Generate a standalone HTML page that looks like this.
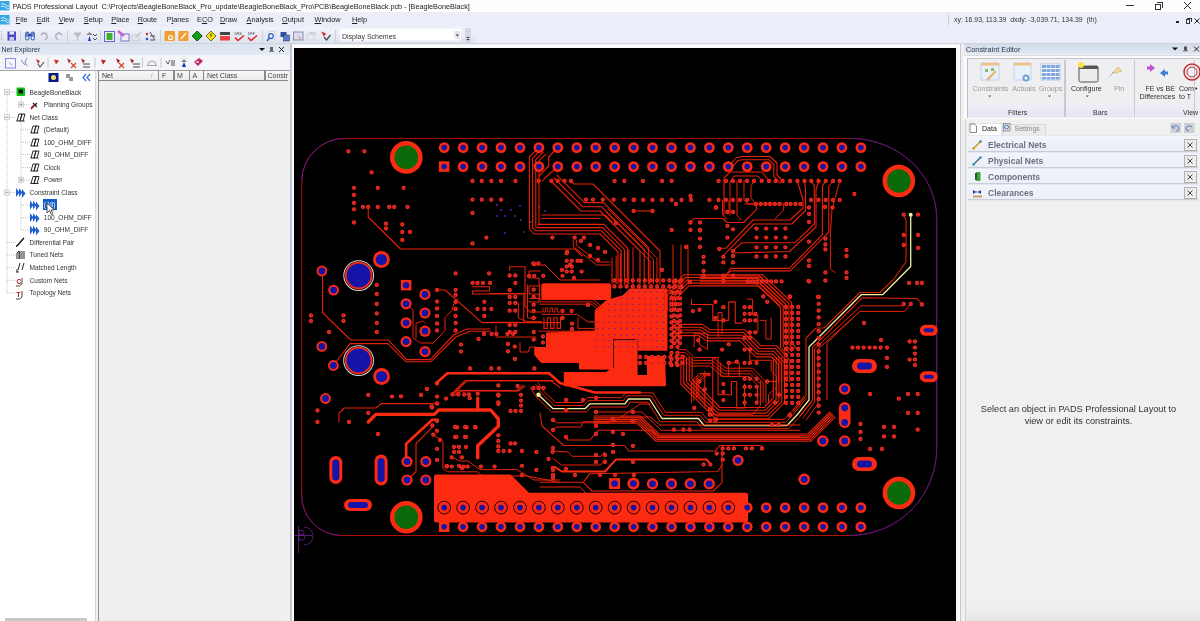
<!DOCTYPE html>
<html><head><meta charset="utf-8">
<style>
*{margin:0;padding:0;box-sizing:border-box}
html,body{width:1200px;height:621px;overflow:hidden;background:#f0f0f0;font-family:"Liberation Sans",sans-serif;font-size:7px;color:#1e1e1e;position:relative}
.a{position:absolute}
.t{position:absolute;white-space:pre;line-height:1}
#title{left:0;top:0;width:1200px;height:12px;background:#fefefe}
#menu{left:0;top:12px;width:1200px;height:15px;background:#ebeef8}
#tool{left:0;top:27px;width:1200px;height:17px;background:#ebeef8;border-bottom:1px solid #d0d3de}
#tool::before{content:'';position:absolute;left:0;top:0;width:475px;height:16px;background:linear-gradient(#f1f3fa,#dfe3ef)}
.sep{position:absolute;top:30px;width:1px;height:12px;background:#c8ccd8}
.ic{position:absolute;top:31px;width:10px;height:10px}
.mi{top:4.3px;font-size:7.3px;color:#222}
#lpanel{left:0;top:44px;width:291px;height:577px;background:#f0f0f0}
#nehdr{left:0;top:44px;width:290px;height:11px;background:linear-gradient(#dae3ef,#e4ebf4)}
#netool{left:0;top:55px;width:290px;height:15.5px;background:#f4f5f9;border-bottom:1px solid #a8a8a8}
#tree{left:0;top:71px;width:96px;height:550px;background:#fff;border-right:1px solid #d8d8d8}
#list{left:98px;top:70px;width:189px;height:551px;background:#efefef;border-left:1.5px solid #8d8d8d}
.tr{position:absolute;font-size:6.55px;color:#333;white-space:pre;line-height:1}
#canvas{left:294px;top:48px;width:662px;height:573px;background:#000}
#rpanel{left:957px;top:44px;width:243px;height:577px;background:#f0f0f0}
.sec{left:10.7px;width:230.5px;height:15.4px;background:linear-gradient(#f4f5fb,#eceef6);border-bottom:1px solid #c8ccd8}
.sec::after{content:"";position:absolute;left:216.5px;top:2.5px;width:11px;height:10px;background:#ededed;border:1px solid #b0b0b0}
.sx{position:absolute;left:219.5px;width:5px;height:5px}
.sect{left:31px;font-size:8.5px;font-weight:bold;color:#687080}
u{text-decoration:underline;text-decoration-thickness:0.5px;text-underline-offset:1px}
</style></head><body><div id="wrap" style="position:absolute;left:0;top:0;width:1200px;height:621px;overflow:hidden;filter:blur(0.3px);background:#f0f0f0">
<!-- title bar -->
<div id="title" class="a">
  <svg class="a" style="left:0;top:1px" width="10" height="10"><rect x="0" y="0" width="9.5" height="9.5" fill="#3aa6e4"/><path d="M1,3 q3,-1 5,1 t3,1 M1,5.5 q3,-1 5,1 t3,1" stroke="#e8f6ff" stroke-width="0.9" fill="none"/></svg>
  <div class="t" style="left:12.5px;top:2.5px;font-size:7.25px;color:#222">PADS Professional Layout  C:\Projects\BeagleBoneBlack_Pro_update\BeagleBoneBlack_Pro\PCB\BeagleBoneBlack.pcb - [BeagleBoneBlack]</div>
  <div class="a" style="left:1126px;top:5px;width:8px;height:1px;background:#333"></div>
  <div class="a" style="left:1155px;top:3.5px;width:6px;height:6px;border:1px solid #333;background:#fefefe"></div><div class="a" style="left:1157px;top:1.5px;width:6px;height:6px;border-top:1px solid #333;border-right:1px solid #333"></div>
  <svg class="a" style="left:1183px;top:1px" width="9" height="9"><path d="M1,1 L8,8 M8,1 L1,8" stroke="#222" stroke-width="1"/></svg>
</div>
<!-- menu -->
<div id="menu" class="a">
  <svg class="a" style="left:0;top:2.5px" width="10" height="10"><rect x="0" y="0" width="9.5" height="9.5" fill="#3aa6e4"/><path d="M1,3 q3,-1 5,1 t3,1 M1,5.5 q3,-1 5,1 t3,1" stroke="#e8f6ff" stroke-width="0.9" fill="none"/></svg>
  <div class="t mi" style="left:15.8px"><u>F</u>ile</div>
  <div class="t mi" style="left:36.7px"><u>E</u>dit</div>
  <div class="t mi" style="left:58.7px"><u>V</u>iew</div>
  <div class="t mi" style="left:83.8px"><u>S</u>etup</div>
  <div class="t mi" style="left:111.3px"><u>P</u>lace</div>
  <div class="t mi" style="left:137.7px"><u>R</u>oute</div>
  <div class="t mi" style="left:166.7px">P<u>l</u>anes</div>
  <div class="t mi" style="left:197px">E<u>C</u>O</div>
  <div class="t mi" style="left:220px"><u>D</u>raw</div>
  <div class="t mi" style="left:246.6px"><u>A</u>nalysis</div>
  <div class="t mi" style="left:282px"><u>O</u>utput</div>
  <div class="t mi" style="left:314.5px"><u>W</u>indow</div>
  <div class="t mi" style="left:352px"><u>H</u>elp</div>
  <div class="a" style="left:948px;top:3px;width:1px;height:10px;background:#c8c8d0"></div>
  <div class="t" style="left:954px;top:4.5px;font-size:6.9px;color:#333">xy: 16.93, 113.39  dxdy: -3,039.71, 134.39  (th)</div>
  <div class="a" style="left:1176px;top:9px;width:3px;height:1.5px;background:#222"></div>
  <div class="a" style="left:1185.5px;top:7px;width:4.5px;height:4.5px;border:1px solid #333"></div><div class="a" style="left:1187px;top:5.5px;width:4.5px;height:4.5px;border-top:1px solid #333;border-right:1px solid #333"></div>
  <svg class="a" style="left:1194px;top:5.5px" width="6" height="6"><path d="M0.5,0.5 L5.5,5.5 M5.5,0.5 L0.5,5.5" stroke="#222" stroke-width="1"/></svg>
</div>
<!-- toolbar -->
<div id="tool" class="a">
  <div class="a" style="left:1px;top:4px;width:1px;height:9px;border-left:1px dotted #9aa"></div>
  <svg class="a" style="left:0;top:0" width="480" height="17" viewBox="0 27 480 17">
   <rect x="7.5" y="31.5" width="8.5" height="9" fill="#4a4ac8"/><rect x="9.5" y="31.5" width="4.5" height="3" fill="#e8e8f8"/><rect x="9.5" y="37" width="4.5" height="3.5" fill="#ccd"/>
   <line x1="20.5" y1="30" x2="20.5" y2="42" stroke="#cdd0dc"/>
   <rect x="25.5" y="32" width="3.5" height="8" rx="1.5" fill="#6a8ad0" stroke="#2848a0" stroke-width="0.7"/><rect x="31" y="32" width="3.5" height="8" rx="1.5" fill="#6a8ad0" stroke="#2848a0" stroke-width="0.7"/><rect x="28.5" y="34" width="3" height="2" fill="#2848a0"/><circle cx="27.2" cy="38" r="1.2" fill="#e8f0ff"/><circle cx="32.8" cy="38" r="1.2" fill="#e8f0ff"/>
   <path d="M41,35 q3,-4 6,0 q1,3 -2,5" fill="none" stroke="#aab" stroke-width="1.3"/><path d="M62,35 q-3,-4 -6,0 q-1,3 2,5" fill="none" stroke="#aab" stroke-width="1.3"/>
   <line x1="67.5" y1="30" x2="67.5" y2="42" stroke="#cdd0dc"/>
   <path d="M74,33 h7 l-3.5,4 z M77.5,37 v4" fill="#b8b8c0" stroke="#b8b8c0"/>
   <path d="M86,35 h7 l-3.5,-3 z" fill="#888"/><path d="M88,41 l1.5,-5 l1.5,5z" fill="#1030d0"/><path d="M93,34 l2,2 l2,-2 M93,38 l2,2 l2,-2" stroke="#555" fill="none"/>
   <line x1="100.5" y1="30" x2="100.5" y2="42" stroke="#cdd0dc"/>
   <rect x="104.5" y="31.5" width="10" height="10" fill="#eef" stroke="#6060d8"/><rect x="106.5" y="33" width="6" height="7" fill="#40b030"/>
   <rect x="121" y="34" width="8" height="7" fill="#eef" stroke="#7070d8"/><path d="M118,31 l6,5" stroke="#d060d0" stroke-width="2.5"/>
   <rect x="132" y="35" width="7" height="6" fill="none" stroke="#c8c8d0"/><path d="M135,38 l6,-6" stroke="#c8c8d0" stroke-width="1.5"/>
   <circle cx="147" cy="34" r="1.2" fill="#e02020"/><circle cx="147" cy="39" r="1.2" fill="#2040e0"/><path d="M150,32 l5,8 M150,36 h5 M150,40 h5" stroke="#555" stroke-width="1"/>
   <line x1="160.5" y1="30" x2="160.5" y2="42" stroke="#cdd0dc"/>
   <rect x="164.5" y="31" width="10.5" height="10" rx="1" fill="#f0a030"/><circle cx="170.5" cy="37.5" r="2" fill="none" stroke="#fff" stroke-width="1.2"/>
   <rect x="178.3" y="31" width="10.2" height="10" rx="1" fill="#f0a030"/><path d="M181,39 l5,-6" stroke="#fff" stroke-width="1.2"/>
   <path d="M197.2,31 l5,5 l-5,5 l-5,-5z" fill="#10a010" stroke="#085008"/>
   <path d="M211,31 l5,5 l-5,5 l-5,-5z" fill="#f0e020" stroke="#807010"/><rect x="210.5" y="33.5" width="1" height="3" fill="#222"/>
   <rect x="220" y="32" width="10" height="3" fill="#444"/><rect x="220" y="36" width="10" height="4.5" fill="#f04040"/>
   <text x="234.5" y="35" font-size="3.5" fill="#333" font-family="Liberation Sans">DRS</text><path d="M235,37.5 l3,3 l6,-5" stroke="#e02020" stroke-width="1.4" fill="none"/>
   <text x="248" y="35" font-size="3.5" fill="#333" font-family="Liberation Sans">DFF</text><path d="M248,37.5 l3,3 l6,-5" stroke="#e02020" stroke-width="1.4" fill="none"/>
   <line x1="262.5" y1="30" x2="262.5" y2="42" stroke="#cdd0dc"/>
   <rect x="269" y="31.5" width="6" height="8" fill="#f4f4fa" stroke="#c0c4d0" stroke-width="0.6"/><circle cx="271" cy="36" r="2.3" fill="none" stroke="#2060c0" stroke-width="1.2"/><path d="M269.5,38 l-2.5,3" stroke="#2060c0" stroke-width="1.4"/>
   <rect x="280.5" y="32" width="6" height="5" fill="#3050a0"/><rect x="283.5" y="35" width="6" height="6" fill="#5080d0" stroke="#333" stroke-width="0.5"/>
   <rect x="293.5" y="32" width="9.5" height="8" fill="#dde" stroke="#6b7aa8" stroke-width="0.8"/><path d="M297,34 l4,5 l-1,1z" fill="#d0a060"/>
   <rect x="307" y="34" width="7" height="6" fill="#e8e8ee" stroke="#d4d4dc"/><rect x="309" y="32" width="7" height="3" fill="#d0d0d8"/>
   <path d="M321,31.5 l5,2 l-2,3z" fill="#e02020"/><path d="M324,37 l2.5,3 l4,-5" stroke="#444" stroke-width="1.3" fill="none"/>
   <line x1="335.5" y1="30" x2="335.5" y2="42" stroke="#cdd0dc"/>
   <rect x="340" y="28.8" width="121" height="11.8" fill="#fff"/><rect x="454.5" y="31" width="5.5" height="8" fill="#e4e4ea"/><path d="M455.8,34.5 h3 l-1.5,2z" fill="#333"/>
   <rect x="465" y="28" width="6" height="15" rx="1" fill="#d4d8e4"/><path d="M466.5,39 h3 l-1.5,1.5z" fill="#222"/><rect x="466.5" y="37" width="3" height="0.8" fill="#222"/>
  </svg>
  <div class="t" style="left:342px;top:5.7px;font-size:7px;color:#333">Display Schemes</div>
</div>
<div id="lpanel" class="a"></div>
<div id="nehdr" class="a">
  <div class="t" style="left:1.4px;top:2px;font-size:7px;color:#2a3550">Net Explorer</div>
  <svg class="a" style="left:255px;top:0" width="32" height="11"><path d="M4,4 h6 l-3,3z" fill="#111"/><rect x="15" y="3" width="3" height="4" fill="#666"/><rect x="14" y="7" width="5" height="0.8" fill="#666"/><path d="M24,3 l5,5 M29,3 l-5,5" stroke="#222" stroke-width="1"/></svg>
</div>
<div id="netool" class="a">
  <svg class="a" style="left:0;top:0" width="287" height="15" viewBox="0 55 287 15">
   <rect x="5.5" y="58.5" width="10" height="9.5" fill="#f4f4ff" stroke="#7b80e0" stroke-width="0.9"/><path d="M8,61 l5,4 l-2,0.5z" fill="#bbb"/>
   <path d="M21,60 l4,5 M27,58 l-2,4 l2,4" stroke="#7a8ab8" stroke-width="1" fill="none"/>
   <path d="M36,59 l4,2 l-2,3z" fill="#c03030"/><path d="M38,64 l2,3 l4,-5" stroke="#555" stroke-width="1.2" fill="none"/>
   <line x1="48" y1="57.5" x2="48" y2="68" stroke="#c4c8d4"/>
   <path d="M54,59.5 l5,1 l-3,4z" fill="#d03020"/>
   <path d="M67,58.5 l4,2 l-2,3z" fill="#b03030"/><path d="M71,63 l5,5 M76,63 l-5,5" stroke="#e04020" stroke-width="1.1"/>
   <path d="M81,58.5 l4,2 l-2,3z" fill="#b03030"/><path d="M83,64 h7 M83,67 h7" stroke="#333" stroke-width="0.9"/>
   <line x1="95" y1="57.5" x2="95" y2="68" stroke="#c4c8d4"/>
   <path d="M101,59.5 l5,1 l-3,4z" fill="#c01818"/>
   <path d="M116,58.5 l4,2 l-2,3z" fill="#a01818"/><path d="M119,63 l5,5 M124,63 l-5,5" stroke="#e04020" stroke-width="1.1"/>
   <path d="M130,58.5 l4,2 l-2,3z" fill="#a01818"/><path d="M133,64 h7 M133,67 h7" stroke="#333" stroke-width="0.9"/>
   <line x1="142.5" y1="57.5" x2="142.5" y2="68" stroke="#c4c8d4"/>
   <path d="M148,65 a4,4 0 0 1 8,0 M147,65.5 h10" stroke="#999" stroke-width="0.9" fill="none"/>
   <line x1="161" y1="57.5" x2="161" y2="68" stroke="#c4c8d4"/>
   <path d="M166,61 l2,3 l2,-4 M171,61 h4 M171,63 h4 M171,65 h4" stroke="#444" stroke-width="0.9" fill="none"/>
   <path d="M181,62 h6 l-3,-3z" fill="#888"/><path d="M182,67 l2,-5 l2,5z" fill="#1030d0"/>
   <path d="M194,62 l5,-4 l4,3 l-5,5z" fill="#c02080"/><rect x="196" y="61" width="3" height="2" fill="#f0c040"/>
  </svg>
</div>
<div id="tree" class="a">
  <svg class="a" style="left:0;top:0" width="96" height="20" viewBox="0 71 96 20">
   <rect x="48.5" y="73" width="10" height="9" fill="#0a1a8a"/><circle cx="53.5" cy="77.5" r="2.5" fill="#f0e060"/>
   <path d="M66,74 h4 v3 h3 v4 h-4 v-3 h-3z" fill="#9a9a9a"/>
   <path d="M86,74 l-3,3.5 l3,3.5 M90,74 l-3,3.5 l3,3.5" stroke="#3070d0" stroke-width="1.2" fill="none"/>
  </svg>
  <svg class="a" style="left:0;top:0" width="96" height="240" viewBox="0 71 96 240">
   <g stroke="#a0a0a0" stroke-width="0.6" stroke-dasharray="1,1" fill="none">
    <path d="M7,95 V192.5 M7,192.5 V293 M10,92.2 H15 M10,117.4 H15 M10,192.5 H15 M7,242.5 H16 M7,255 H16 M7,267.6 H16 M7,280.3 H16 M7,293 H16"/>
    <path d="M21,95 V104.5 M24,104.5 H30 M21,120 V180 M21,129.6 H30 M21,142.3 H30 M21,154.5 H30 M21,167.5 H30 M24,180 H30 M21,195 V230 M21,205 H30 M21,217.7 H30 M21,230 H30"/>
   </g>
   <g fill="#f4f4f4" stroke="#b8b8b8" stroke-width="0.6">
    <rect x="4.5" y="89.7" width="5" height="5"/><rect x="4.5" y="114.9" width="5" height="5"/><rect x="4.5" y="190" width="5" height="5"/>
    <rect x="18.5" y="102" width="5" height="5"/><rect x="18.5" y="177.5" width="5" height="5"/>
   </g>
   <g stroke="#777" stroke-width="0.6"><path d="M5.5,92.2 h3 M5.5,117.4 h3 M5.5,192.5 h3 M19.5,104.5 h3 M19.5,180 h3 M21,103 v3 M21,178.5 v3"/></g>
   <rect x="16.5" y="87.5" width="8.5" height="8.5" rx="1" fill="#10c010"/><rect x="18.5" y="89.5" width="4.5" height="4" fill="#111"/>
   <path d="M31,109 l6,-6 M33,103 l4,4" stroke="#222" stroke-width="1.2"/><path d="M31,108 l3,-3" stroke="#e02020" stroke-width="1.4"/>
   <g fill="none" stroke="#111" stroke-width="0.9">
    <path d="M17,121 l2,-7 h3 l-2,7 M20,121 l2,-7 h3 l-2,7 M16.5,121 h8"/>
    <path d="M31,133 l2,-7 h3 l-2,7 M34,133 l2,-7 h3 l-2,7 M30.5,133 h8"/>
    <path d="M31,146 l2,-7 h3 l-2,7 M34,146 l2,-7 h3 l-2,7 M30.5,146 h8"/>
    <path d="M31,158 l2,-7 h3 l-2,7 M34,158 l2,-7 h3 l-2,7 M30.5,158 h8"/>
    <path d="M31,171 l2,-7 h3 l-2,7 M34,171 l2,-7 h3 l-2,7 M30.5,171 h8"/>
    <path d="M31,183.5 l2,-7 h3 l-2,7 M34,183.5 l2,-7 h3 l-2,7 M30.5,183.5 h8"/>
   </g>
   <g fill="#2060d0">
    <path d="M16,188 l3.5,4.5 l-3.5,4.5z M19,188 l3.5,4.5 l-3.5,4.5z M22,189 l3.5,4.5 l-3.5,4.5z"/>
    <path d="M30,200.5 l3.5,4.5 l-3.5,4.5z M33,200.5 l3.5,4.5 l-3.5,4.5z M36,201.5 l3.5,4.5 l-3.5,4.5z"/>
    <path d="M30,213 l3.5,4.5 l-3.5,4.5z M33,213 l3.5,4.5 l-3.5,4.5z M36,214 l3.5,4.5 l-3.5,4.5z"/>
    <path d="M30,225.5 l3.5,4.5 l-3.5,4.5z M33,225.5 l3.5,4.5 l-3.5,4.5z M36,226.5 l3.5,4.5 l-3.5,4.5z"/>
   </g>
   <path d="M17,246 l6,-7 M17,246 l-1,0 M23,239 l1,-1" stroke="#111" stroke-width="1.4"/>
   <path d="M17,259 v-6 l2,-2 v8 M20,259 v-8 M22,259 v-8 M24,259 v-8" stroke="#111" stroke-width="0.9" fill="none"/>
   <path d="M17,272 v-3 M18,270 l2,-7 M22,270 l2,-7 M16,272 h3" stroke="#111" stroke-width="0.9" fill="none"/>
   <text x="16.5" y="284" font-size="6.5" font-weight="bold" fill="#b01010" font-family="Liberation Sans">C</text><path d="M16,286 q4,1 6,-2 v-6" stroke="#111" stroke-width="0.8" fill="none"/>
   <text x="16.5" y="296.5" font-size="6.5" font-weight="bold" fill="#b01010" font-family="Liberation Sans">T</text><path d="M16,299 q4,1 6,-2 v-6" stroke="#111" stroke-width="0.8" fill="none"/>
  </svg>
  <div class="a" style="left:43px;top:127.7px;width:13.7px;height:11.8px;background:#1060d0"></div>
  <div class="tr" style="left:29.6px;top:18.5px">BeagleBoneBlack</div>
  <div class="tr" style="left:43.8px;top:30.8px">Planning Groups</div>
  <div class="tr" style="left:29.6px;top:43.7px">Net Class</div>
  <div class="tr" style="left:43.8px;top:55.9px">(Default)</div>
  <div class="tr" style="left:43.8px;top:68.6px">100_OHM_DIFF</div>
  <div class="tr" style="left:43.8px;top:80.8px">90_OHM_DIFF</div>
  <div class="tr" style="left:43.8px;top:93.8px">Clock</div>
  <div class="tr" style="left:43.8px;top:106.3px">Power</div>
  <div class="tr" style="left:29.6px;top:118.8px">Constraint Class</div>
  <div class="tr" style="left:43.8px;top:131.3px;color:#fff">(All)</div>
  <div class="tr" style="left:43.8px;top:144.0px">100_OHM_DIFF</div>
  <div class="tr" style="left:43.8px;top:156.3px">90_OHM_DIFF</div>
  <div class="tr" style="left:29.6px;top:168.8px">Differential Pair</div>
  <div class="tr" style="left:29.6px;top:181.3px">Tuned Nets</div>
  <div class="tr" style="left:29.6px;top:193.9px">Matched Length</div>
  <div class="tr" style="left:29.6px;top:206.6px">Custom Nets</div>
  <div class="tr" style="left:29.6px;top:219.2px">Topology Nets</div>
  <svg class="a" style="left:46px;top:131px" width="12" height="14"><path d="M1,1 v10 l2.5,-2.5 l2,4 l1.5,-0.8 l-2,-3.8 h3.5z" fill="#fff" stroke="#222" stroke-width="0.8"/></svg>
  <div class="a" style="left:5px;top:547px;width:82px;height:3px;background:#c8c8c8"></div>
</div>
<div id="list" class="a">
  <div class="a" style="left:0;top:0;width:189px;height:11px;background:linear-gradient(#f8f8f8,#ececec);border-bottom:1.5px solid #8a8a8a;border-top:1px solid #9a9a9a"></div>
  <div class="a" style="left:58.5px;top:0;width:1.5px;height:11px;background:#8a8a8a"></div>
  <div class="a" style="left:74px;top:0;width:1.5px;height:11px;background:#8a8a8a"></div>
  <div class="a" style="left:89.5px;top:0;width:1.5px;height:11px;background:#8a8a8a"></div>
  <div class="a" style="left:103.5px;top:0;width:1.5px;height:11px;background:#8a8a8a"></div>
  <div class="a" style="left:165px;top:0;width:1.5px;height:11px;background:#8a8a8a"></div>
  <div class="t" style="left:3px;top:2.3px;font-size:7px;color:#333">Net</div>
  <div class="t" style="left:52px;top:2.3px;font-size:6px;color:#999">/</div>
  <div class="t" style="left:63px;top:2.3px;font-size:7px;color:#444">F</div>
  <div class="t" style="left:78px;top:2.3px;font-size:7px;color:#444">M</div>
  <div class="t" style="left:93.5px;top:2.3px;font-size:7px;color:#444">A</div>
  <div class="t" style="left:108px;top:2.3px;font-size:7px;color:#444">Net Class</div>
  <div class="t" style="left:168.5px;top:2.3px;font-size:7px;color:#444">Constr</div>
</div>
<div class="a" style="left:290px;top:44px;width:1.5px;height:577px;background:#c0c4d0"></div><div class="a" style="left:291.5px;top:45px;width:664.5px;height:576px;background:#fbfbfd"></div><div id="canvas" class="a"></div>
<svg class="a" style="left:0;top:0" width="1200" height="621" viewBox="0 0 1200 621"><defs><clipPath id="cc"><rect x="294" y="48" width="662" height="573"/></clipPath></defs><g clip-path="url(#cc)">
<rect x="541.3" y="283.3" width="69.8" height="16.7" rx="2.5" fill="#fc2a10"/>
<polygon points="630.0,289.2 666.7,289.2 666.7,350.0 638.4,350.0 638.4,338.4 612.7,338.4 612.7,368.5 595.4,368.5 595.4,310.7 607.0,300.6 623.0,296.0" fill="#fc2a10" stroke="#fc2a10" stroke-width="1.5" stroke-linejoin="round"/>
<polygon points="547.0,333.5 612.7,331.0 612.7,368.5 580.0,368.5 580.0,362.0 541.7,362.0 535.2,354.6 535.2,348.1 547.0,348.1" fill="#fc2a10" stroke="#fc2a10" stroke-width="2" stroke-linejoin="round"/>
<polygon points="612.7,338.4 636.6,338.4 636.6,376.0 648.0,376.0 648.0,357.0 664.0,357.0 665.0,385.3 564.8,385.3 564.8,373.1 606.5,373.1 612.7,368.5" fill="#fc2a10" stroke="#fc2a10" stroke-width="2" stroke-linejoin="round"/>
<polygon points="651.0,357.4 662.0,357.4 664.0,385.3 648.0,385.3 651.0,371.3" fill="#fc2a10" stroke="#fc2a10" stroke-width="1.5" stroke-linejoin="round"/>
<path d="M613.5,368 V339.5 H636" fill="none" stroke="#3a0800" stroke-width="0.9"/>
<polyline points="544.0,317.7 544.0,317.7 544.0,328.4 547.3,328.4 547.3,328.4 547.3,317.7 550.6,317.7 550.6,317.7 550.6,328.4 553.9,328.4 553.9,328.4 553.9,317.7 557.2,317.7 557.2,317.7 557.2,328.4 560.5,328.4 560.5,328.4 560.5,317.7 563.8,317.7" fill="none" stroke="#e82008" stroke-width="1.1" stroke-linejoin="round" stroke-linecap="round"/>
<polyline points="543.0,308.0 543.0,308.0 543.0,312.0 545.4,312.0 545.4,312.0 545.4,308.0 547.8,308.0 547.8,308.0 547.8,312.0 550.2,312.0 550.2,312.0 550.2,308.0 552.6,308.0 552.6,308.0 552.6,312.0 555.0,312.0 555.0,312.0 555.0,308.0 557.4,308.0 557.4,308.0 557.4,312.0 559.8,312.0" fill="none" stroke="#e82008" stroke-width="0.9" stroke-linejoin="round" stroke-linecap="round"/>
<polyline points="490.0,293.5 523.8,293.5 523.8,322.2 536.0,322.2" fill="none" stroke="#e82008" stroke-width="1.1" stroke-linejoin="round" stroke-linecap="round"/>
<polyline points="527.5,285.0 527.5,318.0 536.0,318.0" fill="none" stroke="#e82008" stroke-width="1.0" stroke-linejoin="round" stroke-linecap="round"/>
<polyline points="490.0,322.2 520.0,322.2" fill="none" stroke="#e82008" stroke-width="1.1" stroke-linejoin="round" stroke-linecap="round"/>
<polyline points="530.0,298.5 539.6,298.5 539.6,285.0" fill="none" stroke="#e82008" stroke-width="1.0" stroke-linejoin="round" stroke-linecap="round"/>
<polyline points="539.6,304.2 591.5,304.2 600.0,311.0" fill="none" stroke="#e82008" stroke-width="1.0" stroke-linejoin="round" stroke-linecap="round"/>
<polyline points="539.6,301.9 592.3,301.9 601.4,309.2" fill="none" stroke="#e82008" stroke-width="1.0" stroke-linejoin="round" stroke-linecap="round"/>
<polyline points="539.6,299.6 593.1,299.6 602.9,307.4" fill="none" stroke="#e82008" stroke-width="1.0" stroke-linejoin="round" stroke-linecap="round"/>
<polyline points="541.9,314.3 576.8,314.3 588.0,322.0 600.0,322.0" fill="none" stroke="#e82008" stroke-width="1.0" stroke-linejoin="round" stroke-linecap="round"/>
<polyline points="578.0,317.7 578.0,328.4 600.0,328.4" fill="none" stroke="#e82008" stroke-width="1.0" stroke-linejoin="round" stroke-linecap="round"/>
<polyline points="538.5,331.2 593.7,331.2" fill="none" stroke="#e82008" stroke-width="1.0" stroke-linejoin="round" stroke-linecap="round"/>
<polyline points="496.0,326.0 496.0,337.0 536.0,337.0" fill="none" stroke="#e82008" stroke-width="1.0" stroke-linejoin="round" stroke-linecap="round"/>
<polyline points="520.0,343.0 520.0,352.0 528.0,352.0 530.0,347.0 536.0,347.0" fill="none" stroke="#e82008" stroke-width="1.0" stroke-linejoin="round" stroke-linecap="round"/>
<circle cx="533.7" cy="289.7" r="2.15" fill="#fc2a10"/><circle cx="533.7" cy="289.7" r="0.7" fill="#5a1a8a"/>
<circle cx="533.7" cy="297.0" r="2.15" fill="#fc2a10"/><circle cx="533.7" cy="297.0" r="0.7" fill="#5a1a8a"/>
<circle cx="533.7" cy="304.7" r="2.15" fill="#fc2a10"/><circle cx="533.7" cy="304.7" r="0.7" fill="#5a1a8a"/>
<circle cx="533.7" cy="311.0" r="2.15" fill="#fc2a10"/><circle cx="533.7" cy="311.0" r="0.7" fill="#5a1a8a"/>
<circle cx="533.7" cy="318.0" r="2.15" fill="#fc2a10"/><circle cx="533.7" cy="318.0" r="0.7" fill="#5a1a8a"/>
<circle cx="533.7" cy="332.0" r="2.15" fill="#fc2a10"/><circle cx="533.7" cy="332.0" r="0.7" fill="#5a1a8a"/>
<circle cx="533.7" cy="339.6" r="2.15" fill="#fc2a10"/><circle cx="533.7" cy="339.6" r="0.7" fill="#5a1a8a"/>
<circle cx="543.0" cy="336.5" r="2.15" fill="#fc2a10"/><circle cx="543.0" cy="336.5" r="0.7" fill="#5a1a8a"/>
<circle cx="543.0" cy="342.6" r="2.15" fill="#fc2a10"/><circle cx="543.0" cy="342.6" r="0.7" fill="#5a1a8a"/>
<circle cx="562.5" cy="311.0" r="2.15" fill="#fc2a10"/><circle cx="562.5" cy="311.0" r="0.7" fill="#5a1a8a"/>
<circle cx="571.6" cy="311.0" r="2.15" fill="#fc2a10"/><circle cx="571.6" cy="311.0" r="0.7" fill="#5a1a8a"/>
<circle cx="562.5" cy="318.0" r="2.15" fill="#fc2a10"/><circle cx="562.5" cy="318.0" r="0.7" fill="#5a1a8a"/>
<circle cx="572.0" cy="323.6" r="2.15" fill="#fc2a10"/><circle cx="572.0" cy="323.6" r="0.7" fill="#5a1a8a"/>
<circle cx="572.0" cy="329.0" r="2.15" fill="#fc2a10"/><circle cx="572.0" cy="329.0" r="0.7" fill="#5a1a8a"/>
<circle cx="588.0" cy="305.0" r="2.15" fill="#fc2a10"/><circle cx="588.0" cy="305.0" r="0.7" fill="#5a1a8a"/>
<circle cx="581.0" cy="241.0" r="2.15" fill="#fc2a10"/><circle cx="581.0" cy="241.0" r="0.7" fill="#5a1a8a"/>
<circle cx="590.0" cy="245.0" r="2.15" fill="#fc2a10"/><circle cx="590.0" cy="245.0" r="0.7" fill="#5a1a8a"/>
<circle cx="598.0" cy="248.0" r="2.15" fill="#fc2a10"/><circle cx="598.0" cy="248.0" r="0.7" fill="#5a1a8a"/>
<circle cx="605.0" cy="252.0" r="2.15" fill="#fc2a10"/><circle cx="605.0" cy="252.0" r="0.7" fill="#5a1a8a"/>
<circle cx="590.0" cy="256.0" r="2.15" fill="#fc2a10"/><circle cx="590.0" cy="256.0" r="0.7" fill="#5a1a8a"/>
<circle cx="598.0" cy="260.0" r="2.15" fill="#fc2a10"/><circle cx="598.0" cy="260.0" r="0.7" fill="#5a1a8a"/>
<circle cx="581.0" cy="261.0" r="2.15" fill="#fc2a10"/><circle cx="581.0" cy="261.0" r="0.7" fill="#5a1a8a"/>
<circle cx="567.0" cy="252.0" r="2.15" fill="#fc2a10"/><circle cx="567.0" cy="252.0" r="0.7" fill="#5a1a8a"/>
<circle cx="570.0" cy="265.0" r="2.15" fill="#fc2a10"/><circle cx="570.0" cy="265.0" r="0.7" fill="#5a1a8a"/>
<circle cx="574.0" cy="278.0" r="2.15" fill="#fc2a10"/><circle cx="574.0" cy="278.0" r="0.7" fill="#5a1a8a"/>
<circle cx="562.0" cy="270.0" r="2.15" fill="#fc2a10"/><circle cx="562.0" cy="270.0" r="0.7" fill="#5a1a8a"/>
<circle cx="597.0" cy="322.5" r="0.75" fill="#6a2090"/>
<circle cx="597.0" cy="328.6" r="0.75" fill="#6a2090"/>
<circle cx="597.0" cy="334.7" r="0.75" fill="#6a2090"/>
<circle cx="597.0" cy="340.8" r="0.75" fill="#6a2090"/>
<circle cx="597.0" cy="346.9" r="0.75" fill="#6a2090"/>
<circle cx="603.0" cy="322.5" r="0.75" fill="#6a2090"/>
<circle cx="603.0" cy="328.6" r="0.75" fill="#6a2090"/>
<circle cx="603.0" cy="334.7" r="0.75" fill="#6a2090"/>
<circle cx="603.0" cy="340.8" r="0.75" fill="#6a2090"/>
<circle cx="603.0" cy="346.9" r="0.75" fill="#6a2090"/>
<circle cx="609.0" cy="304.2" r="0.75" fill="#6a2090"/>
<circle cx="609.0" cy="310.3" r="0.75" fill="#6a2090"/>
<circle cx="609.0" cy="316.4" r="0.75" fill="#6a2090"/>
<circle cx="609.0" cy="322.5" r="0.75" fill="#6a2090"/>
<circle cx="609.0" cy="328.6" r="0.75" fill="#6a2090"/>
<circle cx="609.0" cy="334.7" r="0.75" fill="#6a2090"/>
<circle cx="609.0" cy="340.8" r="0.75" fill="#6a2090"/>
<circle cx="609.0" cy="346.9" r="0.75" fill="#6a2090"/>
<circle cx="615.0" cy="304.2" r="0.75" fill="#6a2090"/>
<circle cx="615.0" cy="310.3" r="0.75" fill="#6a2090"/>
<circle cx="615.0" cy="316.4" r="0.75" fill="#6a2090"/>
<circle cx="615.0" cy="322.5" r="0.75" fill="#6a2090"/>
<circle cx="615.0" cy="328.6" r="0.75" fill="#6a2090"/>
<circle cx="615.0" cy="334.7" r="0.75" fill="#6a2090"/>
<circle cx="615.0" cy="340.8" r="0.75" fill="#6a2090"/>
<circle cx="615.0" cy="346.9" r="0.75" fill="#6a2090"/>
<circle cx="621.0" cy="292.0" r="0.75" fill="#6a2090"/>
<circle cx="621.0" cy="298.1" r="0.75" fill="#6a2090"/>
<circle cx="621.0" cy="304.2" r="0.75" fill="#6a2090"/>
<circle cx="621.0" cy="310.3" r="0.75" fill="#6a2090"/>
<circle cx="621.0" cy="316.4" r="0.75" fill="#6a2090"/>
<circle cx="621.0" cy="322.5" r="0.75" fill="#6a2090"/>
<circle cx="621.0" cy="328.6" r="0.75" fill="#6a2090"/>
<circle cx="621.0" cy="334.7" r="0.75" fill="#6a2090"/>
<circle cx="621.0" cy="340.8" r="0.75" fill="#6a2090"/>
<circle cx="621.0" cy="346.9" r="0.75" fill="#6a2090"/>
<circle cx="627.0" cy="292.0" r="0.75" fill="#6a2090"/>
<circle cx="627.0" cy="298.1" r="0.75" fill="#6a2090"/>
<circle cx="627.0" cy="304.2" r="0.75" fill="#6a2090"/>
<circle cx="627.0" cy="310.3" r="0.75" fill="#6a2090"/>
<circle cx="627.0" cy="316.4" r="0.75" fill="#6a2090"/>
<circle cx="627.0" cy="322.5" r="0.75" fill="#6a2090"/>
<circle cx="627.0" cy="328.6" r="0.75" fill="#6a2090"/>
<circle cx="627.0" cy="334.7" r="0.75" fill="#6a2090"/>
<circle cx="627.0" cy="340.8" r="0.75" fill="#6a2090"/>
<circle cx="627.0" cy="346.9" r="0.75" fill="#6a2090"/>
<circle cx="633.0" cy="292.0" r="0.75" fill="#6a2090"/>
<circle cx="633.0" cy="298.1" r="0.75" fill="#6a2090"/>
<circle cx="633.0" cy="304.2" r="0.75" fill="#6a2090"/>
<circle cx="633.0" cy="310.3" r="0.75" fill="#6a2090"/>
<circle cx="633.0" cy="316.4" r="0.75" fill="#6a2090"/>
<circle cx="633.0" cy="322.5" r="0.75" fill="#6a2090"/>
<circle cx="633.0" cy="328.6" r="0.75" fill="#6a2090"/>
<circle cx="633.0" cy="334.7" r="0.75" fill="#6a2090"/>
<circle cx="633.0" cy="340.8" r="0.75" fill="#6a2090"/>
<circle cx="633.0" cy="346.9" r="0.75" fill="#6a2090"/>
<circle cx="639.0" cy="292.0" r="0.75" fill="#6a2090"/>
<circle cx="639.0" cy="298.1" r="0.75" fill="#6a2090"/>
<circle cx="639.0" cy="304.2" r="0.75" fill="#6a2090"/>
<circle cx="639.0" cy="310.3" r="0.75" fill="#6a2090"/>
<circle cx="639.0" cy="316.4" r="0.75" fill="#6a2090"/>
<circle cx="639.0" cy="322.5" r="0.75" fill="#6a2090"/>
<circle cx="639.0" cy="328.6" r="0.75" fill="#6a2090"/>
<circle cx="639.0" cy="334.7" r="0.75" fill="#6a2090"/>
<circle cx="639.0" cy="340.8" r="0.75" fill="#6a2090"/>
<circle cx="639.0" cy="346.9" r="0.75" fill="#6a2090"/>
<circle cx="645.0" cy="292.0" r="0.75" fill="#6a2090"/>
<circle cx="645.0" cy="298.1" r="0.75" fill="#6a2090"/>
<circle cx="645.0" cy="304.2" r="0.75" fill="#6a2090"/>
<circle cx="645.0" cy="310.3" r="0.75" fill="#6a2090"/>
<circle cx="645.0" cy="316.4" r="0.75" fill="#6a2090"/>
<circle cx="645.0" cy="322.5" r="0.75" fill="#6a2090"/>
<circle cx="645.0" cy="328.6" r="0.75" fill="#6a2090"/>
<circle cx="645.0" cy="334.7" r="0.75" fill="#6a2090"/>
<circle cx="645.0" cy="340.8" r="0.75" fill="#6a2090"/>
<circle cx="645.0" cy="346.9" r="0.75" fill="#6a2090"/>
<circle cx="651.0" cy="292.0" r="0.75" fill="#6a2090"/>
<circle cx="651.0" cy="298.1" r="0.75" fill="#6a2090"/>
<circle cx="651.0" cy="304.2" r="0.75" fill="#6a2090"/>
<circle cx="651.0" cy="310.3" r="0.75" fill="#6a2090"/>
<circle cx="651.0" cy="316.4" r="0.75" fill="#6a2090"/>
<circle cx="651.0" cy="322.5" r="0.75" fill="#6a2090"/>
<circle cx="651.0" cy="328.6" r="0.75" fill="#6a2090"/>
<circle cx="651.0" cy="334.7" r="0.75" fill="#6a2090"/>
<circle cx="651.0" cy="340.8" r="0.75" fill="#6a2090"/>
<circle cx="651.0" cy="346.9" r="0.75" fill="#6a2090"/>
<circle cx="657.0" cy="292.0" r="0.75" fill="#6a2090"/>
<circle cx="657.0" cy="298.1" r="0.75" fill="#6a2090"/>
<circle cx="657.0" cy="304.2" r="0.75" fill="#6a2090"/>
<circle cx="657.0" cy="310.3" r="0.75" fill="#6a2090"/>
<circle cx="657.0" cy="316.4" r="0.75" fill="#6a2090"/>
<circle cx="657.0" cy="322.5" r="0.75" fill="#6a2090"/>
<circle cx="657.0" cy="328.6" r="0.75" fill="#6a2090"/>
<circle cx="657.0" cy="334.7" r="0.75" fill="#6a2090"/>
<circle cx="657.0" cy="340.8" r="0.75" fill="#6a2090"/>
<circle cx="657.0" cy="346.9" r="0.75" fill="#6a2090"/>
<circle cx="663.0" cy="292.0" r="0.75" fill="#6a2090"/>
<circle cx="663.0" cy="298.1" r="0.75" fill="#6a2090"/>
<circle cx="663.0" cy="304.2" r="0.75" fill="#6a2090"/>
<circle cx="663.0" cy="310.3" r="0.75" fill="#6a2090"/>
<circle cx="663.0" cy="316.4" r="0.75" fill="#6a2090"/>
<circle cx="663.0" cy="322.5" r="0.75" fill="#6a2090"/>
<circle cx="663.0" cy="328.6" r="0.75" fill="#6a2090"/>
<circle cx="663.0" cy="334.7" r="0.75" fill="#6a2090"/>
<circle cx="663.0" cy="340.8" r="0.75" fill="#6a2090"/>
<circle cx="663.0" cy="346.9" r="0.75" fill="#6a2090"/>
<circle cx="614.4" cy="280.5" r="2.15" fill="#fc2a10"/><circle cx="614.4" cy="280.5" r="0.7" fill="#5a1a8a"/>
<circle cx="614.4" cy="286.5" r="2.15" fill="#fc2a10"/><circle cx="614.4" cy="286.5" r="0.7" fill="#5a1a8a"/>
<circle cx="620.5" cy="280.5" r="2.15" fill="#fc2a10"/><circle cx="620.5" cy="280.5" r="0.7" fill="#5a1a8a"/>
<circle cx="620.5" cy="286.5" r="2.15" fill="#fc2a10"/><circle cx="620.5" cy="286.5" r="0.7" fill="#5a1a8a"/>
<circle cx="626.6" cy="280.5" r="2.15" fill="#fc2a10"/><circle cx="626.6" cy="280.5" r="0.7" fill="#5a1a8a"/>
<circle cx="626.6" cy="286.5" r="2.15" fill="#fc2a10"/><circle cx="626.6" cy="286.5" r="0.7" fill="#5a1a8a"/>
<circle cx="632.7" cy="280.5" r="2.15" fill="#fc2a10"/><circle cx="632.7" cy="280.5" r="0.7" fill="#5a1a8a"/>
<circle cx="632.7" cy="286.5" r="2.15" fill="#fc2a10"/><circle cx="632.7" cy="286.5" r="0.7" fill="#5a1a8a"/>
<circle cx="638.8" cy="280.5" r="2.15" fill="#fc2a10"/><circle cx="638.8" cy="280.5" r="0.7" fill="#5a1a8a"/>
<circle cx="638.8" cy="286.5" r="2.15" fill="#fc2a10"/><circle cx="638.8" cy="286.5" r="0.7" fill="#5a1a8a"/>
<circle cx="644.9" cy="280.5" r="2.15" fill="#fc2a10"/><circle cx="644.9" cy="280.5" r="0.7" fill="#5a1a8a"/>
<circle cx="644.9" cy="286.5" r="2.15" fill="#fc2a10"/><circle cx="644.9" cy="286.5" r="0.7" fill="#5a1a8a"/>
<circle cx="651.0" cy="280.5" r="2.15" fill="#fc2a10"/><circle cx="651.0" cy="280.5" r="0.7" fill="#5a1a8a"/>
<circle cx="651.0" cy="286.5" r="2.15" fill="#fc2a10"/><circle cx="651.0" cy="286.5" r="0.7" fill="#5a1a8a"/>
<circle cx="657.1" cy="280.5" r="2.15" fill="#fc2a10"/><circle cx="657.1" cy="280.5" r="0.7" fill="#5a1a8a"/>
<circle cx="657.1" cy="286.5" r="2.15" fill="#fc2a10"/><circle cx="657.1" cy="286.5" r="0.7" fill="#5a1a8a"/>
<circle cx="663.2" cy="280.5" r="2.15" fill="#fc2a10"/><circle cx="663.2" cy="280.5" r="0.7" fill="#5a1a8a"/>
<circle cx="663.2" cy="286.5" r="2.15" fill="#fc2a10"/><circle cx="663.2" cy="286.5" r="0.7" fill="#5a1a8a"/>
<circle cx="669.3" cy="280.5" r="2.15" fill="#fc2a10"/><circle cx="669.3" cy="280.5" r="0.7" fill="#5a1a8a"/>
<circle cx="669.3" cy="286.5" r="2.15" fill="#fc2a10"/><circle cx="669.3" cy="286.5" r="0.7" fill="#5a1a8a"/>
<circle cx="675.4" cy="280.5" r="2.15" fill="#fc2a10"/><circle cx="675.4" cy="280.5" r="0.7" fill="#5a1a8a"/>
<circle cx="675.4" cy="286.5" r="2.15" fill="#fc2a10"/><circle cx="675.4" cy="286.5" r="0.7" fill="#5a1a8a"/>
<circle cx="681.5" cy="280.5" r="2.15" fill="#fc2a10"/><circle cx="681.5" cy="280.5" r="0.7" fill="#5a1a8a"/>
<circle cx="681.5" cy="286.5" r="2.15" fill="#fc2a10"/><circle cx="681.5" cy="286.5" r="0.7" fill="#5a1a8a"/>
<circle cx="671.5" cy="292.0" r="2.15" fill="#fc2a10"/><circle cx="671.5" cy="292.0" r="0.7" fill="#5a1a8a"/>
<circle cx="677.5" cy="292.0" r="2.15" fill="#fc2a10"/><circle cx="677.5" cy="292.0" r="0.7" fill="#5a1a8a"/>
<circle cx="671.5" cy="298.1" r="2.15" fill="#fc2a10"/><circle cx="671.5" cy="298.1" r="0.7" fill="#5a1a8a"/>
<circle cx="677.5" cy="298.1" r="2.15" fill="#fc2a10"/><circle cx="677.5" cy="298.1" r="0.7" fill="#5a1a8a"/>
<circle cx="671.5" cy="304.2" r="2.15" fill="#fc2a10"/><circle cx="671.5" cy="304.2" r="0.7" fill="#5a1a8a"/>
<circle cx="677.5" cy="304.2" r="2.15" fill="#fc2a10"/><circle cx="677.5" cy="304.2" r="0.7" fill="#5a1a8a"/>
<circle cx="671.5" cy="310.3" r="2.15" fill="#fc2a10"/><circle cx="671.5" cy="310.3" r="0.7" fill="#5a1a8a"/>
<circle cx="677.5" cy="310.3" r="2.15" fill="#fc2a10"/><circle cx="677.5" cy="310.3" r="0.7" fill="#5a1a8a"/>
<circle cx="671.5" cy="316.4" r="2.15" fill="#fc2a10"/><circle cx="671.5" cy="316.4" r="0.7" fill="#5a1a8a"/>
<circle cx="677.5" cy="316.4" r="2.15" fill="#fc2a10"/><circle cx="677.5" cy="316.4" r="0.7" fill="#5a1a8a"/>
<circle cx="671.5" cy="322.5" r="2.15" fill="#fc2a10"/><circle cx="671.5" cy="322.5" r="0.7" fill="#5a1a8a"/>
<circle cx="677.5" cy="322.5" r="2.15" fill="#fc2a10"/><circle cx="677.5" cy="322.5" r="0.7" fill="#5a1a8a"/>
<circle cx="671.5" cy="328.6" r="2.15" fill="#fc2a10"/><circle cx="671.5" cy="328.6" r="0.7" fill="#5a1a8a"/>
<circle cx="677.5" cy="328.6" r="2.15" fill="#fc2a10"/><circle cx="677.5" cy="328.6" r="0.7" fill="#5a1a8a"/>
<circle cx="671.5" cy="334.7" r="2.15" fill="#fc2a10"/><circle cx="671.5" cy="334.7" r="0.7" fill="#5a1a8a"/>
<circle cx="677.5" cy="334.7" r="2.15" fill="#fc2a10"/><circle cx="677.5" cy="334.7" r="0.7" fill="#5a1a8a"/>
<circle cx="671.5" cy="340.8" r="2.15" fill="#fc2a10"/><circle cx="671.5" cy="340.8" r="0.7" fill="#5a1a8a"/>
<circle cx="677.5" cy="340.8" r="2.15" fill="#fc2a10"/><circle cx="677.5" cy="340.8" r="0.7" fill="#5a1a8a"/>
<circle cx="671.5" cy="346.9" r="2.15" fill="#fc2a10"/><circle cx="671.5" cy="346.9" r="0.7" fill="#5a1a8a"/>
<circle cx="677.5" cy="346.9" r="2.15" fill="#fc2a10"/><circle cx="677.5" cy="346.9" r="0.7" fill="#5a1a8a"/>
<circle cx="671.5" cy="353.0" r="2.15" fill="#fc2a10"/><circle cx="671.5" cy="353.0" r="0.7" fill="#5a1a8a"/>
<circle cx="677.5" cy="353.0" r="2.15" fill="#fc2a10"/><circle cx="677.5" cy="353.0" r="0.7" fill="#5a1a8a"/>
<circle cx="671.5" cy="359.1" r="2.15" fill="#fc2a10"/><circle cx="671.5" cy="359.1" r="0.7" fill="#5a1a8a"/>
<circle cx="677.5" cy="359.1" r="2.15" fill="#fc2a10"/><circle cx="677.5" cy="359.1" r="0.7" fill="#5a1a8a"/>
<circle cx="671.5" cy="365.2" r="2.15" fill="#fc2a10"/><circle cx="671.5" cy="365.2" r="0.7" fill="#5a1a8a"/>
<circle cx="677.5" cy="365.2" r="2.15" fill="#fc2a10"/><circle cx="677.5" cy="365.2" r="0.7" fill="#5a1a8a"/>
<circle cx="640.0" cy="357.0" r="2.15" fill="#fc2a10"/><circle cx="640.0" cy="357.0" r="0.7" fill="#5a1a8a"/>
<circle cx="640.0" cy="363.0" r="2.15" fill="#fc2a10"/><circle cx="640.0" cy="363.0" r="0.7" fill="#5a1a8a"/>
<circle cx="646.1" cy="357.0" r="2.15" fill="#fc2a10"/><circle cx="646.1" cy="357.0" r="0.7" fill="#5a1a8a"/>
<circle cx="646.1" cy="363.0" r="2.15" fill="#fc2a10"/><circle cx="646.1" cy="363.0" r="0.7" fill="#5a1a8a"/>
<circle cx="652.2" cy="357.0" r="2.15" fill="#fc2a10"/><circle cx="652.2" cy="357.0" r="0.7" fill="#5a1a8a"/>
<circle cx="652.2" cy="363.0" r="2.15" fill="#fc2a10"/><circle cx="652.2" cy="363.0" r="0.7" fill="#5a1a8a"/>
<circle cx="658.3" cy="357.0" r="2.15" fill="#fc2a10"/><circle cx="658.3" cy="357.0" r="0.7" fill="#5a1a8a"/>
<circle cx="658.3" cy="363.0" r="2.15" fill="#fc2a10"/><circle cx="658.3" cy="363.0" r="0.7" fill="#5a1a8a"/>
<circle cx="664.4" cy="357.0" r="2.15" fill="#fc2a10"/><circle cx="664.4" cy="357.0" r="0.7" fill="#5a1a8a"/>
<circle cx="664.4" cy="363.0" r="2.15" fill="#fc2a10"/><circle cx="664.4" cy="363.0" r="0.7" fill="#5a1a8a"/>
<circle cx="670.5" cy="357.0" r="2.15" fill="#fc2a10"/><circle cx="670.5" cy="357.0" r="0.7" fill="#5a1a8a"/>
<circle cx="670.5" cy="363.0" r="2.15" fill="#fc2a10"/><circle cx="670.5" cy="363.0" r="0.7" fill="#5a1a8a"/>
<circle cx="676.6" cy="357.0" r="2.15" fill="#fc2a10"/><circle cx="676.6" cy="357.0" r="0.7" fill="#5a1a8a"/>
<circle cx="676.6" cy="363.0" r="2.15" fill="#fc2a10"/><circle cx="676.6" cy="363.0" r="0.7" fill="#5a1a8a"/>
<circle cx="682.7" cy="357.0" r="2.15" fill="#fc2a10"/><circle cx="682.7" cy="357.0" r="0.7" fill="#5a1a8a"/>
<circle cx="682.7" cy="363.0" r="2.15" fill="#fc2a10"/><circle cx="682.7" cy="363.0" r="0.7" fill="#5a1a8a"/>
<circle cx="348.3" cy="151.3" r="2.15" fill="#fc2a10"/><circle cx="348.3" cy="151.3" r="0.7" fill="#5a1a8a"/>
<circle cx="364.4" cy="151.3" r="2.15" fill="#fc2a10"/><circle cx="364.4" cy="151.3" r="0.7" fill="#5a1a8a"/>
<circle cx="371.6" cy="172.3" r="2.15" fill="#fc2a10"/><circle cx="371.6" cy="172.3" r="0.7" fill="#5a1a8a"/>
<circle cx="354.0" cy="187.8" r="2.15" fill="#fc2a10"/><circle cx="354.0" cy="187.8" r="0.7" fill="#5a1a8a"/>
<circle cx="354.0" cy="195.0" r="2.15" fill="#fc2a10"/><circle cx="354.0" cy="195.0" r="0.7" fill="#5a1a8a"/>
<circle cx="354.0" cy="203.0" r="2.15" fill="#fc2a10"/><circle cx="354.0" cy="203.0" r="0.7" fill="#5a1a8a"/>
<circle cx="354.0" cy="209.3" r="2.15" fill="#fc2a10"/><circle cx="354.0" cy="209.3" r="0.7" fill="#5a1a8a"/>
<circle cx="354.0" cy="222.5" r="2.15" fill="#fc2a10"/><circle cx="354.0" cy="222.5" r="0.7" fill="#5a1a8a"/>
<circle cx="377.8" cy="187.8" r="2.15" fill="#fc2a10"/><circle cx="377.8" cy="187.8" r="0.7" fill="#5a1a8a"/>
<circle cx="403.6" cy="187.8" r="2.15" fill="#fc2a10"/><circle cx="403.6" cy="187.8" r="0.7" fill="#5a1a8a"/>
<circle cx="363.0" cy="207.0" r="2.15" fill="#fc2a10"/><circle cx="363.0" cy="207.0" r="0.7" fill="#5a1a8a"/>
<circle cx="368.2" cy="207.0" r="2.15" fill="#fc2a10"/><circle cx="368.2" cy="207.0" r="0.7" fill="#5a1a8a"/>
<circle cx="377.8" cy="207.0" r="2.15" fill="#fc2a10"/><circle cx="377.8" cy="207.0" r="0.7" fill="#5a1a8a"/>
<circle cx="389.2" cy="207.0" r="2.15" fill="#fc2a10"/><circle cx="389.2" cy="207.0" r="0.7" fill="#5a1a8a"/>
<circle cx="394.2" cy="207.0" r="2.15" fill="#fc2a10"/><circle cx="394.2" cy="207.0" r="0.7" fill="#5a1a8a"/>
<circle cx="407.5" cy="207.0" r="2.15" fill="#fc2a10"/><circle cx="407.5" cy="207.0" r="0.7" fill="#5a1a8a"/>
<circle cx="386.0" cy="223.7" r="2.15" fill="#fc2a10"/><circle cx="386.0" cy="223.7" r="0.7" fill="#5a1a8a"/>
<circle cx="386.0" cy="228.4" r="2.15" fill="#fc2a10"/><circle cx="386.0" cy="228.4" r="0.7" fill="#5a1a8a"/>
<circle cx="402.3" cy="224.5" r="2.15" fill="#fc2a10"/><circle cx="402.3" cy="224.5" r="0.7" fill="#5a1a8a"/>
<circle cx="402.3" cy="232.0" r="2.15" fill="#fc2a10"/><circle cx="402.3" cy="232.0" r="0.7" fill="#5a1a8a"/>
<circle cx="410.0" cy="232.0" r="2.15" fill="#fc2a10"/><circle cx="410.0" cy="232.0" r="0.7" fill="#5a1a8a"/>
<circle cx="402.3" cy="240.0" r="2.15" fill="#fc2a10"/><circle cx="402.3" cy="240.0" r="0.7" fill="#5a1a8a"/>
<circle cx="472.5" cy="181.0" r="2.15" fill="#fc2a10"/><circle cx="472.5" cy="181.0" r="0.7" fill="#5a1a8a"/>
<circle cx="472.5" cy="199.7" r="2.15" fill="#fc2a10"/><circle cx="472.5" cy="199.7" r="0.7" fill="#5a1a8a"/>
<circle cx="472.5" cy="213.0" r="2.15" fill="#fc2a10"/><circle cx="472.5" cy="213.0" r="0.7" fill="#5a1a8a"/>
<circle cx="472.5" cy="243.5" r="2.15" fill="#fc2a10"/><circle cx="472.5" cy="243.5" r="0.7" fill="#5a1a8a"/>
<circle cx="481.8" cy="181.0" r="2.15" fill="#fc2a10"/><circle cx="481.8" cy="181.0" r="0.7" fill="#5a1a8a"/>
<circle cx="491.3" cy="181.0" r="2.15" fill="#fc2a10"/><circle cx="491.3" cy="181.0" r="0.7" fill="#5a1a8a"/>
<circle cx="501.0" cy="181.0" r="2.15" fill="#fc2a10"/><circle cx="501.0" cy="181.0" r="0.7" fill="#5a1a8a"/>
<circle cx="515.4" cy="181.0" r="2.15" fill="#fc2a10"/><circle cx="515.4" cy="181.0" r="0.7" fill="#5a1a8a"/>
<circle cx="538.6" cy="181.0" r="2.15" fill="#fc2a10"/><circle cx="538.6" cy="181.0" r="0.7" fill="#5a1a8a"/>
<circle cx="551.4" cy="181.0" r="2.15" fill="#fc2a10"/><circle cx="551.4" cy="181.0" r="0.7" fill="#5a1a8a"/>
<circle cx="557.7" cy="181.0" r="2.15" fill="#fc2a10"/><circle cx="557.7" cy="181.0" r="0.7" fill="#5a1a8a"/>
<circle cx="564.5" cy="181.0" r="2.15" fill="#fc2a10"/><circle cx="564.5" cy="181.0" r="0.7" fill="#5a1a8a"/>
<circle cx="571.0" cy="181.0" r="2.15" fill="#fc2a10"/><circle cx="571.0" cy="181.0" r="0.7" fill="#5a1a8a"/>
<circle cx="614.6" cy="181.0" r="2.15" fill="#fc2a10"/><circle cx="614.6" cy="181.0" r="0.7" fill="#5a1a8a"/>
<circle cx="624.3" cy="181.0" r="2.15" fill="#fc2a10"/><circle cx="624.3" cy="181.0" r="0.7" fill="#5a1a8a"/>
<circle cx="481.8" cy="199.7" r="2.15" fill="#fc2a10"/><circle cx="481.8" cy="199.7" r="0.7" fill="#5a1a8a"/>
<circle cx="491.3" cy="199.7" r="2.15" fill="#fc2a10"/><circle cx="491.3" cy="199.7" r="0.7" fill="#5a1a8a"/>
<circle cx="501.0" cy="199.7" r="2.15" fill="#fc2a10"/><circle cx="501.0" cy="199.7" r="0.7" fill="#5a1a8a"/>
<circle cx="586.0" cy="199.7" r="2.15" fill="#fc2a10"/><circle cx="586.0" cy="199.7" r="0.7" fill="#5a1a8a"/>
<circle cx="593.0" cy="199.7" r="2.15" fill="#fc2a10"/><circle cx="593.0" cy="199.7" r="0.7" fill="#5a1a8a"/>
<circle cx="602.8" cy="199.7" r="2.15" fill="#fc2a10"/><circle cx="602.8" cy="199.7" r="0.7" fill="#5a1a8a"/>
<circle cx="613.6" cy="199.7" r="2.15" fill="#fc2a10"/><circle cx="613.6" cy="199.7" r="0.7" fill="#5a1a8a"/>
<circle cx="624.3" cy="199.7" r="2.15" fill="#fc2a10"/><circle cx="624.3" cy="199.7" r="0.7" fill="#5a1a8a"/>
<circle cx="634.0" cy="199.7" r="2.15" fill="#fc2a10"/><circle cx="634.0" cy="199.7" r="0.7" fill="#5a1a8a"/>
<circle cx="486.4" cy="237.6" r="2.15" fill="#fc2a10"/><circle cx="486.4" cy="237.6" r="0.7" fill="#5a1a8a"/>
<circle cx="552.5" cy="237.6" r="2.15" fill="#fc2a10"/><circle cx="552.5" cy="237.6" r="0.7" fill="#5a1a8a"/>
<circle cx="574.6" cy="237.6" r="2.15" fill="#fc2a10"/><circle cx="574.6" cy="237.6" r="0.7" fill="#5a1a8a"/>
<circle cx="584.0" cy="237.6" r="2.15" fill="#fc2a10"/><circle cx="584.0" cy="237.6" r="0.7" fill="#5a1a8a"/>
<circle cx="616.0" cy="223.0" r="2.15" fill="#fc2a10"/><circle cx="616.0" cy="223.0" r="0.7" fill="#5a1a8a"/>
<polyline points="368.2,207.0 368.2,217.0 400.5,249.0 575.0,249.0 582.0,256.0" fill="none" stroke="#e82008" stroke-width="1.1" stroke-linejoin="round" stroke-linecap="round"/>
<circle cx="497" cy="205" r="1" fill="#5a20a0"/>
<circle cx="501" cy="210" r="1" fill="#5a20a0"/>
<circle cx="497" cy="216" r="1" fill="#5a20a0"/>
<circle cx="505" cy="216" r="1" fill="#5a20a0"/>
<circle cx="511" cy="210" r="1" fill="#5a20a0"/>
<circle cx="515" cy="216" r="1" fill="#5a20a0"/>
<circle cx="521" cy="220" r="1" fill="#5a20a0"/>
<circle cx="531" cy="222" r="1" fill="#5a20a0"/>
<circle cx="524" cy="232" r="1" fill="#5a20a0"/>
<circle cx="505" cy="233" r="1" fill="#5a20a0"/>
<circle cx="520" cy="206" r="1" fill="#5a20a0"/>
<circle cx="539" cy="207" r="1" fill="#5a20a0"/>
<circle cx="545" cy="211" r="1" fill="#5a20a0"/>
<circle cx="533" cy="216" r="1" fill="#5a20a0"/>
<polyline points="910.7,214.7 910.7,266.5 882.6,294.7 861.2,294.7 809.0,347.0 809.0,400.0 797.0,415.0 787.0,425.5 704.0,425.5 698.5,418.5 662.0,418.5 649.5,399.0 628.5,399.0 625.0,403.8 590.0,403.8 585.0,408.7 553.0,408.7 538.5,394.7" fill="none" stroke="#f0f0a0" stroke-width="1.3" stroke-linejoin="round" stroke-linecap="round"/>
<polyline points="535.7,384.3 541.0,392.7 554.3,405.5 583.7,405.5 588.7,400.6 623.4,400.6 626.9,395.8 651.2,395.8 663.7,415.3 700.1,415.3 705.6,422.3 785.6,422.3 794.6,412.9 806.5,398.0" fill="none" stroke="#e82008" stroke-width="1.0" stroke-linejoin="round" stroke-linecap="round"/>
<polyline points="538.2,382.7 543.3,390.8 555.5,402.5 582.5,402.5 587.5,397.6 621.8,397.6 625.3,392.8 652.9,392.8 665.4,412.3 701.5,412.3 707.0,419.3 784.3,419.3 792.3,410.9 804.2,396.1" fill="none" stroke="#e82008" stroke-width="1.0" stroke-linejoin="round" stroke-linecap="round"/>
<polyline points="530.3,387.7 536.0,396.7 551.7,411.9 586.3,411.9 591.3,407.0 626.6,407.0 630.1,402.2 647.8,402.2 660.3,421.7 696.9,421.7 702.4,428.7 788.4,428.7 799.4,417.1 811.5,402.0" fill="none" stroke="#e82008" stroke-width="1.0" stroke-linejoin="round" stroke-linecap="round"/>
<circle cx="533.5" cy="388.0" r="2.15" fill="#fc2a10"/><circle cx="533.5" cy="388.0" r="0.7" fill="#5a1a8a"/>
<circle cx="538.5" cy="388.0" r="2.15" fill="#fc2a10"/><circle cx="538.5" cy="388.0" r="0.7" fill="#5a1a8a"/>
<circle cx="543.5" cy="388.0" r="2.15" fill="#fc2a10"/><circle cx="543.5" cy="388.0" r="0.7" fill="#5a1a8a"/>
<circle cx="910.7" cy="214.7" r="2" fill="#f0f0a0"/><circle cx="538.5" cy="394.7" r="2.2" fill="#f0f0a0"/>
<polyline points="903.7,214.7 906.0,220.0 906.0,262.0 893.0,280.0 880.0,292.5 860.0,292.5 824.0,328.0 816.0,328.0 806.0,338.0 806.0,396.0 793.0,412.0" fill="none" stroke="#d42000" stroke-width="1.1" stroke-linejoin="round" stroke-linecap="round"/>
<polyline points="922.0,304.0 917.0,298.5 862.5,297.7 812.5,347.6 812.5,400.0 800.0,416.0" fill="none" stroke="#e82008" stroke-width="1.1" stroke-linejoin="round" stroke-linecap="round"/>
<polyline points="904.0,304.0 902.7,305.8 861.0,305.8 814.5,349.0 814.5,402.0 803.0,418.0" fill="none" stroke="#e82008" stroke-width="1.0" stroke-linejoin="round" stroke-linecap="round"/>
<polyline points="910.8,304.0 904.3,311.4 860.0,311.4 818.0,349.0 818.0,404.0 806.0,420.0" fill="none" stroke="#e82008" stroke-width="1.0" stroke-linejoin="round" stroke-linecap="round"/>
<polyline points="859.0,312.0 827.0,342.8 827.0,400.0" fill="none" stroke="#e82008" stroke-width="1.0" stroke-linejoin="round" stroke-linecap="round"/>
<circle cx="903.7" cy="304.0" r="2.15" fill="#fc2a10"/><circle cx="903.7" cy="304.0" r="0.7" fill="#5a1a8a"/>
<circle cx="910.8" cy="304.0" r="2.15" fill="#fc2a10"/><circle cx="910.8" cy="304.0" r="0.7" fill="#5a1a8a"/>
<circle cx="922.0" cy="304.5" r="2.15" fill="#fc2a10"/><circle cx="922.0" cy="304.5" r="0.7" fill="#5a1a8a"/>
<circle cx="864.0" cy="323.0" r="2.15" fill="#fc2a10"/><circle cx="864.0" cy="323.0" r="0.7" fill="#5a1a8a"/>
<circle cx="852.5" cy="347.6" r="2.15" fill="#fc2a10"/><circle cx="852.5" cy="347.6" r="0.7" fill="#5a1a8a"/>
<circle cx="858.0" cy="347.6" r="2.15" fill="#fc2a10"/><circle cx="858.0" cy="347.6" r="0.7" fill="#5a1a8a"/>
<circle cx="863.6" cy="347.6" r="2.15" fill="#fc2a10"/><circle cx="863.6" cy="347.6" r="0.7" fill="#5a1a8a"/>
<circle cx="869.6" cy="347.6" r="2.15" fill="#fc2a10"/><circle cx="869.6" cy="347.6" r="0.7" fill="#5a1a8a"/>
<circle cx="875.0" cy="347.6" r="2.15" fill="#fc2a10"/><circle cx="875.0" cy="347.6" r="0.7" fill="#5a1a8a"/>
<circle cx="880.6" cy="347.6" r="2.15" fill="#fc2a10"/><circle cx="880.6" cy="347.6" r="0.7" fill="#5a1a8a"/>
<circle cx="887.0" cy="347.6" r="2.15" fill="#fc2a10"/><circle cx="887.0" cy="347.6" r="0.7" fill="#5a1a8a"/>
<circle cx="881.0" cy="340.0" r="2.15" fill="#fc2a10"/><circle cx="881.0" cy="340.0" r="0.7" fill="#5a1a8a"/>
<circle cx="887.0" cy="358.0" r="2.15" fill="#fc2a10"/><circle cx="887.0" cy="358.0" r="0.7" fill="#5a1a8a"/>
<circle cx="887.0" cy="367.0" r="2.15" fill="#fc2a10"/><circle cx="887.0" cy="367.0" r="0.7" fill="#5a1a8a"/>
<circle cx="909.6" cy="341.5" r="2.15" fill="#fc2a10"/><circle cx="909.6" cy="341.5" r="0.7" fill="#5a1a8a"/>
<circle cx="915.0" cy="341.5" r="2.15" fill="#fc2a10"/><circle cx="915.0" cy="341.5" r="0.7" fill="#5a1a8a"/>
<circle cx="915.0" cy="347.6" r="2.15" fill="#fc2a10"/><circle cx="915.0" cy="347.6" r="0.7" fill="#5a1a8a"/>
<circle cx="915.0" cy="353.6" r="2.15" fill="#fc2a10"/><circle cx="915.0" cy="353.6" r="0.7" fill="#5a1a8a"/>
<circle cx="909.6" cy="359.6" r="2.15" fill="#fc2a10"/><circle cx="909.6" cy="359.6" r="0.7" fill="#5a1a8a"/>
<circle cx="915.0" cy="359.6" r="2.15" fill="#fc2a10"/><circle cx="915.0" cy="359.6" r="0.7" fill="#5a1a8a"/>
<circle cx="915.0" cy="365.0" r="2.15" fill="#fc2a10"/><circle cx="915.0" cy="365.0" r="0.7" fill="#5a1a8a"/>
<circle cx="909.0" cy="283.0" r="2.15" fill="#fc2a10"/><circle cx="909.0" cy="283.0" r="0.7" fill="#5a1a8a"/>
<circle cx="917.0" cy="283.0" r="2.15" fill="#fc2a10"/><circle cx="917.0" cy="283.0" r="0.7" fill="#5a1a8a"/>
<circle cx="922.0" cy="283.0" r="2.15" fill="#fc2a10"/><circle cx="922.0" cy="283.0" r="0.7" fill="#5a1a8a"/>
<circle cx="808.6" cy="281.0" r="2.15" fill="#fc2a10"/><circle cx="808.6" cy="281.0" r="0.7" fill="#5a1a8a"/>
<circle cx="870.0" cy="394.0" r="2.15" fill="#fc2a10"/><circle cx="870.0" cy="394.0" r="0.7" fill="#5a1a8a"/>
<circle cx="898.8" cy="398.7" r="2.15" fill="#fc2a10"/><circle cx="898.8" cy="398.7" r="0.7" fill="#5a1a8a"/>
<circle cx="908.0" cy="394.0" r="2.15" fill="#fc2a10"/><circle cx="908.0" cy="394.0" r="0.7" fill="#5a1a8a"/>
<circle cx="917.7" cy="394.0" r="2.15" fill="#fc2a10"/><circle cx="917.7" cy="394.0" r="0.7" fill="#5a1a8a"/>
<circle cx="908.0" cy="413.0" r="2.15" fill="#fc2a10"/><circle cx="908.0" cy="413.0" r="0.7" fill="#5a1a8a"/>
<circle cx="917.7" cy="413.0" r="2.15" fill="#fc2a10"/><circle cx="917.7" cy="413.0" r="0.7" fill="#5a1a8a"/>
<circle cx="917.7" cy="429.7" r="2.15" fill="#fc2a10"/><circle cx="917.7" cy="429.7" r="0.7" fill="#5a1a8a"/>
<circle cx="884.0" cy="427.0" r="2.15" fill="#fc2a10"/><circle cx="884.0" cy="427.0" r="0.7" fill="#5a1a8a"/>
<circle cx="894.0" cy="427.0" r="2.15" fill="#fc2a10"/><circle cx="894.0" cy="427.0" r="0.7" fill="#5a1a8a"/>
<circle cx="884.0" cy="436.5" r="2.15" fill="#fc2a10"/><circle cx="884.0" cy="436.5" r="0.7" fill="#5a1a8a"/>
<circle cx="894.0" cy="436.5" r="2.15" fill="#fc2a10"/><circle cx="894.0" cy="436.5" r="0.7" fill="#5a1a8a"/>
<circle cx="860.5" cy="424.0" r="2.15" fill="#fc2a10"/><circle cx="860.5" cy="424.0" r="0.7" fill="#5a1a8a"/>
<circle cx="860.5" cy="432.0" r="2.15" fill="#fc2a10"/><circle cx="860.5" cy="432.0" r="0.7" fill="#5a1a8a"/>
<circle cx="860.5" cy="439.0" r="2.15" fill="#fc2a10"/><circle cx="860.5" cy="439.0" r="0.7" fill="#5a1a8a"/>
<circle cx="882.0" cy="449.0" r="2.15" fill="#fc2a10"/><circle cx="882.0" cy="449.0" r="0.7" fill="#5a1a8a"/>
<circle cx="870.0" cy="449.0" r="2.15" fill="#fc2a10"/><circle cx="870.0" cy="449.0" r="0.7" fill="#5a1a8a"/>
<circle cx="903.7" cy="214.7" r="2.15" fill="#fc2a10"/><circle cx="903.7" cy="214.7" r="0.7" fill="#5a1a8a"/>
<circle cx="918.0" cy="214.7" r="2.15" fill="#fc2a10"/><circle cx="918.0" cy="214.7" r="0.7" fill="#5a1a8a"/>
<circle cx="903.7" cy="235.0" r="2.15" fill="#fc2a10"/><circle cx="903.7" cy="235.0" r="0.7" fill="#5a1a8a"/>
<circle cx="918.0" cy="235.0" r="2.15" fill="#fc2a10"/><circle cx="918.0" cy="235.0" r="0.7" fill="#5a1a8a"/>
<circle cx="903.7" cy="245.0" r="2.15" fill="#fc2a10"/><circle cx="903.7" cy="245.0" r="0.7" fill="#5a1a8a"/>
<circle cx="918.0" cy="248.0" r="2.15" fill="#fc2a10"/><circle cx="918.0" cy="248.0" r="0.7" fill="#5a1a8a"/><circle cx="437.0" cy="290.0" r="2.15" fill="#fc2a10"/><circle cx="437.0" cy="290.0" r="0.7" fill="#5a1a8a"/>
<circle cx="437.0" cy="301.6" r="2.15" fill="#fc2a10"/><circle cx="437.0" cy="301.6" r="0.7" fill="#5a1a8a"/>
<circle cx="437.0" cy="308.5" r="2.15" fill="#fc2a10"/><circle cx="437.0" cy="308.5" r="0.7" fill="#5a1a8a"/>
<circle cx="437.0" cy="316.0" r="2.15" fill="#fc2a10"/><circle cx="437.0" cy="316.0" r="0.7" fill="#5a1a8a"/>
<circle cx="437.0" cy="323.5" r="2.15" fill="#fc2a10"/><circle cx="437.0" cy="323.5" r="0.7" fill="#5a1a8a"/>
<circle cx="437.0" cy="330.5" r="2.15" fill="#fc2a10"/><circle cx="437.0" cy="330.5" r="0.7" fill="#5a1a8a"/>
<circle cx="455.6" cy="273.4" r="2.15" fill="#fc2a10"/><circle cx="455.6" cy="273.4" r="0.7" fill="#5a1a8a"/>
<circle cx="455.6" cy="290.0" r="2.15" fill="#fc2a10"/><circle cx="455.6" cy="290.0" r="0.7" fill="#5a1a8a"/>
<circle cx="455.6" cy="295.0" r="2.15" fill="#fc2a10"/><circle cx="455.6" cy="295.0" r="0.7" fill="#5a1a8a"/>
<circle cx="455.6" cy="302.0" r="2.15" fill="#fc2a10"/><circle cx="455.6" cy="302.0" r="0.7" fill="#5a1a8a"/>
<circle cx="455.6" cy="309.0" r="2.15" fill="#fc2a10"/><circle cx="455.6" cy="309.0" r="0.7" fill="#5a1a8a"/>
<circle cx="455.6" cy="316.0" r="2.15" fill="#fc2a10"/><circle cx="455.6" cy="316.0" r="0.7" fill="#5a1a8a"/>
<circle cx="455.6" cy="323.0" r="2.15" fill="#fc2a10"/><circle cx="455.6" cy="323.0" r="0.7" fill="#5a1a8a"/>
<circle cx="455.6" cy="330.5" r="2.15" fill="#fc2a10"/><circle cx="455.6" cy="330.5" r="0.7" fill="#5a1a8a"/>
<circle cx="472.6" cy="283.0" r="2.15" fill="#fc2a10"/><circle cx="472.6" cy="283.0" r="0.7" fill="#5a1a8a"/>
<circle cx="477.5" cy="283.0" r="2.15" fill="#fc2a10"/><circle cx="477.5" cy="283.0" r="0.7" fill="#5a1a8a"/>
<circle cx="483.0" cy="283.0" r="2.15" fill="#fc2a10"/><circle cx="483.0" cy="283.0" r="0.7" fill="#5a1a8a"/>
<circle cx="490.0" cy="283.0" r="2.15" fill="#fc2a10"/><circle cx="490.0" cy="283.0" r="0.7" fill="#5a1a8a"/>
<circle cx="489.0" cy="273.4" r="2.15" fill="#fc2a10"/><circle cx="489.0" cy="273.4" r="0.7" fill="#5a1a8a"/>
<circle cx="484.3" cy="301.8" r="2.15" fill="#fc2a10"/><circle cx="484.3" cy="301.8" r="0.7" fill="#5a1a8a"/>
<circle cx="477.5" cy="309.0" r="2.15" fill="#fc2a10"/><circle cx="477.5" cy="309.0" r="0.7" fill="#5a1a8a"/>
<circle cx="484.3" cy="309.0" r="2.15" fill="#fc2a10"/><circle cx="484.3" cy="309.0" r="0.7" fill="#5a1a8a"/>
<circle cx="491.3" cy="309.0" r="2.15" fill="#fc2a10"/><circle cx="491.3" cy="309.0" r="0.7" fill="#5a1a8a"/>
<circle cx="484.3" cy="316.0" r="2.15" fill="#fc2a10"/><circle cx="484.3" cy="316.0" r="0.7" fill="#5a1a8a"/>
<circle cx="509.7" cy="275.5" r="2.15" fill="#fc2a10"/><circle cx="509.7" cy="275.5" r="0.7" fill="#5a1a8a"/>
<circle cx="509.7" cy="290.0" r="2.15" fill="#fc2a10"/><circle cx="509.7" cy="290.0" r="0.7" fill="#5a1a8a"/>
<circle cx="509.7" cy="297.0" r="2.15" fill="#fc2a10"/><circle cx="509.7" cy="297.0" r="0.7" fill="#5a1a8a"/>
<circle cx="509.7" cy="303.0" r="2.15" fill="#fc2a10"/><circle cx="509.7" cy="303.0" r="0.7" fill="#5a1a8a"/>
<circle cx="509.7" cy="310.7" r="2.15" fill="#fc2a10"/><circle cx="509.7" cy="310.7" r="0.7" fill="#5a1a8a"/>
<circle cx="509.7" cy="325.0" r="2.15" fill="#fc2a10"/><circle cx="509.7" cy="325.0" r="0.7" fill="#5a1a8a"/>
<circle cx="509.7" cy="332.0" r="2.15" fill="#fc2a10"/><circle cx="509.7" cy="332.0" r="0.7" fill="#5a1a8a"/>
<circle cx="515.3" cy="275.5" r="2.15" fill="#fc2a10"/><circle cx="515.3" cy="275.5" r="0.7" fill="#5a1a8a"/>
<circle cx="515.3" cy="283.0" r="2.15" fill="#fc2a10"/><circle cx="515.3" cy="283.0" r="0.7" fill="#5a1a8a"/>
<circle cx="515.3" cy="297.0" r="2.15" fill="#fc2a10"/><circle cx="515.3" cy="297.0" r="0.7" fill="#5a1a8a"/>
<circle cx="515.3" cy="303.0" r="2.15" fill="#fc2a10"/><circle cx="515.3" cy="303.0" r="0.7" fill="#5a1a8a"/>
<circle cx="515.3" cy="310.7" r="2.15" fill="#fc2a10"/><circle cx="515.3" cy="310.7" r="0.7" fill="#5a1a8a"/>
<circle cx="515.3" cy="325.0" r="2.15" fill="#fc2a10"/><circle cx="515.3" cy="325.0" r="0.7" fill="#5a1a8a"/>
<circle cx="515.3" cy="332.0" r="2.15" fill="#fc2a10"/><circle cx="515.3" cy="332.0" r="0.7" fill="#5a1a8a"/>
<circle cx="529.0" cy="276.0" r="2.15" fill="#fc2a10"/><circle cx="529.0" cy="276.0" r="0.7" fill="#5a1a8a"/>
<circle cx="534.0" cy="264.0" r="2.15" fill="#fc2a10"/><circle cx="534.0" cy="264.0" r="0.7" fill="#5a1a8a"/>
<circle cx="311.0" cy="315.5" r="2.15" fill="#fc2a10"/><circle cx="311.0" cy="315.5" r="0.7" fill="#5a1a8a"/>
<circle cx="311.0" cy="321.0" r="2.15" fill="#fc2a10"/><circle cx="311.0" cy="321.0" r="0.7" fill="#5a1a8a"/>
<circle cx="343.5" cy="315.5" r="2.15" fill="#fc2a10"/><circle cx="343.5" cy="315.5" r="0.7" fill="#5a1a8a"/>
<circle cx="343.5" cy="321.0" r="2.15" fill="#fc2a10"/><circle cx="343.5" cy="321.0" r="0.7" fill="#5a1a8a"/>
<circle cx="329.0" cy="332.0" r="2.15" fill="#fc2a10"/><circle cx="329.0" cy="332.0" r="0.7" fill="#5a1a8a"/>
<circle cx="376.8" cy="285.0" r="2.15" fill="#fc2a10"/><circle cx="376.8" cy="285.0" r="0.7" fill="#5a1a8a"/>
<circle cx="376.8" cy="294.0" r="2.15" fill="#fc2a10"/><circle cx="376.8" cy="294.0" r="0.7" fill="#5a1a8a"/>
<circle cx="376.8" cy="304.0" r="2.15" fill="#fc2a10"/><circle cx="376.8" cy="304.0" r="0.7" fill="#5a1a8a"/>
<circle cx="376.8" cy="313.5" r="2.15" fill="#fc2a10"/><circle cx="376.8" cy="313.5" r="0.7" fill="#5a1a8a"/>
<circle cx="376.8" cy="323.0" r="2.15" fill="#fc2a10"/><circle cx="376.8" cy="323.0" r="0.7" fill="#5a1a8a"/>
<circle cx="376.8" cy="332.0" r="2.15" fill="#fc2a10"/><circle cx="376.8" cy="332.0" r="0.7" fill="#5a1a8a"/>
<polyline points="437.0,290.0 445.0,290.0 482.0,322.6 560.0,322.6" fill="none" stroke="#e82008" stroke-width="1.1" stroke-linejoin="round" stroke-linecap="round"/>
<polyline points="322.5,271.0 322.5,312.5 350.7,340.0 388.4,340.0 406.5,359.6 430.4,359.6 453.6,335.0 466.7,329.0 490.0,329.0" fill="none" stroke="#e82008" stroke-width="1.1" stroke-linejoin="round" stroke-linecap="round"/>
<polyline points="333.4,365.5 350.0,343.6 387.7,343.6 405.8,361.7 431.0,361.7 455.8,337.0 470.0,331.3 490.0,331.3" fill="none" stroke="#e82008" stroke-width="1.1" stroke-linejoin="round" stroke-linecap="round"/>
<polyline points="406.1,303.8 413.0,310.0 413.0,337.8 420.3,343.0 433.3,343.0 445.0,330.6 445.0,317.5 452.0,310.3 453.6,304.5 458.0,298.7" fill="none" stroke="#e82008" stroke-width="1.0" stroke-linejoin="round" stroke-linecap="round"/>
<polyline points="416.0,337.8 416.0,323.3 423.0,321.0 425.0,322.8" fill="none" stroke="#e82008" stroke-width="1.0" stroke-linejoin="round" stroke-linecap="round"/>
<polyline points="472.6,286.8 489.5,286.8 489.5,291.0 472.6,291.0 472.6,294.0 523.8,294.0" fill="none" stroke="#e82008" stroke-width="1.1" stroke-linejoin="round" stroke-linecap="round"/>
<polyline points="509.7,270.0 509.7,266.7 525.0,266.7 525.0,306.0 530.0,312.0 541.7,312.0" fill="none" stroke="#e82008" stroke-width="1.1" stroke-linejoin="round" stroke-linecap="round"/>
<polyline points="540.0,271.0 529.0,271.0 529.0,278.0 539.0,278.0 539.0,286.0 529.0,286.0 529.0,294.0 539.0,294.0 539.0,302.0 529.0,302.0" fill="none" stroke="#e82008" stroke-width="1.0" stroke-linejoin="round" stroke-linecap="round"/>
<polyline points="518.3,302.5 518.3,318.0 526.7,321.7 541.7,321.7" fill="none" stroke="#e82008" stroke-width="1.0" stroke-linejoin="round" stroke-linecap="round"/>
<polyline points="573.3,240.0 573.3,246.7 596.7,265.0 610.0,265.0" fill="none" stroke="#e82008" stroke-width="1.0" stroke-linejoin="round" stroke-linecap="round"/>
<polyline points="576.3,240.0 576.3,245.2 597.7,262.0 610.0,262.0" fill="none" stroke="#e82008" stroke-width="1.0" stroke-linejoin="round" stroke-linecap="round"/>
<polyline points="533.0,263.0 535.0,265.0 545.0,265.0 560.0,280.0 600.0,280.0" fill="none" stroke="#e82008" stroke-width="1.0" stroke-linejoin="round" stroke-linecap="round"/>
<circle cx="566.7" cy="253.3" r="2.15" fill="#fc2a10"/><circle cx="566.7" cy="253.3" r="0.7" fill="#5a1a8a"/>
<circle cx="566.7" cy="260.8" r="2.15" fill="#fc2a10"/><circle cx="566.7" cy="260.8" r="0.7" fill="#5a1a8a"/>
<circle cx="571.7" cy="260.8" r="2.15" fill="#fc2a10"/><circle cx="571.7" cy="260.8" r="0.7" fill="#5a1a8a"/>
<circle cx="577.5" cy="260.8" r="2.15" fill="#fc2a10"/><circle cx="577.5" cy="260.8" r="0.7" fill="#5a1a8a"/>
<circle cx="566.7" cy="266.6" r="2.15" fill="#fc2a10"/><circle cx="566.7" cy="266.6" r="0.7" fill="#5a1a8a"/>
<circle cx="571.7" cy="266.6" r="2.15" fill="#fc2a10"/><circle cx="571.7" cy="266.6" r="0.7" fill="#5a1a8a"/>
<circle cx="566.7" cy="271.6" r="2.15" fill="#fc2a10"/><circle cx="566.7" cy="271.6" r="0.7" fill="#5a1a8a"/>
<circle cx="571.7" cy="271.6" r="2.15" fill="#fc2a10"/><circle cx="571.7" cy="271.6" r="0.7" fill="#5a1a8a"/>
<circle cx="581.6" cy="271.6" r="2.15" fill="#fc2a10"/><circle cx="581.6" cy="271.6" r="0.7" fill="#5a1a8a"/>
<circle cx="562.5" cy="275.8" r="2.15" fill="#fc2a10"/><circle cx="562.5" cy="275.8" r="0.7" fill="#5a1a8a"/>
<circle cx="533.3" cy="263.3" r="2.15" fill="#fc2a10"/><circle cx="533.3" cy="263.3" r="0.7" fill="#5a1a8a"/>
<circle cx="538.3" cy="263.3" r="2.15" fill="#fc2a10"/><circle cx="538.3" cy="263.3" r="0.7" fill="#5a1a8a"/>
<circle cx="534.2" cy="275.8" r="2.15" fill="#fc2a10"/><circle cx="534.2" cy="275.8" r="0.7" fill="#5a1a8a"/>
<circle cx="543.3" cy="275.8" r="2.15" fill="#fc2a10"/><circle cx="543.3" cy="275.8" r="0.7" fill="#5a1a8a"/>
<polyline points="452.0,395.0 467.0,380.6 553.0,380.6" fill="none" stroke="#e82008" stroke-width="1.3" stroke-linejoin="round" stroke-linecap="round"/>
<polyline points="455.0,395.5 462.0,390.6 518.0,391.0 525.0,386.0" fill="none" stroke="#e82008" stroke-width="1.1" stroke-linejoin="round" stroke-linecap="round"/>
<circle cx="437.0" cy="383.5" r="2.15" fill="#fc2a10"/><circle cx="437.0" cy="383.5" r="0.7" fill="#5a1a8a"/>
<circle cx="437.0" cy="396.6" r="2.15" fill="#fc2a10"/><circle cx="437.0" cy="396.6" r="0.7" fill="#5a1a8a"/>
<circle cx="437.0" cy="403.5" r="2.15" fill="#fc2a10"/><circle cx="437.0" cy="403.5" r="0.7" fill="#5a1a8a"/>
<circle cx="432.0" cy="407.6" r="2.15" fill="#fc2a10"/><circle cx="432.0" cy="407.6" r="0.7" fill="#5a1a8a"/>
<circle cx="446.0" cy="398.6" r="2.15" fill="#fc2a10"/><circle cx="446.0" cy="398.6" r="0.7" fill="#5a1a8a"/>
<circle cx="452.4" cy="394.5" r="2.15" fill="#fc2a10"/><circle cx="452.4" cy="394.5" r="0.7" fill="#5a1a8a"/>
<circle cx="458.4" cy="394.5" r="2.15" fill="#fc2a10"/><circle cx="458.4" cy="394.5" r="0.7" fill="#5a1a8a"/>
<circle cx="464.2" cy="394.5" r="2.15" fill="#fc2a10"/><circle cx="464.2" cy="394.5" r="0.7" fill="#5a1a8a"/>
<circle cx="469.0" cy="394.5" r="2.15" fill="#fc2a10"/><circle cx="469.0" cy="394.5" r="0.7" fill="#5a1a8a"/>
<circle cx="469.7" cy="398.2" r="2.15" fill="#fc2a10"/><circle cx="469.7" cy="398.2" r="0.7" fill="#5a1a8a"/>
<circle cx="470.0" cy="368.5" r="2.15" fill="#fc2a10"/><circle cx="470.0" cy="368.5" r="0.7" fill="#5a1a8a"/>
<circle cx="491.3" cy="368.5" r="2.15" fill="#fc2a10"/><circle cx="491.3" cy="368.5" r="0.7" fill="#5a1a8a"/>
<circle cx="499.0" cy="368.5" r="2.15" fill="#fc2a10"/><circle cx="499.0" cy="368.5" r="0.7" fill="#5a1a8a"/>
<circle cx="461.0" cy="344.6" r="2.15" fill="#fc2a10"/><circle cx="461.0" cy="344.6" r="0.7" fill="#5a1a8a"/>
<circle cx="461.0" cy="351.6" r="2.15" fill="#fc2a10"/><circle cx="461.0" cy="351.6" r="0.7" fill="#5a1a8a"/>
<circle cx="484.0" cy="334.0" r="2.15" fill="#fc2a10"/><circle cx="484.0" cy="334.0" r="0.7" fill="#5a1a8a"/>
<circle cx="491.6" cy="334.0" r="2.15" fill="#fc2a10"/><circle cx="491.6" cy="334.0" r="0.7" fill="#5a1a8a"/>
<circle cx="496.5" cy="334.0" r="2.15" fill="#fc2a10"/><circle cx="496.5" cy="334.0" r="0.7" fill="#5a1a8a"/>
<circle cx="507.5" cy="334.0" r="2.15" fill="#fc2a10"/><circle cx="507.5" cy="334.0" r="0.7" fill="#5a1a8a"/>
<circle cx="513.0" cy="334.0" r="2.15" fill="#fc2a10"/><circle cx="513.0" cy="334.0" r="0.7" fill="#5a1a8a"/>
<circle cx="478.5" cy="339.0" r="2.15" fill="#fc2a10"/><circle cx="478.5" cy="339.0" r="0.7" fill="#5a1a8a"/>
<circle cx="508.0" cy="344.0" r="2.15" fill="#fc2a10"/><circle cx="508.0" cy="344.0" r="0.7" fill="#5a1a8a"/>
<circle cx="508.0" cy="351.3" r="2.15" fill="#fc2a10"/><circle cx="508.0" cy="351.3" r="0.7" fill="#5a1a8a"/>
<circle cx="514.8" cy="346.6" r="2.15" fill="#fc2a10"/><circle cx="514.8" cy="346.6" r="0.7" fill="#5a1a8a"/>
<circle cx="515.0" cy="359.0" r="2.15" fill="#fc2a10"/><circle cx="515.0" cy="359.0" r="0.7" fill="#5a1a8a"/>
<circle cx="534.4" cy="368.5" r="2.15" fill="#fc2a10"/><circle cx="534.4" cy="368.5" r="0.7" fill="#5a1a8a"/>
<circle cx="498.4" cy="395.6" r="2.15" fill="#fc2a10"/><circle cx="498.4" cy="395.6" r="0.7" fill="#5a1a8a"/>
<circle cx="498.4" cy="404.0" r="2.15" fill="#fc2a10"/><circle cx="498.4" cy="404.0" r="0.7" fill="#5a1a8a"/>
<circle cx="517.6" cy="386.0" r="2.15" fill="#fc2a10"/><circle cx="517.6" cy="386.0" r="0.7" fill="#5a1a8a"/>
<circle cx="521.0" cy="395.0" r="2.15" fill="#fc2a10"/><circle cx="521.0" cy="395.0" r="0.7" fill="#5a1a8a"/>
<circle cx="521.0" cy="400.7" r="2.15" fill="#fc2a10"/><circle cx="521.0" cy="400.7" r="0.7" fill="#5a1a8a"/>
<circle cx="521.0" cy="405.6" r="2.15" fill="#fc2a10"/><circle cx="521.0" cy="405.6" r="0.7" fill="#5a1a8a"/>
<circle cx="510.6" cy="411.0" r="2.15" fill="#fc2a10"/><circle cx="510.6" cy="411.0" r="0.7" fill="#5a1a8a"/>
<circle cx="515.5" cy="411.0" r="2.15" fill="#fc2a10"/><circle cx="515.5" cy="411.0" r="0.7" fill="#5a1a8a"/>
<circle cx="521.0" cy="411.0" r="2.15" fill="#fc2a10"/><circle cx="521.0" cy="411.0" r="0.7" fill="#5a1a8a"/>
<circle cx="457.0" cy="427.4" r="2.15" fill="#fc2a10"/><circle cx="457.0" cy="427.4" r="0.7" fill="#5a1a8a"/>
<circle cx="466.6" cy="427.4" r="2.15" fill="#fc2a10"/><circle cx="466.6" cy="427.4" r="0.7" fill="#5a1a8a"/>
<circle cx="475.6" cy="427.4" r="2.15" fill="#fc2a10"/><circle cx="475.6" cy="427.4" r="0.7" fill="#5a1a8a"/>
<circle cx="437.0" cy="421.0" r="2.15" fill="#fc2a10"/><circle cx="437.0" cy="421.0" r="0.7" fill="#5a1a8a"/>
<circle cx="427.0" cy="389.0" r="2.15" fill="#fc2a10"/><circle cx="427.0" cy="389.0" r="0.7" fill="#5a1a8a"/>
<circle cx="421.0" cy="395.0" r="2.15" fill="#fc2a10"/><circle cx="421.0" cy="395.0" r="0.7" fill="#5a1a8a"/>
<circle cx="440.0" cy="440.0" r="2.15" fill="#fc2a10"/><circle cx="440.0" cy="440.0" r="0.7" fill="#5a1a8a"/>
<circle cx="454.0" cy="447.0" r="2.15" fill="#fc2a10"/><circle cx="454.0" cy="447.0" r="0.7" fill="#5a1a8a"/>
<circle cx="459.0" cy="447.0" r="2.15" fill="#fc2a10"/><circle cx="459.0" cy="447.0" r="0.7" fill="#5a1a8a"/>
<circle cx="466.0" cy="447.0" r="2.15" fill="#fc2a10"/><circle cx="466.0" cy="447.0" r="0.7" fill="#5a1a8a"/>
<circle cx="454.0" cy="452.0" r="2.15" fill="#fc2a10"/><circle cx="454.0" cy="452.0" r="0.7" fill="#5a1a8a"/>
<circle cx="459.0" cy="452.0" r="2.15" fill="#fc2a10"/><circle cx="459.0" cy="452.0" r="0.7" fill="#5a1a8a"/>
<circle cx="437.0" cy="460.0" r="2.15" fill="#fc2a10"/><circle cx="437.0" cy="460.0" r="0.7" fill="#5a1a8a"/>
<circle cx="447.0" cy="466.0" r="2.15" fill="#fc2a10"/><circle cx="447.0" cy="466.0" r="0.7" fill="#5a1a8a"/>
<circle cx="459.0" cy="466.0" r="2.15" fill="#fc2a10"/><circle cx="459.0" cy="466.0" r="0.7" fill="#5a1a8a"/>
<circle cx="462.0" cy="468.0" r="2.15" fill="#fc2a10"/><circle cx="462.0" cy="468.0" r="0.7" fill="#5a1a8a"/>
<circle cx="455.0" cy="427.0" r="2.15" fill="#fc2a10"/><circle cx="455.0" cy="427.0" r="0.7" fill="#5a1a8a"/>
<circle cx="465.0" cy="427.0" r="2.15" fill="#fc2a10"/><circle cx="465.0" cy="427.0" r="0.7" fill="#5a1a8a"/>
<circle cx="475.0" cy="427.0" r="2.15" fill="#fc2a10"/><circle cx="475.0" cy="427.0" r="0.7" fill="#5a1a8a"/>
<circle cx="455.0" cy="437.0" r="2.15" fill="#fc2a10"/><circle cx="455.0" cy="437.0" r="0.7" fill="#5a1a8a"/>
<circle cx="465.0" cy="437.0" r="2.15" fill="#fc2a10"/><circle cx="465.0" cy="437.0" r="0.7" fill="#5a1a8a"/>
<polyline points="339.0,422.0 339.0,413.3 344.4,408.0 375.8,408.0 381.3,403.6 434.3,403.6 438.7,402.5" fill="none" stroke="#e82008" stroke-width="1.1" stroke-linejoin="round" stroke-linecap="round"/>
<polyline points="368.3,422.0 375.8,414.4 434.3,414.4 438.7,410.0 490.7,410.0 498.3,418.8 498.3,426.3 477.7,445.8 477.7,457.8" fill="none" stroke="#fc2a10" stroke-width="3.4" stroke-linejoin="round" stroke-linecap="round"/>
<polyline points="477.7,398.0 477.7,410.0" fill="none" stroke="#fc2a10" stroke-width="3.2" stroke-linejoin="round" stroke-linecap="round"/>
<polyline points="406.2,461.0 406.2,443.7 432.2,419.8 437.6,419.8" fill="none" stroke="#fc2a10" stroke-width="2.6" stroke-linejoin="round" stroke-linecap="round"/>
<polyline points="406.2,480.5 416.0,471.8 416.0,443.7 434.3,425.3" fill="none" stroke="#e82008" stroke-width="1.1" stroke-linejoin="round" stroke-linecap="round"/>
<polyline points="432.2,434.0 443.0,441.5 443.0,468.6 447.3,471.8 477.7,471.8 482.0,476.0 527.5,476.0 560.0,482.7" fill="none" stroke="#e82008" stroke-width="1.0" stroke-linejoin="round" stroke-linecap="round"/>
<polyline points="451.7,457.0 460.0,461.0 468.0,461.0 480.0,469.6 517.0,469.6 534.0,480.0 560.0,480.0" fill="none" stroke="#e82008" stroke-width="1.0" stroke-linejoin="round" stroke-linecap="round"/>
<polyline points="436.5,383.0 447.3,373.3 549.0,373.3 560.0,383.0 595.0,392.5 640.0,392.5" fill="none" stroke="#fc2a10" stroke-width="2.6" stroke-linejoin="round" stroke-linecap="round"/>
<polyline points="451.7,393.8 464.7,380.8 551.0,380.8 560.0,387.4" fill="none" stroke="#e82008" stroke-width="1.1" stroke-linejoin="round" stroke-linecap="round"/>
<polyline points="456.0,393.8 458.2,390.6 516.7,390.6 523.0,385.2" fill="none" stroke="#e82008" stroke-width="1.1" stroke-linejoin="round" stroke-linecap="round"/>
<circle cx="317.5" cy="410.5" r="2.15" fill="#fc2a10"/><circle cx="317.5" cy="410.5" r="0.7" fill="#5a1a8a"/>
<circle cx="317.5" cy="422.0" r="2.15" fill="#fc2a10"/><circle cx="317.5" cy="422.0" r="0.7" fill="#5a1a8a"/>
<circle cx="349.0" cy="422.0" r="2.15" fill="#fc2a10"/><circle cx="349.0" cy="422.0" r="0.7" fill="#5a1a8a"/>
<circle cx="368.3" cy="395.0" r="2.15" fill="#fc2a10"/><circle cx="368.3" cy="395.0" r="0.7" fill="#5a1a8a"/>
<circle cx="368.3" cy="413.0" r="2.15" fill="#fc2a10"/><circle cx="368.3" cy="413.0" r="0.7" fill="#5a1a8a"/>
<circle cx="378.0" cy="434.0" r="2.15" fill="#fc2a10"/><circle cx="378.0" cy="434.0" r="0.7" fill="#5a1a8a"/>
<circle cx="392.0" cy="396.6" r="2.15" fill="#fc2a10"/><circle cx="392.0" cy="396.6" r="0.7" fill="#5a1a8a"/>
<circle cx="401.0" cy="396.3" r="2.15" fill="#fc2a10"/><circle cx="401.0" cy="396.3" r="0.7" fill="#5a1a8a"/>
<circle cx="431.6" cy="406.3" r="2.15" fill="#fc2a10"/><circle cx="431.6" cy="406.3" r="0.7" fill="#5a1a8a"/>
<circle cx="477.7" cy="393.7" r="2.15" fill="#fc2a10"/><circle cx="477.7" cy="393.7" r="0.7" fill="#5a1a8a"/>
<circle cx="432.2" cy="425.3" r="2.15" fill="#fc2a10"/><circle cx="432.2" cy="425.3" r="0.7" fill="#5a1a8a"/>
<circle cx="437.0" cy="430.8" r="2.15" fill="#fc2a10"/><circle cx="437.0" cy="430.8" r="0.7" fill="#5a1a8a"/>
<circle cx="433.3" cy="434.7" r="2.15" fill="#fc2a10"/><circle cx="433.3" cy="434.7" r="0.7" fill="#5a1a8a"/>
<circle cx="437.0" cy="448.8" r="2.15" fill="#fc2a10"/><circle cx="437.0" cy="448.8" r="0.7" fill="#5a1a8a"/>
<circle cx="451.7" cy="457.4" r="2.15" fill="#fc2a10"/><circle cx="451.7" cy="457.4" r="0.7" fill="#5a1a8a"/>
<circle cx="461.9" cy="457.4" r="2.15" fill="#fc2a10"/><circle cx="461.9" cy="457.4" r="0.7" fill="#5a1a8a"/>
<circle cx="446.5" cy="466.6" r="2.15" fill="#fc2a10"/><circle cx="446.5" cy="466.6" r="0.7" fill="#5a1a8a"/>
<circle cx="451.7" cy="466.6" r="2.15" fill="#fc2a10"/><circle cx="451.7" cy="466.6" r="0.7" fill="#5a1a8a"/>
<circle cx="463.6" cy="466.6" r="2.15" fill="#fc2a10"/><circle cx="463.6" cy="466.6" r="0.7" fill="#5a1a8a"/>
<circle cx="467.6" cy="466.6" r="2.15" fill="#fc2a10"/><circle cx="467.6" cy="466.6" r="0.7" fill="#5a1a8a"/>
<circle cx="481.0" cy="466.6" r="2.15" fill="#fc2a10"/><circle cx="481.0" cy="466.6" r="0.7" fill="#5a1a8a"/>
<circle cx="494.6" cy="466.6" r="2.15" fill="#fc2a10"/><circle cx="494.6" cy="466.6" r="0.7" fill="#5a1a8a"/>
<circle cx="498.3" cy="385.5" r="2.15" fill="#fc2a10"/><circle cx="498.3" cy="385.5" r="0.7" fill="#5a1a8a"/>
<circle cx="498.3" cy="394.6" r="2.15" fill="#fc2a10"/><circle cx="498.3" cy="394.6" r="0.7" fill="#5a1a8a"/>
<circle cx="498.3" cy="402.5" r="2.15" fill="#fc2a10"/><circle cx="498.3" cy="402.5" r="0.7" fill="#5a1a8a"/>
<circle cx="456.5" cy="436.8" r="2.15" fill="#fc2a10"/><circle cx="456.5" cy="436.8" r="0.7" fill="#5a1a8a"/>
<circle cx="466.0" cy="436.8" r="2.15" fill="#fc2a10"/><circle cx="466.0" cy="436.8" r="0.7" fill="#5a1a8a"/>
<circle cx="498.3" cy="435.3" r="2.15" fill="#fc2a10"/><circle cx="498.3" cy="435.3" r="0.7" fill="#5a1a8a"/>
<circle cx="498.3" cy="441.0" r="2.15" fill="#fc2a10"/><circle cx="498.3" cy="441.0" r="0.7" fill="#5a1a8a"/>
<circle cx="498.3" cy="446.5" r="2.15" fill="#fc2a10"/><circle cx="498.3" cy="446.5" r="0.7" fill="#5a1a8a"/>
<circle cx="498.3" cy="451.0" r="2.15" fill="#fc2a10"/><circle cx="498.3" cy="451.0" r="0.7" fill="#5a1a8a"/>
<circle cx="503.6" cy="451.0" r="2.15" fill="#fc2a10"/><circle cx="503.6" cy="451.0" r="0.7" fill="#5a1a8a"/>
<circle cx="509.7" cy="451.0" r="2.15" fill="#fc2a10"/><circle cx="509.7" cy="451.0" r="0.7" fill="#5a1a8a"/>
<circle cx="522.0" cy="451.0" r="2.15" fill="#fc2a10"/><circle cx="522.0" cy="451.0" r="0.7" fill="#5a1a8a"/>
<circle cx="510.6" cy="443.5" r="2.15" fill="#fc2a10"/><circle cx="510.6" cy="443.5" r="0.7" fill="#5a1a8a"/>
<circle cx="515.0" cy="443.5" r="2.15" fill="#fc2a10"/><circle cx="515.0" cy="443.5" r="0.7" fill="#5a1a8a"/>
<circle cx="522.0" cy="465.8" r="2.15" fill="#fc2a10"/><circle cx="522.0" cy="465.8" r="0.7" fill="#5a1a8a"/>
<circle cx="522.0" cy="475.2" r="2.15" fill="#fc2a10"/><circle cx="522.0" cy="475.2" r="0.7" fill="#5a1a8a"/>
<circle cx="536.4" cy="470.0" r="2.15" fill="#fc2a10"/><circle cx="536.4" cy="470.0" r="0.7" fill="#5a1a8a"/>
<circle cx="548.6" cy="459.0" r="2.15" fill="#fc2a10"/><circle cx="548.6" cy="459.0" r="0.7" fill="#5a1a8a"/>
<circle cx="536.4" cy="452.0" r="2.15" fill="#fc2a10"/><circle cx="536.4" cy="452.0" r="0.7" fill="#5a1a8a"/>
<circle cx="552.6" cy="452.0" r="2.15" fill="#fc2a10"/><circle cx="552.6" cy="452.0" r="0.7" fill="#5a1a8a"/>
<circle cx="553.0" cy="470.0" r="2.15" fill="#fc2a10"/><circle cx="553.0" cy="470.0" r="0.7" fill="#5a1a8a"/>
<circle cx="553.0" cy="478.0" r="2.15" fill="#fc2a10"/><circle cx="553.0" cy="478.0" r="0.7" fill="#5a1a8a"/>
<polyline points="540.0,413.0 542.0,426.0 563.8,445.5 624.5,445.5 628.8,451.0 715.5,451.0 719.8,445.5 761.0,445.5 763.0,448.0" fill="none" stroke="#e82008" stroke-width="1.1" stroke-linejoin="round" stroke-linecap="round"/>
<polyline points="553.0,420.6 557.3,422.8 609.3,422.8 613.7,417.3" fill="none" stroke="#e82008" stroke-width="1.0" stroke-linejoin="round" stroke-linecap="round"/>
<polyline points="553.0,429.0 557.3,427.0 581.0,427.0 583.0,421.7 613.7,421.7 620.0,417.0 650.0,417.0 660.0,425.0 800.0,425.0" fill="none" stroke="#e82008" stroke-width="1.0" stroke-linejoin="round" stroke-linecap="round"/>
<polyline points="566.0,438.0 568.0,440.0 589.8,440.0 598.5,430.3 650.5,430.3 659.2,436.8 800.0,436.8" fill="none" stroke="#e82008" stroke-width="1.1" stroke-linejoin="round" stroke-linecap="round"/>
<polyline points="594.0,412.0 641.8,412.0 661.3,430.3 800.0,430.3" fill="none" stroke="#e82008" stroke-width="1.0" stroke-linejoin="round" stroke-linecap="round"/>
<polyline points="594.0,416.0 640.0,416.0 659.0,434.0 808.0,434.0 830.0,412.0" fill="none" stroke="#e82008" stroke-width="1.2" stroke-linejoin="round" stroke-linecap="round"/>
<polyline points="594.0,417.8 639.3,417.8 658.3,435.8 808.7,435.8 831.3,413.3" fill="none" stroke="#e82008" stroke-width="1.2" stroke-linejoin="round" stroke-linecap="round"/>
<polyline points="594.0,419.6 638.6,419.6 657.6,437.6 809.5,437.6 832.5,414.5" fill="none" stroke="#e82008" stroke-width="1.2" stroke-linejoin="round" stroke-linecap="round"/>
<polyline points="594.0,421.4 637.8,421.4 656.8,439.4 810.2,439.4 833.8,415.8" fill="none" stroke="#e82008" stroke-width="1.2" stroke-linejoin="round" stroke-linecap="round"/>
<polyline points="594.0,423.2 637.1,423.2 656.1,441.2 811.0,441.2 835.1,417.1" fill="none" stroke="#e82008" stroke-width="1.2" stroke-linejoin="round" stroke-linecap="round"/>
<polyline points="553.0,451.0 568.0,452.0 572.5,456.3 600.7,456.3 605.0,452.0" fill="none" stroke="#e82008" stroke-width="1.0" stroke-linejoin="round" stroke-linecap="round"/>
<polyline points="553.0,458.5 561.7,465.0 600.7,465.0 605.0,459.6" fill="none" stroke="#e82008" stroke-width="1.0" stroke-linejoin="round" stroke-linecap="round"/>
<polyline points="555.0,467.0 561.7,471.5 605.0,471.5 615.8,459.6 706.8,459.6 711.2,465.0" fill="none" stroke="#fc2a10" stroke-width="2.0" stroke-linejoin="round" stroke-linecap="round"/>
<polyline points="540.0,482.3 583.3,482.3 589.8,473.7 717.7,471.5 722.0,465.0 722.0,450.0" fill="none" stroke="#e82008" stroke-width="1.1" stroke-linejoin="round" stroke-linecap="round"/>
<polyline points="583.3,482.3 592.0,491.0 713.3,491.0 722.0,482.3 722.0,465.0" fill="none" stroke="#e82008" stroke-width="1.1" stroke-linejoin="round" stroke-linecap="round"/>
<polyline points="540.0,487.0 580.0,487.0 588.0,495.0 600.0,495.0" fill="none" stroke="#e82008" stroke-width="1.0" stroke-linejoin="round" stroke-linecap="round"/>
<polyline points="621.0,417.0 640.0,404.0 650.0,404.0" fill="none" stroke="#e82008" stroke-width="1.0" stroke-linejoin="round" stroke-linecap="round"/>
<circle cx="722.7" cy="448.4" r="2.15" fill="#fc2a10"/><circle cx="722.7" cy="448.4" r="0.7" fill="#5a1a8a"/>
<circle cx="728.4" cy="448.4" r="2.15" fill="#fc2a10"/><circle cx="728.4" cy="448.4" r="0.7" fill="#5a1a8a"/>
<circle cx="734.0" cy="448.4" r="2.15" fill="#fc2a10"/><circle cx="734.0" cy="448.4" r="0.7" fill="#5a1a8a"/>
<circle cx="746.0" cy="448.4" r="2.15" fill="#fc2a10"/><circle cx="746.0" cy="448.4" r="0.7" fill="#5a1a8a"/>
<circle cx="752.0" cy="448.4" r="2.15" fill="#fc2a10"/><circle cx="752.0" cy="448.4" r="0.7" fill="#5a1a8a"/>
<circle cx="762.0" cy="448.4" r="2.15" fill="#fc2a10"/><circle cx="762.0" cy="448.4" r="0.7" fill="#5a1a8a"/>
<circle cx="716.7" cy="453.6" r="2.15" fill="#fc2a10"/><circle cx="716.7" cy="453.6" r="0.7" fill="#5a1a8a"/>
<circle cx="722.7" cy="453.6" r="2.15" fill="#fc2a10"/><circle cx="722.7" cy="453.6" r="0.7" fill="#5a1a8a"/>
<circle cx="722.7" cy="459.7" r="2.15" fill="#fc2a10"/><circle cx="722.7" cy="459.7" r="0.7" fill="#5a1a8a"/>
<circle cx="703.6" cy="464.6" r="2.15" fill="#fc2a10"/><circle cx="703.6" cy="464.6" r="0.7" fill="#5a1a8a"/>
<circle cx="710.4" cy="464.6" r="2.15" fill="#fc2a10"/><circle cx="710.4" cy="464.6" r="0.7" fill="#5a1a8a"/>
<circle cx="674.0" cy="429.7" r="2.15" fill="#fc2a10"/><circle cx="674.0" cy="429.7" r="0.7" fill="#5a1a8a"/>
<circle cx="683.4" cy="429.7" r="2.15" fill="#fc2a10"/><circle cx="683.4" cy="429.7" r="0.7" fill="#5a1a8a"/>
<circle cx="689.6" cy="429.7" r="2.15" fill="#fc2a10"/><circle cx="689.6" cy="429.7" r="0.7" fill="#5a1a8a"/>
<circle cx="710.0" cy="420.6" r="2.15" fill="#fc2a10"/><circle cx="710.0" cy="420.6" r="0.7" fill="#5a1a8a"/>
<circle cx="710.0" cy="414.4" r="2.15" fill="#fc2a10"/><circle cx="710.0" cy="414.4" r="0.7" fill="#5a1a8a"/>
<circle cx="716.0" cy="419.4" r="2.15" fill="#fc2a10"/><circle cx="716.0" cy="419.4" r="0.7" fill="#5a1a8a"/>
<circle cx="772.0" cy="425.0" r="2.15" fill="#fc2a10"/><circle cx="772.0" cy="425.0" r="0.7" fill="#5a1a8a"/>
<circle cx="778.7" cy="425.0" r="2.15" fill="#fc2a10"/><circle cx="778.7" cy="425.0" r="0.7" fill="#5a1a8a"/>
<circle cx="790.0" cy="415.5" r="2.15" fill="#fc2a10"/><circle cx="790.0" cy="415.5" r="0.7" fill="#5a1a8a"/>
<circle cx="553.0" cy="420.0" r="2.15" fill="#fc2a10"/><circle cx="553.0" cy="420.0" r="0.7" fill="#5a1a8a"/>
<circle cx="553.0" cy="430.0" r="2.15" fill="#fc2a10"/><circle cx="553.0" cy="430.0" r="0.7" fill="#5a1a8a"/>
<circle cx="566.0" cy="437.0" r="2.15" fill="#fc2a10"/><circle cx="566.0" cy="437.0" r="0.7" fill="#5a1a8a"/>
<circle cx="566.0" cy="410.0" r="2.15" fill="#fc2a10"/><circle cx="566.0" cy="410.0" r="0.7" fill="#5a1a8a"/>
<circle cx="566.0" cy="400.0" r="2.15" fill="#fc2a10"/><circle cx="566.0" cy="400.0" r="0.7" fill="#5a1a8a"/>
<circle cx="583.0" cy="400.0" r="2.15" fill="#fc2a10"/><circle cx="583.0" cy="400.0" r="0.7" fill="#5a1a8a"/>
<circle cx="596.0" cy="398.0" r="2.15" fill="#fc2a10"/><circle cx="596.0" cy="398.0" r="0.7" fill="#5a1a8a"/>
<circle cx="596.0" cy="412.0" r="2.15" fill="#fc2a10"/><circle cx="596.0" cy="412.0" r="0.7" fill="#5a1a8a"/>
<circle cx="613.0" cy="419.0" r="2.15" fill="#fc2a10"/><circle cx="613.0" cy="419.0" r="0.7" fill="#5a1a8a"/>
<circle cx="613.0" cy="432.0" r="2.15" fill="#fc2a10"/><circle cx="613.0" cy="432.0" r="0.7" fill="#5a1a8a"/>
<circle cx="613.0" cy="445.0" r="2.15" fill="#fc2a10"/><circle cx="613.0" cy="445.0" r="0.7" fill="#5a1a8a"/>
<circle cx="613.0" cy="452.0" r="2.15" fill="#fc2a10"/><circle cx="613.0" cy="452.0" r="0.7" fill="#5a1a8a"/>
<circle cx="633.0" cy="412.0" r="2.15" fill="#fc2a10"/><circle cx="633.0" cy="412.0" r="0.7" fill="#5a1a8a"/>
<circle cx="633.0" cy="421.0" r="2.15" fill="#fc2a10"/><circle cx="633.0" cy="421.0" r="0.7" fill="#5a1a8a"/>
<circle cx="596.0" cy="426.0" r="2.15" fill="#fc2a10"/><circle cx="596.0" cy="426.0" r="0.7" fill="#5a1a8a"/>
<circle cx="596.0" cy="434.0" r="2.15" fill="#fc2a10"/><circle cx="596.0" cy="434.0" r="0.7" fill="#5a1a8a"/>
<circle cx="623.0" cy="434.0" r="2.15" fill="#fc2a10"/><circle cx="623.0" cy="434.0" r="0.7" fill="#5a1a8a"/>
<circle cx="553.0" cy="448.0" r="2.15" fill="#fc2a10"/><circle cx="553.0" cy="448.0" r="0.7" fill="#5a1a8a"/>
<circle cx="553.0" cy="468.0" r="2.15" fill="#fc2a10"/><circle cx="553.0" cy="468.0" r="0.7" fill="#5a1a8a"/>
<circle cx="566.0" cy="469.0" r="2.15" fill="#fc2a10"/><circle cx="566.0" cy="469.0" r="0.7" fill="#5a1a8a"/>
<circle cx="596.0" cy="455.0" r="2.15" fill="#fc2a10"/><circle cx="596.0" cy="455.0" r="0.7" fill="#5a1a8a"/>
<circle cx="596.0" cy="462.0" r="2.15" fill="#fc2a10"/><circle cx="596.0" cy="462.0" r="0.7" fill="#5a1a8a"/>
<circle cx="605.0" cy="455.0" r="2.15" fill="#fc2a10"/><circle cx="605.0" cy="455.0" r="0.7" fill="#5a1a8a"/>
<circle cx="605.0" cy="462.0" r="2.15" fill="#fc2a10"/><circle cx="605.0" cy="462.0" r="0.7" fill="#5a1a8a"/>
<circle cx="633.0" cy="446.0" r="2.15" fill="#fc2a10"/><circle cx="633.0" cy="446.0" r="0.7" fill="#5a1a8a"/>
<circle cx="633.0" cy="462.0" r="2.15" fill="#fc2a10"/><circle cx="633.0" cy="462.0" r="0.7" fill="#5a1a8a"/>
<circle cx="634.0" cy="475.0" r="2.15" fill="#fc2a10"/><circle cx="634.0" cy="475.0" r="0.7" fill="#5a1a8a"/>
<circle cx="615.0" cy="475.0" r="2.15" fill="#fc2a10"/><circle cx="615.0" cy="475.0" r="0.7" fill="#5a1a8a"/>
<circle cx="600.0" cy="475.0" r="2.15" fill="#fc2a10"/><circle cx="600.0" cy="475.0" r="0.7" fill="#5a1a8a"/>
<circle cx="553.0" cy="475.0" r="2.15" fill="#fc2a10"/><circle cx="553.0" cy="475.0" r="0.7" fill="#5a1a8a"/>
<circle cx="575.0" cy="475.0" r="2.15" fill="#fc2a10"/><circle cx="575.0" cy="475.0" r="0.7" fill="#5a1a8a"/>
<circle cx="738" cy="460.3" r="5.6" fill="#fc2a10"/><circle cx="738" cy="460.3" r="3.4" fill="#1414a6"/>
<circle cx="804.2" cy="479.3" r="5.8" fill="#fc2a10"/><circle cx="804.2" cy="479.3" r="3.4" fill="#1414a6"/>
<circle cx="633.5" cy="483.8" r="5.7" fill="#fc2a10"/><circle cx="633.5" cy="483.8" r="3.4" fill="#1414a6"/>
<circle cx="652.5" cy="483.8" r="5.7" fill="#fc2a10"/><circle cx="652.5" cy="483.8" r="3.4" fill="#1414a6"/>
<circle cx="671.4" cy="483.8" r="5.7" fill="#fc2a10"/><circle cx="671.4" cy="483.8" r="3.4" fill="#1414a6"/>
<circle cx="690.3" cy="483.8" r="5.7" fill="#fc2a10"/><circle cx="690.3" cy="483.8" r="3.4" fill="#1414a6"/>
<circle cx="709.2" cy="483.8" r="5.7" fill="#fc2a10"/><circle cx="709.2" cy="483.8" r="3.4" fill="#1414a6"/><polyline points="675.6,309.8 675.6,299.2 688.9,285.9 757.9,285.9 780.5,307.2 780.5,347.0 787.1,354.9" fill="none" stroke="#e82008" stroke-width="1.1" stroke-linejoin="round" stroke-linecap="round"/>
<polyline points="672.8,309.8 672.8,298.0 687.7,283.1 759.0,283.1 783.3,306.0 783.3,346.0 789.3,353.2" fill="none" stroke="#e82008" stroke-width="1.1" stroke-linejoin="round" stroke-linecap="round"/>
<polyline points="670.0,309.8 670.0,296.9 686.6,280.3 760.1,280.3 786.1,304.7 786.1,345.0 791.4,351.4" fill="none" stroke="#e82008" stroke-width="1.1" stroke-linejoin="round" stroke-linecap="round"/>
<polyline points="667.2,309.8 667.2,295.7 685.4,277.5 761.2,277.5 788.9,303.5 788.9,343.9 793.6,349.6" fill="none" stroke="#e82008" stroke-width="1.1" stroke-linejoin="round" stroke-linecap="round"/>
<polyline points="664.4,309.8 664.4,294.6 684.3,274.7 762.4,274.7 791.7,302.3 791.7,342.9 795.7,347.8" fill="none" stroke="#e82008" stroke-width="1.1" stroke-linejoin="round" stroke-linecap="round"/>
<polyline points="680.9,357.6 680.9,384.1 715.4,418.7 768.5,418.7 784.5,402.7 784.5,357.6" fill="none" stroke="#e82008" stroke-width="1.1" stroke-linejoin="round" stroke-linecap="round"/>
<polyline points="683.7,357.6 683.7,383.0 716.6,415.9 767.4,415.9 781.7,401.6 781.7,357.6" fill="none" stroke="#e82008" stroke-width="1.1" stroke-linejoin="round" stroke-linecap="round"/>
<polyline points="686.5,357.6 686.5,381.8 717.8,413.1 766.2,413.1 778.9,400.4 778.9,357.6" fill="none" stroke="#e82008" stroke-width="1.1" stroke-linejoin="round" stroke-linecap="round"/>
<polyline points="689.3,357.6 689.3,380.7 718.9,410.3 765.1,410.3 776.1,399.3 776.1,357.6" fill="none" stroke="#e82008" stroke-width="1.1" stroke-linejoin="round" stroke-linecap="round"/>
<polyline points="692.1,357.6 692.1,379.5 720.1,407.5 763.9,407.5 773.3,398.1 773.3,357.6" fill="none" stroke="#e82008" stroke-width="1.1" stroke-linejoin="round" stroke-linecap="round"/>
<polyline points="675.6,324.4 702.2,324.4 710.1,329.7 744.6,329.7 760.6,345.7 776.5,345.7 789.8,360.3 789.8,381.5" fill="none" stroke="#e82008" stroke-width="1.1" stroke-linejoin="round" stroke-linecap="round"/>
<polyline points="675.6,327.2 701.3,327.2 709.3,332.5 743.5,332.5 759.4,348.5 775.3,348.5 787.0,361.3 787.0,381.5" fill="none" stroke="#e82008" stroke-width="1.1" stroke-linejoin="round" stroke-linecap="round"/>
<polyline points="675.6,330.0 700.5,330.0 708.4,335.3 742.3,335.3 758.2,351.3 774.0,351.3 784.2,362.4 784.2,381.5" fill="none" stroke="#e82008" stroke-width="1.1" stroke-linejoin="round" stroke-linecap="round"/>
<polyline points="675.6,332.8 699.6,332.8 707.6,338.1 741.2,338.1 757.1,354.1 772.8,354.1 781.4,363.5 781.4,381.5" fill="none" stroke="#e82008" stroke-width="1.1" stroke-linejoin="round" stroke-linecap="round"/>
<polyline points="675.6,335.6 698.8,335.6 706.7,340.9 740.0,340.9 755.9,356.9 771.5,356.9 778.6,364.6 778.6,381.5" fill="none" stroke="#e82008" stroke-width="1.1" stroke-linejoin="round" stroke-linecap="round"/>
<polyline points="678.3,349.6 686.2,349.6 694.2,357.6 712.8,357.6 726.1,368.2 752.6,368.2 765.9,381.5 765.9,402.7" fill="none" stroke="#e82008" stroke-width="1.0" stroke-linejoin="round" stroke-linecap="round"/>
<polyline points="678.3,352.4 685.1,352.4 693.0,360.4 711.8,360.4 725.1,371.0 751.4,371.0 763.1,382.7 763.1,402.7" fill="none" stroke="#e82008" stroke-width="1.0" stroke-linejoin="round" stroke-linecap="round"/>
<polyline points="678.3,355.2 683.9,355.2 691.9,363.2 710.8,363.2 724.1,373.8 750.3,373.8 760.3,383.8 760.3,402.7" fill="none" stroke="#e82008" stroke-width="1.0" stroke-linejoin="round" stroke-linecap="round"/>
<polyline points="678.3,358.0 682.8,358.0 690.7,366.0 709.8,366.0 723.1,376.6 749.1,376.6 757.5,385.0 757.5,402.7" fill="none" stroke="#e82008" stroke-width="1.0" stroke-linejoin="round" stroke-linecap="round"/>
<polyline points="691.5,299.2 691.5,304.5 712.8,304.5 712.8,320.4 728.7,320.4 728.7,301.9 735.3,301.9 735.3,323.1 742.0,323.1" fill="none" stroke="#e82008" stroke-width="1.1" stroke-linejoin="round" stroke-linecap="round"/>
<polyline points="718.1,336.4 718.1,312.5 722.1,312.5 722.1,333.7" fill="none" stroke="#e82008" stroke-width="1.0" stroke-linejoin="round" stroke-linecap="round"/>
<polyline points="747.3,299.2 752.6,299.2 752.6,315.1 757.9,315.1 757.9,331.1" fill="none" stroke="#e82008" stroke-width="1.0" stroke-linejoin="round" stroke-linecap="round"/>
<polyline points="760.6,320.4 765.9,320.4 765.9,339.0 771.2,339.0 771.2,317.8" fill="none" stroke="#e82008" stroke-width="1.0" stroke-linejoin="round" stroke-linecap="round"/>
<polyline points="699.5,336.4 699.5,344.3 707.5,349.6 707.5,333.7 694.2,333.7 694.2,347.0" fill="none" stroke="#e82008" stroke-width="1.0" stroke-linejoin="round" stroke-linecap="round"/>
<polyline points="691.5,402.7 691.5,381.5 699.5,373.5 710.1,373.5" fill="none" stroke="#e82008" stroke-width="1.0" stroke-linejoin="round" stroke-linecap="round"/>
<polyline points="693.9,400.3 693.9,381.5 701.9,374.2 710.1,374.2" fill="none" stroke="#e82008" stroke-width="1.0" stroke-linejoin="round" stroke-linecap="round"/>
<polyline points="696.3,398.0 696.3,381.5 704.3,375.0 710.1,375.0" fill="none" stroke="#e82008" stroke-width="1.0" stroke-linejoin="round" stroke-linecap="round"/>
<polyline points="698.7,395.6 698.7,381.5 706.7,375.7 710.1,375.7" fill="none" stroke="#e82008" stroke-width="1.0" stroke-linejoin="round" stroke-linecap="round"/>
<polyline points="712.8,413.4 712.8,357.6 718.1,357.6 718.1,394.8 731.4,394.8 731.4,381.5 736.7,381.5 736.7,408.0 744.6,408.0 744.6,384.1" fill="none" stroke="#e82008" stroke-width="1.1" stroke-linejoin="round" stroke-linecap="round"/>
<polyline points="720.7,362.9 720.7,376.2 728.7,376.2 728.7,362.9 739.3,362.9 739.3,376.2" fill="none" stroke="#e82008" stroke-width="1.0" stroke-linejoin="round" stroke-linecap="round"/>
<polyline points="704.8,370.9 704.8,408.0 711.5,414.7 752.6,414.7 760.6,405.4 760.6,381.5" fill="none" stroke="#e82008" stroke-width="1.0" stroke-linejoin="round" stroke-linecap="round"/>
<polyline points="696.9,376.2 696.9,394.8 703.5,400.1" fill="none" stroke="#e82008" stroke-width="1.0" stroke-linejoin="round" stroke-linecap="round"/>
<polyline points="749.9,349.6 749.9,360.3 771.2,360.3 771.2,370.9 776.5,376.2 776.5,394.8" fill="none" stroke="#e82008" stroke-width="1.0" stroke-linejoin="round" stroke-linecap="round"/>
<polyline points="768.5,381.5 776.5,381.5 776.5,386.8 768.5,394.8 768.5,402.7" fill="none" stroke="#e82008" stroke-width="1.0" stroke-linejoin="round" stroke-linecap="round"/>
<circle cx="786.0" cy="307.0" r="2.15" fill="#fc2a10"/><circle cx="786.0" cy="307.0" r="0.7" fill="#5a1a8a"/>
<circle cx="786.0" cy="313.0" r="2.15" fill="#fc2a10"/><circle cx="786.0" cy="313.0" r="0.7" fill="#5a1a8a"/>
<circle cx="786.0" cy="319.0" r="2.15" fill="#fc2a10"/><circle cx="786.0" cy="319.0" r="0.7" fill="#5a1a8a"/>
<circle cx="786.0" cy="325.0" r="2.15" fill="#fc2a10"/><circle cx="786.0" cy="325.0" r="0.7" fill="#5a1a8a"/>
<circle cx="786.0" cy="331.0" r="2.15" fill="#fc2a10"/><circle cx="786.0" cy="331.0" r="0.7" fill="#5a1a8a"/>
<circle cx="786.0" cy="337.0" r="2.15" fill="#fc2a10"/><circle cx="786.0" cy="337.0" r="0.7" fill="#5a1a8a"/>
<circle cx="786.0" cy="343.0" r="2.15" fill="#fc2a10"/><circle cx="786.0" cy="343.0" r="0.7" fill="#5a1a8a"/>
<circle cx="786.0" cy="349.0" r="2.15" fill="#fc2a10"/><circle cx="786.0" cy="349.0" r="0.7" fill="#5a1a8a"/>
<circle cx="786.0" cy="355.0" r="2.15" fill="#fc2a10"/><circle cx="786.0" cy="355.0" r="0.7" fill="#5a1a8a"/>
<circle cx="786.0" cy="361.0" r="2.15" fill="#fc2a10"/><circle cx="786.0" cy="361.0" r="0.7" fill="#5a1a8a"/>
<circle cx="786.0" cy="367.0" r="2.15" fill="#fc2a10"/><circle cx="786.0" cy="367.0" r="0.7" fill="#5a1a8a"/>
<circle cx="786.0" cy="373.0" r="2.15" fill="#fc2a10"/><circle cx="786.0" cy="373.0" r="0.7" fill="#5a1a8a"/>
<circle cx="786.0" cy="379.0" r="2.15" fill="#fc2a10"/><circle cx="786.0" cy="379.0" r="0.7" fill="#5a1a8a"/>
<circle cx="786.0" cy="385.0" r="2.15" fill="#fc2a10"/><circle cx="786.0" cy="385.0" r="0.7" fill="#5a1a8a"/>
<circle cx="786.0" cy="391.0" r="2.15" fill="#fc2a10"/><circle cx="786.0" cy="391.0" r="0.7" fill="#5a1a8a"/>
<circle cx="786.0" cy="397.0" r="2.15" fill="#fc2a10"/><circle cx="786.0" cy="397.0" r="0.7" fill="#5a1a8a"/>
<circle cx="786.0" cy="403.0" r="2.15" fill="#fc2a10"/><circle cx="786.0" cy="403.0" r="0.7" fill="#5a1a8a"/>
<circle cx="792.1" cy="307.0" r="2.15" fill="#fc2a10"/><circle cx="792.1" cy="307.0" r="0.7" fill="#5a1a8a"/>
<circle cx="792.1" cy="313.0" r="2.15" fill="#fc2a10"/><circle cx="792.1" cy="313.0" r="0.7" fill="#5a1a8a"/>
<circle cx="792.1" cy="319.0" r="2.15" fill="#fc2a10"/><circle cx="792.1" cy="319.0" r="0.7" fill="#5a1a8a"/>
<circle cx="792.1" cy="325.0" r="2.15" fill="#fc2a10"/><circle cx="792.1" cy="325.0" r="0.7" fill="#5a1a8a"/>
<circle cx="792.1" cy="331.0" r="2.15" fill="#fc2a10"/><circle cx="792.1" cy="331.0" r="0.7" fill="#5a1a8a"/>
<circle cx="792.1" cy="337.0" r="2.15" fill="#fc2a10"/><circle cx="792.1" cy="337.0" r="0.7" fill="#5a1a8a"/>
<circle cx="792.1" cy="343.0" r="2.15" fill="#fc2a10"/><circle cx="792.1" cy="343.0" r="0.7" fill="#5a1a8a"/>
<circle cx="792.1" cy="349.0" r="2.15" fill="#fc2a10"/><circle cx="792.1" cy="349.0" r="0.7" fill="#5a1a8a"/>
<circle cx="792.1" cy="355.0" r="2.15" fill="#fc2a10"/><circle cx="792.1" cy="355.0" r="0.7" fill="#5a1a8a"/>
<circle cx="792.1" cy="361.0" r="2.15" fill="#fc2a10"/><circle cx="792.1" cy="361.0" r="0.7" fill="#5a1a8a"/>
<circle cx="792.1" cy="367.0" r="2.15" fill="#fc2a10"/><circle cx="792.1" cy="367.0" r="0.7" fill="#5a1a8a"/>
<circle cx="792.1" cy="373.0" r="2.15" fill="#fc2a10"/><circle cx="792.1" cy="373.0" r="0.7" fill="#5a1a8a"/>
<circle cx="792.1" cy="379.0" r="2.15" fill="#fc2a10"/><circle cx="792.1" cy="379.0" r="0.7" fill="#5a1a8a"/>
<circle cx="792.1" cy="385.0" r="2.15" fill="#fc2a10"/><circle cx="792.1" cy="385.0" r="0.7" fill="#5a1a8a"/>
<circle cx="792.1" cy="391.0" r="2.15" fill="#fc2a10"/><circle cx="792.1" cy="391.0" r="0.7" fill="#5a1a8a"/>
<circle cx="792.1" cy="397.0" r="2.15" fill="#fc2a10"/><circle cx="792.1" cy="397.0" r="0.7" fill="#5a1a8a"/>
<circle cx="792.1" cy="403.0" r="2.15" fill="#fc2a10"/><circle cx="792.1" cy="403.0" r="0.7" fill="#5a1a8a"/>
<circle cx="798.2" cy="307.0" r="2.15" fill="#fc2a10"/><circle cx="798.2" cy="307.0" r="0.7" fill="#5a1a8a"/>
<circle cx="798.2" cy="313.0" r="2.15" fill="#fc2a10"/><circle cx="798.2" cy="313.0" r="0.7" fill="#5a1a8a"/>
<circle cx="798.2" cy="319.0" r="2.15" fill="#fc2a10"/><circle cx="798.2" cy="319.0" r="0.7" fill="#5a1a8a"/>
<circle cx="798.2" cy="325.0" r="2.15" fill="#fc2a10"/><circle cx="798.2" cy="325.0" r="0.7" fill="#5a1a8a"/>
<circle cx="798.2" cy="331.0" r="2.15" fill="#fc2a10"/><circle cx="798.2" cy="331.0" r="0.7" fill="#5a1a8a"/>
<circle cx="798.2" cy="337.0" r="2.15" fill="#fc2a10"/><circle cx="798.2" cy="337.0" r="0.7" fill="#5a1a8a"/>
<circle cx="798.2" cy="343.0" r="2.15" fill="#fc2a10"/><circle cx="798.2" cy="343.0" r="0.7" fill="#5a1a8a"/>
<circle cx="798.2" cy="349.0" r="2.15" fill="#fc2a10"/><circle cx="798.2" cy="349.0" r="0.7" fill="#5a1a8a"/>
<circle cx="798.2" cy="355.0" r="2.15" fill="#fc2a10"/><circle cx="798.2" cy="355.0" r="0.7" fill="#5a1a8a"/>
<circle cx="798.2" cy="361.0" r="2.15" fill="#fc2a10"/><circle cx="798.2" cy="361.0" r="0.7" fill="#5a1a8a"/>
<circle cx="798.2" cy="367.0" r="2.15" fill="#fc2a10"/><circle cx="798.2" cy="367.0" r="0.7" fill="#5a1a8a"/>
<circle cx="798.2" cy="373.0" r="2.15" fill="#fc2a10"/><circle cx="798.2" cy="373.0" r="0.7" fill="#5a1a8a"/>
<circle cx="798.2" cy="379.0" r="2.15" fill="#fc2a10"/><circle cx="798.2" cy="379.0" r="0.7" fill="#5a1a8a"/>
<circle cx="798.2" cy="385.0" r="2.15" fill="#fc2a10"/><circle cx="798.2" cy="385.0" r="0.7" fill="#5a1a8a"/>
<circle cx="798.2" cy="391.0" r="2.15" fill="#fc2a10"/><circle cx="798.2" cy="391.0" r="0.7" fill="#5a1a8a"/>
<circle cx="798.2" cy="397.0" r="2.15" fill="#fc2a10"/><circle cx="798.2" cy="397.0" r="0.7" fill="#5a1a8a"/>
<circle cx="798.2" cy="403.0" r="2.15" fill="#fc2a10"/><circle cx="798.2" cy="403.0" r="0.7" fill="#5a1a8a"/>
<circle cx="818.7" cy="297.0" r="2.15" fill="#fc2a10"/><circle cx="818.7" cy="297.0" r="0.7" fill="#5a1a8a"/>
<circle cx="818.7" cy="303.8" r="2.15" fill="#fc2a10"/><circle cx="818.7" cy="303.8" r="0.7" fill="#5a1a8a"/>
<circle cx="818.7" cy="310.6" r="2.15" fill="#fc2a10"/><circle cx="818.7" cy="310.6" r="0.7" fill="#5a1a8a"/>
<circle cx="818.7" cy="317.4" r="2.15" fill="#fc2a10"/><circle cx="818.7" cy="317.4" r="0.7" fill="#5a1a8a"/>
<circle cx="818.7" cy="324.2" r="2.15" fill="#fc2a10"/><circle cx="818.7" cy="324.2" r="0.7" fill="#5a1a8a"/>
<circle cx="818.7" cy="331.0" r="2.15" fill="#fc2a10"/><circle cx="818.7" cy="331.0" r="0.7" fill="#5a1a8a"/>
<circle cx="818.7" cy="337.8" r="2.15" fill="#fc2a10"/><circle cx="818.7" cy="337.8" r="0.7" fill="#5a1a8a"/>
<circle cx="818.7" cy="344.6" r="2.15" fill="#fc2a10"/><circle cx="818.7" cy="344.6" r="0.7" fill="#5a1a8a"/>
<circle cx="818.7" cy="351.4" r="2.15" fill="#fc2a10"/><circle cx="818.7" cy="351.4" r="0.7" fill="#5a1a8a"/>
<circle cx="818.7" cy="358.2" r="2.15" fill="#fc2a10"/><circle cx="818.7" cy="358.2" r="0.7" fill="#5a1a8a"/>
<circle cx="818.7" cy="365.0" r="2.15" fill="#fc2a10"/><circle cx="818.7" cy="365.0" r="0.7" fill="#5a1a8a"/>
<circle cx="818.7" cy="371.8" r="2.15" fill="#fc2a10"/><circle cx="818.7" cy="371.8" r="0.7" fill="#5a1a8a"/>
<circle cx="818.7" cy="378.6" r="2.15" fill="#fc2a10"/><circle cx="818.7" cy="378.6" r="0.7" fill="#5a1a8a"/>
<circle cx="818.7" cy="385.4" r="2.15" fill="#fc2a10"/><circle cx="818.7" cy="385.4" r="0.7" fill="#5a1a8a"/>
<circle cx="818.7" cy="392.2" r="2.15" fill="#fc2a10"/><circle cx="818.7" cy="392.2" r="0.7" fill="#5a1a8a"/>
<circle cx="818.7" cy="399.0" r="2.15" fill="#fc2a10"/><circle cx="818.7" cy="399.0" r="0.7" fill="#5a1a8a"/>
<circle cx="818.7" cy="405.8" r="2.15" fill="#fc2a10"/><circle cx="818.7" cy="405.8" r="0.7" fill="#5a1a8a"/>
<circle cx="818.7" cy="412.6" r="2.15" fill="#fc2a10"/><circle cx="818.7" cy="412.6" r="0.7" fill="#5a1a8a"/>
<circle cx="674.0" cy="281.7" r="2.15" fill="#fc2a10"/><circle cx="674.0" cy="281.7" r="0.7" fill="#5a1a8a"/>
<circle cx="680.1" cy="281.7" r="2.15" fill="#fc2a10"/><circle cx="680.1" cy="281.7" r="0.7" fill="#5a1a8a"/>
<circle cx="674.0" cy="287.3" r="2.15" fill="#fc2a10"/><circle cx="674.0" cy="287.3" r="0.7" fill="#5a1a8a"/>
<circle cx="680.1" cy="287.3" r="2.15" fill="#fc2a10"/><circle cx="680.1" cy="287.3" r="0.7" fill="#5a1a8a"/>
<circle cx="674.0" cy="292.9" r="2.15" fill="#fc2a10"/><circle cx="674.0" cy="292.9" r="0.7" fill="#5a1a8a"/>
<circle cx="680.1" cy="292.9" r="2.15" fill="#fc2a10"/><circle cx="680.1" cy="292.9" r="0.7" fill="#5a1a8a"/>
<circle cx="674.0" cy="298.5" r="2.15" fill="#fc2a10"/><circle cx="674.0" cy="298.5" r="0.7" fill="#5a1a8a"/>
<circle cx="680.1" cy="298.5" r="2.15" fill="#fc2a10"/><circle cx="680.1" cy="298.5" r="0.7" fill="#5a1a8a"/>
<circle cx="674.0" cy="304.1" r="2.15" fill="#fc2a10"/><circle cx="674.0" cy="304.1" r="0.7" fill="#5a1a8a"/>
<circle cx="680.1" cy="304.1" r="2.15" fill="#fc2a10"/><circle cx="680.1" cy="304.1" r="0.7" fill="#5a1a8a"/>
<circle cx="674.0" cy="309.7" r="2.15" fill="#fc2a10"/><circle cx="674.0" cy="309.7" r="0.7" fill="#5a1a8a"/>
<circle cx="680.1" cy="309.7" r="2.15" fill="#fc2a10"/><circle cx="680.1" cy="309.7" r="0.7" fill="#5a1a8a"/>
<circle cx="674.0" cy="315.3" r="2.15" fill="#fc2a10"/><circle cx="674.0" cy="315.3" r="0.7" fill="#5a1a8a"/>
<circle cx="680.1" cy="315.3" r="2.15" fill="#fc2a10"/><circle cx="680.1" cy="315.3" r="0.7" fill="#5a1a8a"/>
<circle cx="674.0" cy="320.9" r="2.15" fill="#fc2a10"/><circle cx="674.0" cy="320.9" r="0.7" fill="#5a1a8a"/>
<circle cx="680.1" cy="320.9" r="2.15" fill="#fc2a10"/><circle cx="680.1" cy="320.9" r="0.7" fill="#5a1a8a"/>
<circle cx="674.0" cy="326.5" r="2.15" fill="#fc2a10"/><circle cx="674.0" cy="326.5" r="0.7" fill="#5a1a8a"/>
<circle cx="680.1" cy="326.5" r="2.15" fill="#fc2a10"/><circle cx="680.1" cy="326.5" r="0.7" fill="#5a1a8a"/>
<circle cx="674.0" cy="332.1" r="2.15" fill="#fc2a10"/><circle cx="674.0" cy="332.1" r="0.7" fill="#5a1a8a"/>
<circle cx="680.1" cy="332.1" r="2.15" fill="#fc2a10"/><circle cx="680.1" cy="332.1" r="0.7" fill="#5a1a8a"/>
<circle cx="674.0" cy="337.7" r="2.15" fill="#fc2a10"/><circle cx="674.0" cy="337.7" r="0.7" fill="#5a1a8a"/>
<circle cx="680.1" cy="337.7" r="2.15" fill="#fc2a10"/><circle cx="680.1" cy="337.7" r="0.7" fill="#5a1a8a"/>
<circle cx="674.0" cy="343.3" r="2.15" fill="#fc2a10"/><circle cx="674.0" cy="343.3" r="0.7" fill="#5a1a8a"/>
<circle cx="680.1" cy="343.3" r="2.15" fill="#fc2a10"/><circle cx="680.1" cy="343.3" r="0.7" fill="#5a1a8a"/>
<circle cx="744.6" cy="307.2" r="2.15" fill="#fc2a10"/><circle cx="744.6" cy="307.2" r="0.7" fill="#5a1a8a"/>
<circle cx="749.9" cy="307.2" r="2.15" fill="#fc2a10"/><circle cx="749.9" cy="307.2" r="0.7" fill="#5a1a8a"/>
<circle cx="744.6" cy="313.8" r="2.15" fill="#fc2a10"/><circle cx="744.6" cy="313.8" r="0.7" fill="#5a1a8a"/>
<circle cx="749.9" cy="313.8" r="2.15" fill="#fc2a10"/><circle cx="749.9" cy="313.8" r="0.7" fill="#5a1a8a"/>
<circle cx="755.3" cy="313.8" r="2.15" fill="#fc2a10"/><circle cx="755.3" cy="313.8" r="0.7" fill="#5a1a8a"/>
<circle cx="744.6" cy="320.4" r="2.15" fill="#fc2a10"/><circle cx="744.6" cy="320.4" r="0.7" fill="#5a1a8a"/>
<circle cx="749.9" cy="320.4" r="2.15" fill="#fc2a10"/><circle cx="749.9" cy="320.4" r="0.7" fill="#5a1a8a"/>
<circle cx="755.3" cy="320.4" r="2.15" fill="#fc2a10"/><circle cx="755.3" cy="320.4" r="0.7" fill="#5a1a8a"/>
<circle cx="749.9" cy="332.4" r="2.15" fill="#fc2a10"/><circle cx="749.9" cy="332.4" r="0.7" fill="#5a1a8a"/>
<circle cx="755.3" cy="332.4" r="2.15" fill="#fc2a10"/><circle cx="755.3" cy="332.4" r="0.7" fill="#5a1a8a"/>
<circle cx="744.6" cy="337.7" r="2.15" fill="#fc2a10"/><circle cx="744.6" cy="337.7" r="0.7" fill="#5a1a8a"/>
<circle cx="749.9" cy="337.7" r="2.15" fill="#fc2a10"/><circle cx="749.9" cy="337.7" r="0.7" fill="#5a1a8a"/>
<circle cx="715.4" cy="301.9" r="2.15" fill="#fc2a10"/><circle cx="715.4" cy="301.9" r="0.7" fill="#5a1a8a"/>
<circle cx="723.4" cy="307.2" r="2.15" fill="#fc2a10"/><circle cx="723.4" cy="307.2" r="0.7" fill="#5a1a8a"/>
<circle cx="692.9" cy="311.1" r="2.15" fill="#fc2a10"/><circle cx="692.9" cy="311.1" r="0.7" fill="#5a1a8a"/>
<circle cx="699.5" cy="309.8" r="2.15" fill="#fc2a10"/><circle cx="699.5" cy="309.8" r="0.7" fill="#5a1a8a"/>
<circle cx="715.4" cy="317.8" r="2.15" fill="#fc2a10"/><circle cx="715.4" cy="317.8" r="0.7" fill="#5a1a8a"/>
<circle cx="723.4" cy="320.4" r="2.15" fill="#fc2a10"/><circle cx="723.4" cy="320.4" r="0.7" fill="#5a1a8a"/>
<circle cx="698.2" cy="340.3" r="2.15" fill="#fc2a10"/><circle cx="698.2" cy="340.3" r="0.7" fill="#5a1a8a"/>
<circle cx="699.5" cy="349.6" r="2.15" fill="#fc2a10"/><circle cx="699.5" cy="349.6" r="0.7" fill="#5a1a8a"/>
<circle cx="728.7" cy="344.3" r="2.15" fill="#fc2a10"/><circle cx="728.7" cy="344.3" r="0.7" fill="#5a1a8a"/>
<circle cx="722.1" cy="349.6" r="2.15" fill="#fc2a10"/><circle cx="722.1" cy="349.6" r="0.7" fill="#5a1a8a"/>
<circle cx="736.7" cy="361.6" r="2.15" fill="#fc2a10"/><circle cx="736.7" cy="361.6" r="0.7" fill="#5a1a8a"/>
<circle cx="728.7" cy="362.9" r="2.15" fill="#fc2a10"/><circle cx="728.7" cy="362.9" r="0.7" fill="#5a1a8a"/>
<circle cx="744.6" cy="349.6" r="2.15" fill="#fc2a10"/><circle cx="744.6" cy="349.6" r="0.7" fill="#5a1a8a"/>
<circle cx="749.9" cy="349.6" r="2.15" fill="#fc2a10"/><circle cx="749.9" cy="349.6" r="0.7" fill="#5a1a8a"/>
<circle cx="744.6" cy="362.9" r="2.15" fill="#fc2a10"/><circle cx="744.6" cy="362.9" r="0.7" fill="#5a1a8a"/>
<circle cx="749.9" cy="362.9" r="2.15" fill="#fc2a10"/><circle cx="749.9" cy="362.9" r="0.7" fill="#5a1a8a"/>
<circle cx="756.6" cy="362.9" r="2.15" fill="#fc2a10"/><circle cx="756.6" cy="362.9" r="0.7" fill="#5a1a8a"/>
<circle cx="744.6" cy="378.8" r="2.15" fill="#fc2a10"/><circle cx="744.6" cy="378.8" r="0.7" fill="#5a1a8a"/>
<circle cx="749.9" cy="378.8" r="2.15" fill="#fc2a10"/><circle cx="749.9" cy="378.8" r="0.7" fill="#5a1a8a"/>
<circle cx="756.6" cy="378.8" r="2.15" fill="#fc2a10"/><circle cx="756.6" cy="378.8" r="0.7" fill="#5a1a8a"/>
<circle cx="744.6" cy="386.8" r="2.15" fill="#fc2a10"/><circle cx="744.6" cy="386.8" r="0.7" fill="#5a1a8a"/>
<circle cx="749.9" cy="386.8" r="2.15" fill="#fc2a10"/><circle cx="749.9" cy="386.8" r="0.7" fill="#5a1a8a"/>
<circle cx="756.6" cy="386.8" r="2.15" fill="#fc2a10"/><circle cx="756.6" cy="386.8" r="0.7" fill="#5a1a8a"/>
<circle cx="744.6" cy="394.8" r="2.15" fill="#fc2a10"/><circle cx="744.6" cy="394.8" r="0.7" fill="#5a1a8a"/>
<circle cx="749.9" cy="394.8" r="2.15" fill="#fc2a10"/><circle cx="749.9" cy="394.8" r="0.7" fill="#5a1a8a"/>
<circle cx="756.6" cy="394.8" r="2.15" fill="#fc2a10"/><circle cx="756.6" cy="394.8" r="0.7" fill="#5a1a8a"/>
<circle cx="744.6" cy="402.7" r="2.15" fill="#fc2a10"/><circle cx="744.6" cy="402.7" r="0.7" fill="#5a1a8a"/>
<circle cx="756.6" cy="402.7" r="2.15" fill="#fc2a10"/><circle cx="756.6" cy="402.7" r="0.7" fill="#5a1a8a"/>
<circle cx="723.4" cy="384.1" r="2.15" fill="#fc2a10"/><circle cx="723.4" cy="384.1" r="0.7" fill="#5a1a8a"/>
<circle cx="723.4" cy="392.1" r="2.15" fill="#fc2a10"/><circle cx="723.4" cy="392.1" r="0.7" fill="#5a1a8a"/>
<circle cx="723.4" cy="400.1" r="2.15" fill="#fc2a10"/><circle cx="723.4" cy="400.1" r="0.7" fill="#5a1a8a"/>
<circle cx="699.5" cy="381.5" r="2.15" fill="#fc2a10"/><circle cx="699.5" cy="381.5" r="0.7" fill="#5a1a8a"/>
<circle cx="704.8" cy="389.5" r="2.15" fill="#fc2a10"/><circle cx="704.8" cy="389.5" r="0.7" fill="#5a1a8a"/>
<circle cx="767.2" cy="381.5" r="2.15" fill="#fc2a10"/><circle cx="767.2" cy="381.5" r="0.7" fill="#5a1a8a"/>
<circle cx="775.2" cy="402.7" r="2.15" fill="#fc2a10"/><circle cx="775.2" cy="402.7" r="0.7" fill="#5a1a8a"/>
<circle cx="789.8" cy="414.7" r="2.15" fill="#fc2a10"/><circle cx="789.8" cy="414.7" r="0.7" fill="#5a1a8a"/>
<circle cx="779.1" cy="394.8" r="2.15" fill="#fc2a10"/><circle cx="779.1" cy="394.8" r="0.7" fill="#5a1a8a"/>
<circle cx="694.2" cy="408.0" r="2.15" fill="#fc2a10"/><circle cx="694.2" cy="408.0" r="0.7" fill="#5a1a8a"/>
<circle cx="710.1" cy="409.4" r="2.15" fill="#fc2a10"/><circle cx="710.1" cy="409.4" r="0.7" fill="#5a1a8a"/>
<circle cx="710.1" cy="414.7" r="2.15" fill="#fc2a10"/><circle cx="710.1" cy="414.7" r="0.7" fill="#5a1a8a"/>
<circle cx="715.4" cy="420.0" r="2.15" fill="#fc2a10"/><circle cx="715.4" cy="420.0" r="0.7" fill="#5a1a8a"/>
<circle cx="763.2" cy="296.5" r="2.15" fill="#fc2a10"/><circle cx="763.2" cy="296.5" r="0.7" fill="#5a1a8a"/>
<circle cx="767.2" cy="301.9" r="2.15" fill="#fc2a10"/><circle cx="767.2" cy="301.9" r="0.7" fill="#5a1a8a"/>
<circle cx="789.8" cy="296.5" r="2.15" fill="#fc2a10"/><circle cx="789.8" cy="296.5" r="0.7" fill="#5a1a8a"/><polyline points="538.6,147.6 529.4,157.0 529.4,229.0 534.0,234.0 600.0,234.0 618.0,252.0 618.0,284.0" fill="none" stroke="#e82008" stroke-width="1.1" stroke-linejoin="round" stroke-linecap="round"/>
<polyline points="540.9,149.8 532.6,158.3 532.6,227.8 535.4,230.8 601.3,230.8 621.2,250.7 621.2,284.0" fill="none" stroke="#e82008" stroke-width="1.1" stroke-linejoin="round" stroke-linecap="round"/>
<polyline points="543.2,152.1 535.8,159.6 535.8,226.5 536.8,227.6 602.7,227.6 624.4,249.3 624.4,284.0" fill="none" stroke="#e82008" stroke-width="1.1" stroke-linejoin="round" stroke-linecap="round"/>
<polyline points="545.5,154.3 539.0,160.9 539.0,225.3 538.2,224.4 604.0,224.4 627.6,248.0 627.6,284.0" fill="none" stroke="#e82008" stroke-width="1.1" stroke-linejoin="round" stroke-linecap="round"/>
<polyline points="557.7,147.6 548.7,157.0 548.7,166.0 539.0,176.0" fill="none" stroke="#e82008" stroke-width="1.1" stroke-linejoin="round" stroke-linecap="round"/>
<polyline points="557.7,166.6 545.0,178.0 542.6,181.0" fill="none" stroke="#e82008" stroke-width="1.1" stroke-linejoin="round" stroke-linecap="round"/>
<polyline points="538.6,166.6 535.8,172.0" fill="none" stroke="#e82008" stroke-width="1.1" stroke-linejoin="round" stroke-linecap="round"/>
<polyline points="551.0,181.0 581.0,211.0 600.0,211.0 640.0,251.0 640.0,284.0" fill="none" stroke="#e82008" stroke-width="1.1" stroke-linejoin="round" stroke-linecap="round"/>
<polyline points="554.0,178.0 582.7,206.8 601.7,206.8 644.2,249.3 644.2,284.0" fill="none" stroke="#e82008" stroke-width="1.1" stroke-linejoin="round" stroke-linecap="round"/>
<polyline points="556.9,175.1 584.5,202.6 603.5,202.6 648.4,247.5 648.4,284.0" fill="none" stroke="#e82008" stroke-width="1.1" stroke-linejoin="round" stroke-linecap="round"/>
<polyline points="571.0,181.0 574.0,184.0 593.0,184.0 660.0,251.0 660.0,284.0" fill="none" stroke="#e82008" stroke-width="1.1" stroke-linejoin="round" stroke-linecap="round"/>
<polyline points="542.0,215.0 605.0,215.0 612.0,222.0" fill="none" stroke="#e82008" stroke-width="1.1" stroke-linejoin="round" stroke-linecap="round"/>
<polyline points="542.0,218.5 600.0,218.5" fill="none" stroke="#e82008" stroke-width="1.0" stroke-linejoin="round" stroke-linecap="round"/>
<polyline points="633.6,211.0 652.5,211.0" fill="none" stroke="#e82008" stroke-width="1.2" stroke-linejoin="round" stroke-linecap="round"/>
<circle cx="643.0" cy="181.0" r="2.15" fill="#fc2a10"/><circle cx="643.0" cy="181.0" r="0.7" fill="#5a1a8a"/>
<circle cx="662.0" cy="181.0" r="2.15" fill="#fc2a10"/><circle cx="662.0" cy="181.0" r="0.7" fill="#5a1a8a"/>
<circle cx="671.6" cy="181.0" r="2.15" fill="#fc2a10"/><circle cx="671.6" cy="181.0" r="0.7" fill="#5a1a8a"/>
<circle cx="718.6" cy="181.0" r="2.15" fill="#fc2a10"/><circle cx="718.6" cy="181.0" r="0.7" fill="#5a1a8a"/>
<circle cx="726.0" cy="181.0" r="2.15" fill="#fc2a10"/><circle cx="726.0" cy="181.0" r="0.7" fill="#5a1a8a"/>
<circle cx="733.0" cy="181.0" r="2.15" fill="#fc2a10"/><circle cx="733.0" cy="181.0" r="0.7" fill="#5a1a8a"/>
<circle cx="740.0" cy="181.0" r="2.15" fill="#fc2a10"/><circle cx="740.0" cy="181.0" r="0.7" fill="#5a1a8a"/>
<circle cx="747.0" cy="181.0" r="2.15" fill="#fc2a10"/><circle cx="747.0" cy="181.0" r="0.7" fill="#5a1a8a"/>
<circle cx="754.0" cy="181.0" r="2.15" fill="#fc2a10"/><circle cx="754.0" cy="181.0" r="0.7" fill="#5a1a8a"/>
<circle cx="761.7" cy="181.0" r="2.15" fill="#fc2a10"/><circle cx="761.7" cy="181.0" r="0.7" fill="#5a1a8a"/>
<circle cx="769.0" cy="181.0" r="2.15" fill="#fc2a10"/><circle cx="769.0" cy="181.0" r="0.7" fill="#5a1a8a"/>
<circle cx="775.7" cy="181.0" r="2.15" fill="#fc2a10"/><circle cx="775.7" cy="181.0" r="0.7" fill="#5a1a8a"/>
<circle cx="782.6" cy="181.0" r="2.15" fill="#fc2a10"/><circle cx="782.6" cy="181.0" r="0.7" fill="#5a1a8a"/>
<circle cx="790.0" cy="181.0" r="2.15" fill="#fc2a10"/><circle cx="790.0" cy="181.0" r="0.7" fill="#5a1a8a"/>
<circle cx="797.4" cy="181.0" r="2.15" fill="#fc2a10"/><circle cx="797.4" cy="181.0" r="0.7" fill="#5a1a8a"/>
<circle cx="804.5" cy="181.0" r="2.15" fill="#fc2a10"/><circle cx="804.5" cy="181.0" r="0.7" fill="#5a1a8a"/>
<circle cx="811.3" cy="181.0" r="2.15" fill="#fc2a10"/><circle cx="811.3" cy="181.0" r="0.7" fill="#5a1a8a"/>
<circle cx="818.5" cy="181.0" r="2.15" fill="#fc2a10"/><circle cx="818.5" cy="181.0" r="0.7" fill="#5a1a8a"/>
<circle cx="825.7" cy="181.0" r="2.15" fill="#fc2a10"/><circle cx="825.7" cy="181.0" r="0.7" fill="#5a1a8a"/>
<circle cx="833.0" cy="181.0" r="2.15" fill="#fc2a10"/><circle cx="833.0" cy="181.0" r="0.7" fill="#5a1a8a"/>
<circle cx="839.7" cy="181.0" r="2.15" fill="#fc2a10"/><circle cx="839.7" cy="181.0" r="0.7" fill="#5a1a8a"/>
<circle cx="633.6" cy="200.0" r="2.15" fill="#fc2a10"/><circle cx="633.6" cy="200.0" r="0.7" fill="#5a1a8a"/>
<circle cx="643.0" cy="200.0" r="2.15" fill="#fc2a10"/><circle cx="643.0" cy="200.0" r="0.7" fill="#5a1a8a"/>
<circle cx="652.5" cy="200.0" r="2.15" fill="#fc2a10"/><circle cx="652.5" cy="200.0" r="0.7" fill="#5a1a8a"/>
<circle cx="662.0" cy="200.0" r="2.15" fill="#fc2a10"/><circle cx="662.0" cy="200.0" r="0.7" fill="#5a1a8a"/>
<circle cx="671.6" cy="200.0" r="2.15" fill="#fc2a10"/><circle cx="671.6" cy="200.0" r="0.7" fill="#5a1a8a"/>
<circle cx="681.5" cy="200.0" r="2.15" fill="#fc2a10"/><circle cx="681.5" cy="200.0" r="0.7" fill="#5a1a8a"/>
<circle cx="691.0" cy="200.0" r="2.15" fill="#fc2a10"/><circle cx="691.0" cy="200.0" r="0.7" fill="#5a1a8a"/>
<circle cx="709.5" cy="200.0" r="2.15" fill="#fc2a10"/><circle cx="709.5" cy="200.0" r="0.7" fill="#5a1a8a"/>
<circle cx="718.5" cy="200.0" r="2.15" fill="#fc2a10"/><circle cx="718.5" cy="200.0" r="0.7" fill="#5a1a8a"/>
<circle cx="726.0" cy="200.0" r="2.15" fill="#fc2a10"/><circle cx="726.0" cy="200.0" r="0.7" fill="#5a1a8a"/>
<circle cx="733.0" cy="200.0" r="2.15" fill="#fc2a10"/><circle cx="733.0" cy="200.0" r="0.7" fill="#5a1a8a"/>
<circle cx="740.0" cy="200.0" r="2.15" fill="#fc2a10"/><circle cx="740.0" cy="200.0" r="0.7" fill="#5a1a8a"/>
<circle cx="747.2" cy="200.0" r="2.15" fill="#fc2a10"/><circle cx="747.2" cy="200.0" r="0.7" fill="#5a1a8a"/>
<circle cx="811.0" cy="200.0" r="2.15" fill="#fc2a10"/><circle cx="811.0" cy="200.0" r="0.7" fill="#5a1a8a"/>
<circle cx="818.5" cy="200.0" r="2.15" fill="#fc2a10"/><circle cx="818.5" cy="200.0" r="0.7" fill="#5a1a8a"/>
<circle cx="825.7" cy="200.0" r="2.15" fill="#fc2a10"/><circle cx="825.7" cy="200.0" r="0.7" fill="#5a1a8a"/>
<circle cx="833.0" cy="200.0" r="2.15" fill="#fc2a10"/><circle cx="833.0" cy="200.0" r="0.7" fill="#5a1a8a"/>
<circle cx="839.7" cy="200.0" r="2.15" fill="#fc2a10"/><circle cx="839.7" cy="200.0" r="0.7" fill="#5a1a8a"/>
<circle cx="690.5" cy="196.0" r="2.15" fill="#fc2a10"/><circle cx="690.5" cy="196.0" r="0.7" fill="#5a1a8a"/>
<circle cx="676.0" cy="204.0" r="2.15" fill="#fc2a10"/><circle cx="676.0" cy="204.0" r="0.7" fill="#5a1a8a"/>
<circle cx="716.0" cy="207.5" r="2.15" fill="#fc2a10"/><circle cx="716.0" cy="207.5" r="0.7" fill="#5a1a8a"/>
<circle cx="690.5" cy="222.5" r="2.15" fill="#fc2a10"/><circle cx="690.5" cy="222.5" r="0.7" fill="#5a1a8a"/>
<circle cx="700.0" cy="222.5" r="2.15" fill="#fc2a10"/><circle cx="700.0" cy="222.5" r="0.7" fill="#5a1a8a"/>
<circle cx="671.6" cy="230.0" r="2.15" fill="#fc2a10"/><circle cx="671.6" cy="230.0" r="0.7" fill="#5a1a8a"/>
<circle cx="690.5" cy="230.0" r="2.15" fill="#fc2a10"/><circle cx="690.5" cy="230.0" r="0.7" fill="#5a1a8a"/>
<circle cx="700.0" cy="230.0" r="2.15" fill="#fc2a10"/><circle cx="700.0" cy="230.0" r="0.7" fill="#5a1a8a"/>
<circle cx="755.9" cy="204.0" r="2.15" fill="#fc2a10"/><circle cx="755.9" cy="204.0" r="0.7" fill="#5a1a8a"/>
<circle cx="760.8" cy="204.0" r="2.15" fill="#fc2a10"/><circle cx="760.8" cy="204.0" r="0.7" fill="#5a1a8a"/>
<circle cx="765.5" cy="204.0" r="2.15" fill="#fc2a10"/><circle cx="765.5" cy="204.0" r="0.7" fill="#5a1a8a"/>
<circle cx="770.0" cy="204.0" r="2.15" fill="#fc2a10"/><circle cx="770.0" cy="204.0" r="0.7" fill="#5a1a8a"/>
<circle cx="774.8" cy="204.0" r="2.15" fill="#fc2a10"/><circle cx="774.8" cy="204.0" r="0.7" fill="#5a1a8a"/>
<circle cx="779.5" cy="204.0" r="2.15" fill="#fc2a10"/><circle cx="779.5" cy="204.0" r="0.7" fill="#5a1a8a"/>
<circle cx="786.3" cy="204.0" r="2.15" fill="#fc2a10"/><circle cx="786.3" cy="204.0" r="0.7" fill="#5a1a8a"/>
<circle cx="790.6" cy="204.0" r="2.15" fill="#fc2a10"/><circle cx="790.6" cy="204.0" r="0.7" fill="#5a1a8a"/>
<circle cx="795.5" cy="204.0" r="2.15" fill="#fc2a10"/><circle cx="795.5" cy="204.0" r="0.7" fill="#5a1a8a"/>
<circle cx="800.4" cy="204.0" r="2.15" fill="#fc2a10"/><circle cx="800.4" cy="204.0" r="0.7" fill="#5a1a8a"/>
<circle cx="809.0" cy="207.5" r="2.15" fill="#fc2a10"/><circle cx="809.0" cy="207.5" r="0.7" fill="#5a1a8a"/>
<circle cx="809.0" cy="214.0" r="2.15" fill="#fc2a10"/><circle cx="809.0" cy="214.0" r="0.7" fill="#5a1a8a"/>
<circle cx="809.0" cy="222.0" r="2.15" fill="#fc2a10"/><circle cx="809.0" cy="222.0" r="0.7" fill="#5a1a8a"/>
<circle cx="832.6" cy="207.5" r="2.15" fill="#fc2a10"/><circle cx="832.6" cy="207.5" r="0.7" fill="#5a1a8a"/>
<circle cx="854.4" cy="194.0" r="2.15" fill="#fc2a10"/><circle cx="854.4" cy="194.0" r="0.7" fill="#5a1a8a"/>
<circle cx="633.6" cy="211.0" r="2.15" fill="#fc2a10"/><circle cx="633.6" cy="211.0" r="0.7" fill="#5a1a8a"/>
<circle cx="652.5" cy="211.0" r="2.15" fill="#fc2a10"/><circle cx="652.5" cy="211.0" r="0.7" fill="#5a1a8a"/>
<circle cx="756.5" cy="228.6" r="2.15" fill="#fc2a10"/><circle cx="756.5" cy="228.6" r="0.7" fill="#5a1a8a"/>
<circle cx="756.5" cy="237.6" r="2.15" fill="#fc2a10"/><circle cx="756.5" cy="237.6" r="0.7" fill="#5a1a8a"/>
<circle cx="766.1" cy="228.6" r="2.15" fill="#fc2a10"/><circle cx="766.1" cy="228.6" r="0.7" fill="#5a1a8a"/>
<circle cx="766.1" cy="237.6" r="2.15" fill="#fc2a10"/><circle cx="766.1" cy="237.6" r="0.7" fill="#5a1a8a"/>
<circle cx="775.8" cy="228.6" r="2.15" fill="#fc2a10"/><circle cx="775.8" cy="228.6" r="0.7" fill="#5a1a8a"/>
<circle cx="775.8" cy="237.6" r="2.15" fill="#fc2a10"/><circle cx="775.8" cy="237.6" r="0.7" fill="#5a1a8a"/>
<circle cx="785.4" cy="228.6" r="2.15" fill="#fc2a10"/><circle cx="785.4" cy="228.6" r="0.7" fill="#5a1a8a"/>
<circle cx="785.4" cy="237.6" r="2.15" fill="#fc2a10"/><circle cx="785.4" cy="237.6" r="0.7" fill="#5a1a8a"/>
<circle cx="756.5" cy="247.3" r="2.15" fill="#fc2a10"/><circle cx="756.5" cy="247.3" r="0.7" fill="#5a1a8a"/>
<circle cx="756.5" cy="256.5" r="2.15" fill="#fc2a10"/><circle cx="756.5" cy="256.5" r="0.7" fill="#5a1a8a"/>
<circle cx="766.1" cy="247.3" r="2.15" fill="#fc2a10"/><circle cx="766.1" cy="247.3" r="0.7" fill="#5a1a8a"/>
<circle cx="766.1" cy="256.5" r="2.15" fill="#fc2a10"/><circle cx="766.1" cy="256.5" r="0.7" fill="#5a1a8a"/>
<circle cx="775.8" cy="247.3" r="2.15" fill="#fc2a10"/><circle cx="775.8" cy="247.3" r="0.7" fill="#5a1a8a"/>
<circle cx="775.8" cy="256.5" r="2.15" fill="#fc2a10"/><circle cx="775.8" cy="256.5" r="0.7" fill="#5a1a8a"/>
<circle cx="785.4" cy="247.3" r="2.15" fill="#fc2a10"/><circle cx="785.4" cy="247.3" r="0.7" fill="#5a1a8a"/>
<circle cx="785.4" cy="256.5" r="2.15" fill="#fc2a10"/><circle cx="785.4" cy="256.5" r="0.7" fill="#5a1a8a"/>
<polyline points="728.0,166.6 736.0,158.0 741.0,156.5 770.0,156.5 777.0,163.0 777.0,175.0 782.6,181.0" fill="none" stroke="#e82008" stroke-width="1.1" stroke-linejoin="round" stroke-linecap="round"/>
<polyline points="730.3,168.8 737.8,160.8 741.5,159.7 768.7,159.7 773.8,164.4 773.8,176.3 780.3,183.2" fill="none" stroke="#e82008" stroke-width="1.1" stroke-linejoin="round" stroke-linecap="round"/>
<polyline points="724.0,215.0 724.0,178.0 730.0,172.0 762.0,172.0 769.0,181.0" fill="none" stroke="#e82008" stroke-width="1.1" stroke-linejoin="round" stroke-linecap="round"/>
<polyline points="730.0,215.0 730.0,182.0 734.0,176.0 758.0,176.0 761.7,181.0" fill="none" stroke="#e82008" stroke-width="1.0" stroke-linejoin="round" stroke-linecap="round"/>
<polyline points="744.0,181.0 744.0,200.0 748.0,204.0 755.9,204.0" fill="none" stroke="#e82008" stroke-width="1.0" stroke-linejoin="round" stroke-linecap="round"/>
<polyline points="754.0,181.0 751.0,186.0 751.0,198.0 755.9,204.0" fill="none" stroke="#e82008" stroke-width="1.0" stroke-linejoin="round" stroke-linecap="round"/>
<polyline points="737.0,181.0 737.0,215.0 741.0,220.0" fill="none" stroke="#e82008" stroke-width="1.0" stroke-linejoin="round" stroke-linecap="round"/>
<polyline points="690.5,222.5 694.0,218.5 722.5,218.5 727.4,222.5 743.5,222.5 756.4,209.7 756.4,203.0" fill="none" stroke="#e82008" stroke-width="1.1" stroke-linejoin="round" stroke-linecap="round"/>
<polyline points="717.7,248.3 725.8,248.3 753.0,220.0 790.0,220.0 803.0,208.0 803.0,200.0 797.4,181.0" fill="none" stroke="#e82008" stroke-width="1.1" stroke-linejoin="round" stroke-linecap="round"/>
<polyline points="723.3,255.6 754.0,224.0 791.8,224.0 805.5,210.5 805.5,190.0 804.5,181.0" fill="none" stroke="#e82008" stroke-width="1.1" stroke-linejoin="round" stroke-linecap="round"/>
<polyline points="732.2,251.5 741.9,242.7 795.0,242.7 814.3,224.0 814.3,186.0 811.3,181.0" fill="none" stroke="#e82008" stroke-width="1.1" stroke-linejoin="round" stroke-linecap="round"/>
<polyline points="733.8,253.0 789.4,251.5 816.0,227.0 816.0,190.0 818.5,181.0" fill="none" stroke="#e82008" stroke-width="1.1" stroke-linejoin="round" stroke-linecap="round"/>
<polyline points="723.3,280.5 730.6,268.4 789.4,268.4 822.4,234.6 822.4,186.0 825.7,181.0" fill="none" stroke="#e82008" stroke-width="1.1" stroke-linejoin="round" stroke-linecap="round"/>
<polyline points="724.0,275.7 731.4,270.9 790.2,270.9 828.8,232.2 828.8,186.0 833.0,181.0" fill="none" stroke="#e82008" stroke-width="1.1" stroke-linejoin="round" stroke-linecap="round"/>
<polyline points="839.7,181.0 832.0,209.7 830.4,233.8 830.4,269.0 835.3,272.5" fill="none" stroke="#e82008" stroke-width="1.0" stroke-linejoin="round" stroke-linecap="round"/>
<polyline points="722.5,200.0 722.5,214.5 726.6,219.3" fill="none" stroke="#e82008" stroke-width="1.0" stroke-linejoin="round" stroke-linecap="round"/>
<polyline points="729.0,200.0 729.0,209.7 733.0,212.9" fill="none" stroke="#e82008" stroke-width="1.0" stroke-linejoin="round" stroke-linecap="round"/>
<polyline points="745.0,204.0 783.7,204.0 783.7,210.0 775.0,219.0" fill="none" stroke="#e82008" stroke-width="1.0" stroke-linejoin="round" stroke-linecap="round"/>
<polyline points="700.0,283.7 756.4,283.7 774.0,300.0 780.0,306.0" fill="none" stroke="#e82008" stroke-width="1.1" stroke-linejoin="round" stroke-linecap="round"/>
<polyline points="700.0,281.1 757.4,281.1 775.8,298.1 781.8,304.2" fill="none" stroke="#e82008" stroke-width="1.1" stroke-linejoin="round" stroke-linecap="round"/>
<polyline points="700.0,278.5 758.4,278.5 777.6,296.3 783.7,302.3" fill="none" stroke="#e82008" stroke-width="1.1" stroke-linejoin="round" stroke-linecap="round"/>
<polyline points="700.0,275.9 759.5,275.9 779.4,294.4 785.5,300.5" fill="none" stroke="#e82008" stroke-width="1.1" stroke-linejoin="round" stroke-linecap="round"/>
<circle cx="716.0" cy="207.7" r="2.15" fill="#fc2a10"/><circle cx="716.0" cy="207.7" r="0.7" fill="#5a1a8a"/>
<circle cx="727.4" cy="212.0" r="2.15" fill="#fc2a10"/><circle cx="727.4" cy="212.0" r="0.7" fill="#5a1a8a"/>
<circle cx="733.0" cy="212.0" r="2.15" fill="#fc2a10"/><circle cx="733.0" cy="212.0" r="0.7" fill="#5a1a8a"/>
<circle cx="727.4" cy="225.8" r="2.15" fill="#fc2a10"/><circle cx="727.4" cy="225.8" r="0.7" fill="#5a1a8a"/>
<circle cx="733.0" cy="229.3" r="2.15" fill="#fc2a10"/><circle cx="733.0" cy="229.3" r="0.7" fill="#5a1a8a"/>
<circle cx="727.4" cy="237.7" r="2.15" fill="#fc2a10"/><circle cx="727.4" cy="237.7" r="0.7" fill="#5a1a8a"/>
<circle cx="719.3" cy="249.0" r="2.15" fill="#fc2a10"/><circle cx="719.3" cy="249.0" r="0.7" fill="#5a1a8a"/>
<circle cx="733.0" cy="251.1" r="2.15" fill="#fc2a10"/><circle cx="733.0" cy="251.1" r="0.7" fill="#5a1a8a"/>
<circle cx="733.0" cy="256.0" r="2.15" fill="#fc2a10"/><circle cx="733.0" cy="256.0" r="0.7" fill="#5a1a8a"/>
<circle cx="723.3" cy="256.8" r="2.15" fill="#fc2a10"/><circle cx="723.3" cy="256.8" r="0.7" fill="#5a1a8a"/>
<circle cx="723.3" cy="262.4" r="2.15" fill="#fc2a10"/><circle cx="723.3" cy="262.4" r="0.7" fill="#5a1a8a"/>
<circle cx="733.0" cy="262.4" r="2.15" fill="#fc2a10"/><circle cx="733.0" cy="262.4" r="0.7" fill="#5a1a8a"/>
<circle cx="703.6" cy="256.8" r="2.15" fill="#fc2a10"/><circle cx="703.6" cy="256.8" r="0.7" fill="#5a1a8a"/>
<circle cx="703.6" cy="262.4" r="2.15" fill="#fc2a10"/><circle cx="703.6" cy="262.4" r="0.7" fill="#5a1a8a"/>
<circle cx="703.6" cy="270.9" r="2.15" fill="#fc2a10"/><circle cx="703.6" cy="270.9" r="0.7" fill="#5a1a8a"/>
<circle cx="703.6" cy="275.7" r="2.15" fill="#fc2a10"/><circle cx="703.6" cy="275.7" r="0.7" fill="#5a1a8a"/>
<circle cx="723.3" cy="275.7" r="2.15" fill="#fc2a10"/><circle cx="723.3" cy="275.7" r="0.7" fill="#5a1a8a"/>
<circle cx="733.0" cy="275.7" r="2.15" fill="#fc2a10"/><circle cx="733.0" cy="275.7" r="0.7" fill="#5a1a8a"/>
<circle cx="723.3" cy="281.0" r="2.15" fill="#fc2a10"/><circle cx="723.3" cy="281.0" r="0.7" fill="#5a1a8a"/>
<circle cx="748.0" cy="281.4" r="2.15" fill="#fc2a10"/><circle cx="748.0" cy="281.4" r="0.7" fill="#5a1a8a"/>
<circle cx="752.5" cy="281.4" r="2.15" fill="#fc2a10"/><circle cx="752.5" cy="281.4" r="0.7" fill="#5a1a8a"/>
<circle cx="757.0" cy="281.4" r="2.15" fill="#fc2a10"/><circle cx="757.0" cy="281.4" r="0.7" fill="#5a1a8a"/>
<circle cx="762.0" cy="281.4" r="2.15" fill="#fc2a10"/><circle cx="762.0" cy="281.4" r="0.7" fill="#5a1a8a"/>
<circle cx="766.6" cy="281.4" r="2.15" fill="#fc2a10"/><circle cx="766.6" cy="281.4" r="0.7" fill="#5a1a8a"/>
<circle cx="771.2" cy="281.4" r="2.15" fill="#fc2a10"/><circle cx="771.2" cy="281.4" r="0.7" fill="#5a1a8a"/>
<circle cx="776.0" cy="281.4" r="2.15" fill="#fc2a10"/><circle cx="776.0" cy="281.4" r="0.7" fill="#5a1a8a"/>
<circle cx="781.6" cy="281.4" r="2.15" fill="#fc2a10"/><circle cx="781.6" cy="281.4" r="0.7" fill="#5a1a8a"/>
<circle cx="809.0" cy="241.7" r="2.15" fill="#fc2a10"/><circle cx="809.0" cy="241.7" r="0.7" fill="#5a1a8a"/>
<circle cx="809.0" cy="260.5" r="2.15" fill="#fc2a10"/><circle cx="809.0" cy="260.5" r="0.7" fill="#5a1a8a"/>
<circle cx="809.0" cy="266.0" r="2.15" fill="#fc2a10"/><circle cx="809.0" cy="266.0" r="0.7" fill="#5a1a8a"/>
<circle cx="809.0" cy="281.4" r="2.15" fill="#fc2a10"/><circle cx="809.0" cy="281.4" r="0.7" fill="#5a1a8a"/>
<circle cx="825.0" cy="207.0" r="2.15" fill="#fc2a10"/><circle cx="825.0" cy="207.0" r="0.7" fill="#5a1a8a"/>
<circle cx="825.4" cy="238.7" r="2.15" fill="#fc2a10"/><circle cx="825.4" cy="238.7" r="0.7" fill="#5a1a8a"/>
<circle cx="825.4" cy="244.5" r="2.15" fill="#fc2a10"/><circle cx="825.4" cy="244.5" r="0.7" fill="#5a1a8a"/>
<circle cx="825.4" cy="249.4" r="2.15" fill="#fc2a10"/><circle cx="825.4" cy="249.4" r="0.7" fill="#5a1a8a"/>
<circle cx="825.4" cy="272.4" r="2.15" fill="#fc2a10"/><circle cx="825.4" cy="272.4" r="0.7" fill="#5a1a8a"/>
<circle cx="825.4" cy="280.5" r="2.15" fill="#fc2a10"/><circle cx="825.4" cy="280.5" r="0.7" fill="#5a1a8a"/>
<circle cx="846.5" cy="250.0" r="2.15" fill="#fc2a10"/><circle cx="846.5" cy="250.0" r="0.7" fill="#5a1a8a"/>
<circle cx="846.5" cy="256.0" r="2.15" fill="#fc2a10"/><circle cx="846.5" cy="256.0" r="0.7" fill="#5a1a8a"/>
<circle cx="846.5" cy="272.4" r="2.15" fill="#fc2a10"/><circle cx="846.5" cy="272.4" r="0.7" fill="#5a1a8a"/>
<circle cx="846.5" cy="278.0" r="2.15" fill="#fc2a10"/><circle cx="846.5" cy="278.0" r="0.7" fill="#5a1a8a"/>
<circle cx="790.0" cy="297.0" r="2.15" fill="#fc2a10"/><circle cx="790.0" cy="297.0" r="0.7" fill="#5a1a8a"/>
<circle cx="818.0" cy="297.0" r="2.15" fill="#fc2a10"/><circle cx="818.0" cy="297.0" r="0.7" fill="#5a1a8a"/>
<circle cx="700.0" cy="230.5" r="2.15" fill="#fc2a10"/><circle cx="700.0" cy="230.5" r="0.7" fill="#5a1a8a"/>
<circle cx="700.0" cy="238.6" r="2.15" fill="#fc2a10"/><circle cx="700.0" cy="238.6" r="0.7" fill="#5a1a8a"/>
<polyline points="612.0,258.0 612.0,284.0" fill="none" stroke="#e82008" stroke-width="1.0" stroke-linejoin="round" stroke-linecap="round"/>
<polyline points="616.2,256.0 616.2,284.0" fill="none" stroke="#e82008" stroke-width="1.0" stroke-linejoin="round" stroke-linecap="round"/>
<polyline points="620.4,254.0 620.4,284.0" fill="none" stroke="#e82008" stroke-width="1.0" stroke-linejoin="round" stroke-linecap="round"/>
<polyline points="624.6,252.0 624.6,284.0" fill="none" stroke="#e82008" stroke-width="1.0" stroke-linejoin="round" stroke-linecap="round"/>
<polyline points="628.8,250.0 628.8,284.0" fill="none" stroke="#e82008" stroke-width="1.0" stroke-linejoin="round" stroke-linecap="round"/>
<polyline points="633.0,248.0 633.0,284.0" fill="none" stroke="#e82008" stroke-width="1.0" stroke-linejoin="round" stroke-linecap="round"/>
<polyline points="603.0,214.0 650.0,261.0 650.0,284.0" fill="none" stroke="#e82008" stroke-width="1.0" stroke-linejoin="round" stroke-linecap="round"/>
<polyline points="605.5,211.5 653.5,259.6 653.5,284.0" fill="none" stroke="#e82008" stroke-width="1.0" stroke-linejoin="round" stroke-linecap="round"/>
<polyline points="607.9,209.1 657.0,258.1 657.0,284.0" fill="none" stroke="#e82008" stroke-width="1.0" stroke-linejoin="round" stroke-linecap="round"/>
<polyline points="673.0,245.0 673.0,284.0" fill="none" stroke="#e82008" stroke-width="1.0" stroke-linejoin="round" stroke-linecap="round"/>
<polyline points="681.0,245.0 681.0,284.0" fill="none" stroke="#e82008" stroke-width="1.0" stroke-linejoin="round" stroke-linecap="round"/>
<polyline points="688.0,245.0 688.0,284.0" fill="none" stroke="#e82008" stroke-width="1.0" stroke-linejoin="round" stroke-linecap="round"/>
<circle cx="686.0" cy="247.0" r="2.15" fill="#fc2a10"/><circle cx="686.0" cy="247.0" r="0.7" fill="#5a1a8a"/>
<circle cx="700.0" cy="247.0" r="2.15" fill="#fc2a10"/><circle cx="700.0" cy="247.0" r="0.7" fill="#5a1a8a"/>
<circle cx="662.0" cy="270.0" r="2.15" fill="#fc2a10"/><circle cx="662.0" cy="270.0" r="0.7" fill="#5a1a8a"/>
<circle cx="690.0" cy="282.0" r="2.15" fill="#fc2a10"/><circle cx="690.0" cy="282.0" r="0.7" fill="#5a1a8a"/><path d="M345,138.4 L850,138.4 A87,80 0 0 1 936.7,218 L936.7,448 A87,87 0 0 1 850,535.5 L340,535.5 A40,40 0 0 1 301.7,495 L301.7,181 A43,43 0 0 1 345,138.4 Z" fill="none" stroke="#b01008" stroke-width="1"/>
<path d="M301.7,181 A43,43 0 0 1 345,138.4" fill="none" stroke="#6018a0" stroke-width="0.8"/>
<path d="M850,138.4 A87,80 0 0 1 936.7,218 L936.7,448 A87,87 0 0 1 850,535.5" fill="none" stroke="#3a18b0" stroke-width="0.8"/>
<path d="M301.7,495 A40,40 0 0 0 340,535.5" fill="none" stroke="#6018a0" stroke-width="0.8"/>
<g stroke="#7a20a0" stroke-width="0.7" fill="none"><path d="M294,535.5 H312 M298.5,526 V553"/><path d="M299,530.5 h3 q2,0 2,2.3 q0,2.2 -2,2.2 h-3 z M299,535 h3.5 q2.3,0 2.3,2.5 q0,2.5 -2.3,2.5 h-3.5 z"/><path d="M304,527 a9,9 0 0 1 0,18"/></g>
<polygon points="436.0,476.6 510.0,476.6 528.0,494.7 746.0,494.7 746.0,520.5 436.0,520.5" fill="#fc2a10" stroke="#fc2a10" stroke-width="4" stroke-linejoin="round"/>
<circle cx="444.2" cy="507.6" r="6.4" fill="none" stroke="#200000" stroke-width="1"/>
<circle cx="463.1" cy="507.6" r="6.4" fill="none" stroke="#200000" stroke-width="1"/>
<circle cx="482.1" cy="507.6" r="6.4" fill="none" stroke="#200000" stroke-width="1"/>
<circle cx="501.0" cy="507.6" r="6.4" fill="none" stroke="#200000" stroke-width="1"/>
<circle cx="520.0" cy="507.6" r="6.4" fill="none" stroke="#200000" stroke-width="1"/>
<circle cx="538.9" cy="507.6" r="6.4" fill="none" stroke="#200000" stroke-width="1"/>
<circle cx="557.8" cy="507.6" r="6.4" fill="none" stroke="#200000" stroke-width="1"/>
<circle cx="576.8" cy="507.6" r="6.4" fill="none" stroke="#200000" stroke-width="1"/>
<circle cx="595.7" cy="507.6" r="6.4" fill="none" stroke="#200000" stroke-width="1"/>
<circle cx="614.7" cy="507.6" r="6.4" fill="none" stroke="#200000" stroke-width="1"/>
<circle cx="633.6" cy="507.6" r="6.4" fill="none" stroke="#200000" stroke-width="1"/>
<circle cx="652.5" cy="507.6" r="6.4" fill="none" stroke="#200000" stroke-width="1"/>
<circle cx="671.5" cy="507.6" r="6.4" fill="none" stroke="#200000" stroke-width="1"/>
<circle cx="690.4" cy="507.6" r="6.4" fill="none" stroke="#200000" stroke-width="1"/>
<circle cx="709.4" cy="507.6" r="6.4" fill="none" stroke="#200000" stroke-width="1"/>
<circle cx="728.3" cy="507.6" r="6.4" fill="none" stroke="#200000" stroke-width="1"/>
<circle cx="444.2" cy="147.6" r="5.4" fill="#fc2a10"/><circle cx="444.2" cy="147.6" r="2.8" fill="#1414a6"/>
<rect x="438.9" y="161.3" width="10.5" height="10.5" fill="#fc2a10"/><circle cx="444.2" cy="166.6" r="2.8" fill="#1414a6"/>
<circle cx="444.2" cy="507.6" r="5.4" fill="#fc2a10"/><circle cx="444.2" cy="507.6" r="2.8" fill="#1414a6"/>
<rect x="438.9" y="521.5" width="10.5" height="10.5" fill="#fc2a10"/><circle cx="444.2" cy="526.8" r="2.8" fill="#1414a6"/>
<circle cx="463.1" cy="147.6" r="5.4" fill="#fc2a10"/><circle cx="463.1" cy="147.6" r="2.8" fill="#1414a6"/>
<circle cx="463.1" cy="166.6" r="5.4" fill="#fc2a10"/><circle cx="463.1" cy="166.6" r="2.8" fill="#1414a6"/>
<circle cx="463.1" cy="507.6" r="5.4" fill="#fc2a10"/><circle cx="463.1" cy="507.6" r="2.8" fill="#1414a6"/>
<circle cx="463.1" cy="526.8" r="5.4" fill="#fc2a10"/><circle cx="463.1" cy="526.8" r="2.8" fill="#1414a6"/>
<circle cx="482.1" cy="147.6" r="5.4" fill="#fc2a10"/><circle cx="482.1" cy="147.6" r="2.8" fill="#1414a6"/>
<circle cx="482.1" cy="166.6" r="5.4" fill="#fc2a10"/><circle cx="482.1" cy="166.6" r="2.8" fill="#1414a6"/>
<circle cx="482.1" cy="507.6" r="5.4" fill="#fc2a10"/><circle cx="482.1" cy="507.6" r="2.8" fill="#1414a6"/>
<circle cx="482.1" cy="526.8" r="5.4" fill="#fc2a10"/><circle cx="482.1" cy="526.8" r="2.8" fill="#1414a6"/>
<circle cx="501.0" cy="147.6" r="5.4" fill="#fc2a10"/><circle cx="501.0" cy="147.6" r="2.8" fill="#1414a6"/>
<circle cx="501.0" cy="166.6" r="5.4" fill="#fc2a10"/><circle cx="501.0" cy="166.6" r="2.8" fill="#1414a6"/>
<circle cx="501.0" cy="507.6" r="5.4" fill="#fc2a10"/><circle cx="501.0" cy="507.6" r="2.8" fill="#1414a6"/>
<circle cx="501.0" cy="526.8" r="5.4" fill="#fc2a10"/><circle cx="501.0" cy="526.8" r="2.8" fill="#1414a6"/>
<circle cx="520.0" cy="147.6" r="5.4" fill="#fc2a10"/><circle cx="520.0" cy="147.6" r="2.8" fill="#1414a6"/>
<circle cx="520.0" cy="166.6" r="5.4" fill="#fc2a10"/><circle cx="520.0" cy="166.6" r="2.8" fill="#1414a6"/>
<circle cx="520.0" cy="507.6" r="5.4" fill="#fc2a10"/><circle cx="520.0" cy="507.6" r="2.8" fill="#1414a6"/>
<circle cx="520.0" cy="526.8" r="5.4" fill="#fc2a10"/><circle cx="520.0" cy="526.8" r="2.8" fill="#1414a6"/>
<circle cx="538.9" cy="147.6" r="5.4" fill="#fc2a10"/><circle cx="538.9" cy="147.6" r="2.8" fill="#1414a6"/>
<circle cx="538.9" cy="166.6" r="5.4" fill="#fc2a10"/><circle cx="538.9" cy="166.6" r="2.8" fill="#1414a6"/>
<circle cx="538.9" cy="507.6" r="5.4" fill="#fc2a10"/><circle cx="538.9" cy="507.6" r="2.8" fill="#1414a6"/>
<circle cx="538.9" cy="526.8" r="5.4" fill="#fc2a10"/><circle cx="538.9" cy="526.8" r="2.8" fill="#1414a6"/>
<circle cx="557.8" cy="147.6" r="5.4" fill="#fc2a10"/><circle cx="557.8" cy="147.6" r="2.8" fill="#1414a6"/>
<circle cx="557.8" cy="166.6" r="5.4" fill="#fc2a10"/><circle cx="557.8" cy="166.6" r="2.8" fill="#1414a6"/>
<circle cx="557.8" cy="507.6" r="5.4" fill="#fc2a10"/><circle cx="557.8" cy="507.6" r="2.8" fill="#1414a6"/>
<circle cx="557.8" cy="526.8" r="5.4" fill="#fc2a10"/><circle cx="557.8" cy="526.8" r="2.8" fill="#1414a6"/>
<circle cx="576.8" cy="147.6" r="5.4" fill="#fc2a10"/><circle cx="576.8" cy="147.6" r="2.8" fill="#1414a6"/>
<circle cx="576.8" cy="166.6" r="5.4" fill="#fc2a10"/><circle cx="576.8" cy="166.6" r="2.8" fill="#1414a6"/>
<circle cx="576.8" cy="507.6" r="5.4" fill="#fc2a10"/><circle cx="576.8" cy="507.6" r="2.8" fill="#1414a6"/>
<circle cx="576.8" cy="526.8" r="5.4" fill="#fc2a10"/><circle cx="576.8" cy="526.8" r="2.8" fill="#1414a6"/>
<circle cx="595.7" cy="147.6" r="5.4" fill="#fc2a10"/><circle cx="595.7" cy="147.6" r="2.8" fill="#1414a6"/>
<circle cx="595.7" cy="166.6" r="5.4" fill="#fc2a10"/><circle cx="595.7" cy="166.6" r="2.8" fill="#1414a6"/>
<circle cx="595.7" cy="507.6" r="5.4" fill="#fc2a10"/><circle cx="595.7" cy="507.6" r="2.8" fill="#1414a6"/>
<circle cx="595.7" cy="526.8" r="5.4" fill="#fc2a10"/><circle cx="595.7" cy="526.8" r="2.8" fill="#1414a6"/>
<circle cx="614.7" cy="147.6" r="5.4" fill="#fc2a10"/><circle cx="614.7" cy="147.6" r="2.8" fill="#1414a6"/>
<circle cx="614.7" cy="166.6" r="5.4" fill="#fc2a10"/><circle cx="614.7" cy="166.6" r="2.8" fill="#1414a6"/>
<circle cx="614.7" cy="507.6" r="5.4" fill="#fc2a10"/><circle cx="614.7" cy="507.6" r="2.8" fill="#1414a6"/>
<circle cx="614.7" cy="526.8" r="5.4" fill="#fc2a10"/><circle cx="614.7" cy="526.8" r="2.8" fill="#1414a6"/>
<circle cx="633.6" cy="147.6" r="5.4" fill="#fc2a10"/><circle cx="633.6" cy="147.6" r="2.8" fill="#1414a6"/>
<circle cx="633.6" cy="166.6" r="5.4" fill="#fc2a10"/><circle cx="633.6" cy="166.6" r="2.8" fill="#1414a6"/>
<circle cx="633.6" cy="507.6" r="5.4" fill="#fc2a10"/><circle cx="633.6" cy="507.6" r="2.8" fill="#1414a6"/>
<circle cx="633.6" cy="526.8" r="5.4" fill="#fc2a10"/><circle cx="633.6" cy="526.8" r="2.8" fill="#1414a6"/>
<circle cx="652.5" cy="147.6" r="5.4" fill="#fc2a10"/><circle cx="652.5" cy="147.6" r="2.8" fill="#1414a6"/>
<circle cx="652.5" cy="166.6" r="5.4" fill="#fc2a10"/><circle cx="652.5" cy="166.6" r="2.8" fill="#1414a6"/>
<circle cx="652.5" cy="507.6" r="5.4" fill="#fc2a10"/><circle cx="652.5" cy="507.6" r="2.8" fill="#1414a6"/>
<circle cx="652.5" cy="526.8" r="5.4" fill="#fc2a10"/><circle cx="652.5" cy="526.8" r="2.8" fill="#1414a6"/>
<circle cx="671.5" cy="147.6" r="5.4" fill="#fc2a10"/><circle cx="671.5" cy="147.6" r="2.8" fill="#1414a6"/>
<circle cx="671.5" cy="166.6" r="5.4" fill="#fc2a10"/><circle cx="671.5" cy="166.6" r="2.8" fill="#1414a6"/>
<circle cx="671.5" cy="507.6" r="5.4" fill="#fc2a10"/><circle cx="671.5" cy="507.6" r="2.8" fill="#1414a6"/>
<circle cx="671.5" cy="526.8" r="5.4" fill="#fc2a10"/><circle cx="671.5" cy="526.8" r="2.8" fill="#1414a6"/>
<circle cx="690.4" cy="147.6" r="5.4" fill="#fc2a10"/><circle cx="690.4" cy="147.6" r="2.8" fill="#1414a6"/>
<circle cx="690.4" cy="166.6" r="5.4" fill="#fc2a10"/><circle cx="690.4" cy="166.6" r="2.8" fill="#1414a6"/>
<circle cx="690.4" cy="507.6" r="5.4" fill="#fc2a10"/><circle cx="690.4" cy="507.6" r="2.8" fill="#1414a6"/>
<circle cx="690.4" cy="526.8" r="5.4" fill="#fc2a10"/><circle cx="690.4" cy="526.8" r="2.8" fill="#1414a6"/>
<circle cx="709.4" cy="147.6" r="5.4" fill="#fc2a10"/><circle cx="709.4" cy="147.6" r="2.8" fill="#1414a6"/>
<circle cx="709.4" cy="166.6" r="5.4" fill="#fc2a10"/><circle cx="709.4" cy="166.6" r="2.8" fill="#1414a6"/>
<circle cx="709.4" cy="507.6" r="5.4" fill="#fc2a10"/><circle cx="709.4" cy="507.6" r="2.8" fill="#1414a6"/>
<circle cx="709.4" cy="526.8" r="5.4" fill="#fc2a10"/><circle cx="709.4" cy="526.8" r="2.8" fill="#1414a6"/>
<circle cx="728.3" cy="147.6" r="5.4" fill="#fc2a10"/><circle cx="728.3" cy="147.6" r="2.8" fill="#1414a6"/>
<circle cx="728.3" cy="166.6" r="5.4" fill="#fc2a10"/><circle cx="728.3" cy="166.6" r="2.8" fill="#1414a6"/>
<circle cx="728.3" cy="507.6" r="5.4" fill="#fc2a10"/><circle cx="728.3" cy="507.6" r="2.8" fill="#1414a6"/>
<circle cx="728.3" cy="526.8" r="5.4" fill="#fc2a10"/><circle cx="728.3" cy="526.8" r="2.8" fill="#1414a6"/>
<circle cx="747.2" cy="147.6" r="5.4" fill="#fc2a10"/><circle cx="747.2" cy="147.6" r="2.8" fill="#1414a6"/>
<circle cx="747.2" cy="166.6" r="5.4" fill="#fc2a10"/><circle cx="747.2" cy="166.6" r="2.8" fill="#1414a6"/>
<circle cx="747.2" cy="507.6" r="5.4" fill="#fc2a10"/><circle cx="747.2" cy="507.6" r="2.8" fill="#1414a6"/>
<circle cx="747.2" cy="526.8" r="5.4" fill="#fc2a10"/><circle cx="747.2" cy="526.8" r="2.8" fill="#1414a6"/>
<circle cx="766.2" cy="147.6" r="5.4" fill="#fc2a10"/><circle cx="766.2" cy="147.6" r="2.8" fill="#1414a6"/>
<circle cx="766.2" cy="166.6" r="5.4" fill="#fc2a10"/><circle cx="766.2" cy="166.6" r="2.8" fill="#1414a6"/>
<circle cx="766.2" cy="507.6" r="5.4" fill="#fc2a10"/><circle cx="766.2" cy="507.6" r="2.8" fill="#1414a6"/>
<circle cx="766.2" cy="526.8" r="5.4" fill="#fc2a10"/><circle cx="766.2" cy="526.8" r="2.8" fill="#1414a6"/>
<circle cx="785.1" cy="147.6" r="5.4" fill="#fc2a10"/><circle cx="785.1" cy="147.6" r="2.8" fill="#1414a6"/>
<circle cx="785.1" cy="166.6" r="5.4" fill="#fc2a10"/><circle cx="785.1" cy="166.6" r="2.8" fill="#1414a6"/>
<circle cx="785.1" cy="507.6" r="5.4" fill="#fc2a10"/><circle cx="785.1" cy="507.6" r="2.8" fill="#1414a6"/>
<circle cx="785.1" cy="526.8" r="5.4" fill="#fc2a10"/><circle cx="785.1" cy="526.8" r="2.8" fill="#1414a6"/>
<circle cx="804.1" cy="147.6" r="5.4" fill="#fc2a10"/><circle cx="804.1" cy="147.6" r="2.8" fill="#1414a6"/>
<circle cx="804.1" cy="166.6" r="5.4" fill="#fc2a10"/><circle cx="804.1" cy="166.6" r="2.8" fill="#1414a6"/>
<circle cx="804.1" cy="507.6" r="5.4" fill="#fc2a10"/><circle cx="804.1" cy="507.6" r="2.8" fill="#1414a6"/>
<circle cx="804.1" cy="526.8" r="5.4" fill="#fc2a10"/><circle cx="804.1" cy="526.8" r="2.8" fill="#1414a6"/>
<circle cx="823.0" cy="147.6" r="5.4" fill="#fc2a10"/><circle cx="823.0" cy="147.6" r="2.8" fill="#1414a6"/>
<circle cx="823.0" cy="166.6" r="5.4" fill="#fc2a10"/><circle cx="823.0" cy="166.6" r="2.8" fill="#1414a6"/>
<circle cx="823.0" cy="507.6" r="5.4" fill="#fc2a10"/><circle cx="823.0" cy="507.6" r="2.8" fill="#1414a6"/>
<circle cx="823.0" cy="526.8" r="5.4" fill="#fc2a10"/><circle cx="823.0" cy="526.8" r="2.8" fill="#1414a6"/>
<circle cx="841.9" cy="147.6" r="5.4" fill="#fc2a10"/><circle cx="841.9" cy="147.6" r="2.8" fill="#1414a6"/>
<circle cx="841.9" cy="166.6" r="5.4" fill="#fc2a10"/><circle cx="841.9" cy="166.6" r="2.8" fill="#1414a6"/>
<circle cx="841.9" cy="507.6" r="5.4" fill="#fc2a10"/><circle cx="841.9" cy="507.6" r="2.8" fill="#1414a6"/>
<circle cx="841.9" cy="526.8" r="5.4" fill="#fc2a10"/><circle cx="841.9" cy="526.8" r="2.8" fill="#1414a6"/>
<circle cx="860.9" cy="147.6" r="5.4" fill="#fc2a10"/><circle cx="860.9" cy="147.6" r="2.8" fill="#1414a6"/>
<circle cx="860.9" cy="166.6" r="5.4" fill="#fc2a10"/><circle cx="860.9" cy="166.6" r="2.8" fill="#1414a6"/>
<circle cx="860.9" cy="507.6" r="5.4" fill="#fc2a10"/><circle cx="860.9" cy="507.6" r="2.8" fill="#1414a6"/>
<circle cx="860.9" cy="526.8" r="5.4" fill="#fc2a10"/><circle cx="860.9" cy="526.8" r="2.8" fill="#1414a6"/>
<circle cx="406.3" cy="157.4" r="16.3" fill="#fc2a10"/><circle cx="406.3" cy="157.4" r="11.8" fill="#0b6b0b"/>
<circle cx="898.8" cy="181" r="16.3" fill="#fc2a10"/><circle cx="898.8" cy="181" r="11.8" fill="#0b6b0b"/>
<circle cx="406.3" cy="517.2" r="16.3" fill="#fc2a10"/><circle cx="406.3" cy="517.2" r="11.8" fill="#0b6b0b"/>
<circle cx="898.9" cy="493" r="16.3" fill="#fc2a10"/><circle cx="898.9" cy="493" r="11.8" fill="#0b6b0b"/>
<circle cx="358.7" cy="275.6" r="15.4" fill="#d8d8d8"/><circle cx="358.7" cy="275.6" r="14.4" fill="#000"/><circle cx="358.7" cy="275.6" r="13.8" fill="#fc2a10"/><circle cx="358.7" cy="275.6" r="12.0" fill="#1414a6"/>
<circle cx="358.6" cy="360.6" r="15.4" fill="#d8d8d8"/><circle cx="358.6" cy="360.6" r="14.4" fill="#000"/><circle cx="358.6" cy="360.6" r="13.8" fill="#fc2a10"/><circle cx="358.6" cy="360.6" r="12.0" fill="#1414a6"/>
<circle cx="381.4" cy="259.5" r="8.4" fill="#fc2a10"/><circle cx="381.4" cy="259.5" r="5.6" fill="#1414a6"/>
<circle cx="381.6" cy="376.5" r="8.4" fill="#fc2a10"/><circle cx="381.6" cy="376.5" r="5.6" fill="#1414a6"/>
<circle cx="321.9" cy="271.0" r="5.4" fill="#fc2a10"/><circle cx="321.9" cy="271.0" r="3.4" fill="#1414a6"/>
<circle cx="333.6" cy="290.1" r="5.4" fill="#fc2a10"/><circle cx="333.6" cy="290.1" r="3.4" fill="#1414a6"/>
<circle cx="321.8" cy="346.4" r="5.4" fill="#fc2a10"/><circle cx="321.8" cy="346.4" r="3.4" fill="#1414a6"/>
<circle cx="333.4" cy="365.5" r="5.4" fill="#fc2a10"/><circle cx="333.4" cy="365.5" r="3.4" fill="#1414a6"/>
<circle cx="325.5" cy="398.5" r="5.4" fill="#fc2a10"/><circle cx="325.5" cy="398.5" r="3.4" fill="#1414a6"/>
<rect x="400.9" y="279.9" width="10.5" height="10.5" fill="#fc2a10"/><circle cx="406.1" cy="285.2" r="3.2" fill="#1414a6"/>
<circle cx="406.1" cy="303.8" r="5.6" fill="#fc2a10"/><circle cx="406.1" cy="303.8" r="3.4" fill="#1414a6"/>
<circle cx="406.1" cy="322.8" r="5.6" fill="#fc2a10"/><circle cx="406.1" cy="322.8" r="3.4" fill="#1414a6"/>
<circle cx="406.1" cy="341.6" r="5.6" fill="#fc2a10"/><circle cx="406.1" cy="341.6" r="3.4" fill="#1414a6"/>
<circle cx="425.0" cy="294.4" r="5.6" fill="#fc2a10"/><circle cx="425.0" cy="294.4" r="3.4" fill="#1414a6"/>
<circle cx="425.0" cy="313.0" r="5.6" fill="#fc2a10"/><circle cx="425.0" cy="313.0" r="3.4" fill="#1414a6"/>
<circle cx="425.0" cy="331.2" r="5.6" fill="#fc2a10"/><circle cx="425.0" cy="331.2" r="3.4" fill="#1414a6"/>
<circle cx="425.0" cy="351.6" r="5.6" fill="#fc2a10"/><circle cx="425.0" cy="351.6" r="3.4" fill="#1414a6"/>
<rect x="329.3" y="455.9" width="13" height="28" rx="6.5" fill="#fc2a10"/><rect x="332.3" y="459.4" width="7" height="21" rx="3.5" fill="#1414a6"/>
<rect x="374.6" y="454.4" width="13" height="31" rx="6.5" fill="#fc2a10"/><rect x="377.6" y="457.9" width="7" height="24" rx="3.5" fill="#1414a6"/>
<rect x="344.0" y="499.0" width="28" height="12" rx="6.0" fill="#fc2a10"/><rect x="348.0" y="502.0" width="20" height="6" rx="3.0" fill="#1414a6"/>
<rect x="852.0" y="359.0" width="25" height="14" rx="7.0" fill="#fc2a10"/><rect x="857.0" y="362.5" width="15" height="7" rx="3.5" fill="#1414a6"/>
<rect x="852.0" y="457.0" width="25" height="14" rx="7.0" fill="#fc2a10"/><rect x="857.0" y="460.5" width="15" height="7" rx="3.5" fill="#1414a6"/>
<rect x="919.8" y="324.8" width="18" height="11" rx="5.5" fill="#fc2a10"/><rect x="923.8" y="328.3" width="10" height="4" rx="2.0" fill="#1414a6"/>
<rect x="919.8" y="371.2" width="18" height="11" rx="5.5" fill="#fc2a10"/><rect x="923.8" y="374.7" width="10" height="4" rx="2.0" fill="#1414a6"/>
<circle cx="407.0" cy="461.6" r="5.6" fill="#fc2a10"/><circle cx="407.0" cy="461.6" r="3.4" fill="#1414a6"/>
<circle cx="425.8" cy="461.6" r="5.6" fill="#fc2a10"/><circle cx="425.8" cy="461.6" r="3.4" fill="#1414a6"/>
<circle cx="407.0" cy="480.0" r="5.6" fill="#fc2a10"/><circle cx="407.0" cy="480.0" r="3.4" fill="#1414a6"/>
<circle cx="425.8" cy="480.0" r="5.6" fill="#fc2a10"/><circle cx="425.8" cy="480.0" r="3.4" fill="#1414a6"/>
<circle cx="844.7" cy="389.0" r="5.8" fill="#fc2a10"/><circle cx="844.7" cy="389.0" r="3.4" fill="#1414a6"/>
<circle cx="822.8" cy="441.0" r="5.8" fill="#fc2a10"/><circle cx="822.8" cy="441.0" r="3.4" fill="#1414a6"/>
<circle cx="844.7" cy="441.0" r="5.8" fill="#fc2a10"/><circle cx="844.7" cy="441.0" r="3.4" fill="#1414a6"/>
<rect x="838.9" y="402" width="11.6" height="26" rx="5.8" fill="#fc2a10"/><circle cx="844.7" cy="407.8" r="3.4" fill="#1414a6"/><circle cx="844.7" cy="422.4" r="3.4" fill="#1414a6"/>
<rect x="609.1" y="478.1" width="11" height="11" fill="#fc2a10"/><circle cx="614.6" cy="483.6" r="3.4" fill="#1414a6"/>
<circle cx="633.4" cy="483.6" r="6" fill="#fc2a10"/><circle cx="633.4" cy="483.6" r="3.4" fill="#1414a6"/>

</g></svg>
<div id="rpanel" class="a">
  <div class="a" style="left:0;top:0;width:4px;height:577px;background:#fafafc;border-right:1px solid #c4c6d0"></div><div class="a" style="left:7.5px;top:11px;width:1.5px;height:566px;background:#cfd1da"></div><div class="a" style="left:9px;top:560px;width:234px;height:17px;background:linear-gradient(#f0f0f0,#e6e6e8)"></div>
  <div class="a" style="left:6.5px;top:0;width:237px;height:10px;background:linear-gradient(#d4dcea,#e0e7f2)"></div>
  <div class="t" style="left:9px;top:1.8px;font-size:7.3px;color:#2a3550">Constraint Editor</div>
  <svg class="a" style="left:214px;top:0" width="29" height="10"><path d="M1,3.5 h6 l-3,3z" fill="#111"/><rect x="13" y="2.5" width="3" height="4" fill="#555"/><rect x="12" y="6.5" width="5" height="0.8" fill="#555"/><path d="M23,2.5 l5,5 M28,2.5 l-5,5" stroke="#222" stroke-width="1"/></svg>
  <div class="a" style="left:6.5px;top:11px;width:237px;height:64px;background:#fbfbfd;border-top:1px solid #d8dae4"></div>
  <div class="a" style="left:9.5px;top:14px;width:233px;height:60px;background:#efeff2;border-left:1.5px solid #b8bac4;border-top:1px solid #c0c2cc"></div>
  <div class="a" style="left:11px;top:61px;width:96px;height:12px;background:linear-gradient(#eeeef6,#e6e6f4)"></div>
  <div class="a" style="left:109px;top:61px;width:67px;height:12px;background:linear-gradient(#eeeef6,#e6e6f4)"></div>
  <div class="a" style="left:178.5px;top:61px;width:58px;height:12px;background:linear-gradient(#eeeef6,#e6e6f4)"></div>
  <div class="a" style="left:107px;top:16px;width:1.5px;height:57px;background:#c8c8d0"></div>
  <div class="a" style="left:176.5px;top:16px;width:1.5px;height:57px;background:#c8c8d0"></div>
  <div class="a" style="left:236.5px;top:16px;width:1.5px;height:58px;background:#c8c8d0"></div>
  <svg class="a" style="left:0;top:0" width="243" height="90" viewBox="957 44 243 90">
   <rect x="981" y="63" width="18" height="17" fill="#e8f0fa" stroke="#a8c0e0" stroke-width="0.6"/><rect x="981" y="63" width="18" height="2.5" fill="#f4c080"/>
   <rect x="985" y="69" width="3" height="3" fill="#80c060"/><rect x="991" y="68" width="3" height="3" fill="#80c060"/><path d="M987,80 l9,-9" stroke="#e8b060" stroke-width="2"/>
   <rect x="1014" y="63" width="17" height="17" fill="#e8f0fa" stroke="#a8c0e0" stroke-width="0.6"/><rect x="1014" y="63" width="17" height="2.5" fill="#f4c080"/><circle cx="1026" cy="78" r="3.5" fill="#70a0d0"/><circle cx="1026" cy="78" r="1.5" fill="#fff"/>
   <rect x="1041" y="64" width="19" height="16" fill="#fff" stroke="#90b0e0" stroke-width="0.6"/>
   <g fill="#80a8e0"><rect x="1042" y="65" width="4" height="3"/><rect x="1046.5" y="65" width="4" height="3"/><rect x="1051" y="65" width="4" height="3"/><rect x="1055.5" y="65" width="4" height="3"/>
   <rect x="1042" y="69" width="4" height="3"/><rect x="1046.5" y="69" width="4" height="3"/><rect x="1051" y="69" width="4" height="3"/><rect x="1055.5" y="69" width="4" height="3"/>
   <rect x="1042" y="73" width="4" height="3"/><rect x="1046.5" y="73" width="4" height="3"/><rect x="1051" y="73" width="4" height="3"/><rect x="1055.5" y="73" width="4" height="3"/>
   <rect x="1042" y="77" width="4" height="2.5"/><rect x="1046.5" y="77" width="4" height="2.5"/><rect x="1051" y="77" width="4" height="2.5"/><rect x="1055.5" y="77" width="4" height="2.5"/></g>
   <rect x="1079" y="66" width="19" height="16" rx="1.5" fill="#ececec" stroke="#444" stroke-width="0.9"/><rect x="1079" y="66" width="19" height="3" fill="#555"/><circle cx="1081" cy="65" r="3" fill="#f8e040"/>
   <path d="M1112,73 l6,-6 l4,4 l-6,2z" fill="#f0d8a0" stroke="#c8a060" stroke-width="0.5"/><path d="M1114,72 l-5,5" stroke="#aaa" stroke-width="0.8"/>
   <path d="M1150,64 l5,4 l-5,4z" fill="#c050d0"/><path d="M1165,69 l-5,4 l5,4z" fill="#4080d0"/><rect x="1147" y="66.5" width="4" height="3" fill="#c050d0"/><rect x="1164" y="71.5" width="4" height="3" fill="#4080d0"/>
   <circle cx="1192" cy="72" r="8" fill="none" stroke="#c03030" stroke-width="1.5"/><circle cx="1192" cy="72" r="5" fill="none" stroke="#c03030" stroke-width="1"/>
   <path d="M1195.5,87 l2,1.5 l-2,1.5z" fill="#222"/>
   <path d="M988.3,95.5 h3 l-1.5,1.8z M1048,95.5 h3 l-1.5,1.8z M1085.8,95.5 h3 l-1.5,1.8z" fill="#555"/>
  </svg>
  <div class="t" style="left:15.5px;top:42px;font-size:7.1px;color:#a09890">Constraints</div>
  <div class="t" style="left:55.2px;top:42px;font-size:7.1px;color:#a09890">Actuals</div>
  <div class="t" style="left:82px;top:42px;font-size:7.1px;color:#a09890">Groups</div>
  <div class="t" style="left:114px;top:42px;font-size:7.1px;color:#333">Configure</div>
  <div class="t" style="left:157px;top:42px;font-size:7.1px;color:#a09890">Pin</div>
  <div class="t" style="left:188.5px;top:42px;font-size:7.1px;color:#333">FE vs BE</div>
  <div class="t" style="left:182.5px;top:50px;font-size:7.1px;color:#333">Differences</div>
  <div class="t" style="left:222px;top:42px;font-size:7.1px;color:#333">Com</div>
  <div class="t" style="left:222px;top:50px;font-size:7.1px;color:#333">to T</div>
  <div class="t" style="left:51px;top:66px;font-size:7.1px;color:#333">Filters</div>
  <div class="t" style="left:136px;top:66px;font-size:7.1px;color:#333">Bars</div>
  <div class="t" style="left:226px;top:66px;font-size:7.1px;color:#333">View</div>
  <div class="a" style="left:10.7px;top:78.5px;width:34px;height:12px;background:#fff;border:1px solid #e4e4e8;border-bottom:none"></div>
  <div class="a" style="left:45px;top:79.5px;width:43.5px;height:11px;background:#ececec;border:1px solid #d8d8dc;border-bottom:none"></div>
  <svg class="a" style="left:0;top:77px" width="243" height="20" viewBox="957 121 243 20">
   <path d="M970,124 h4.5 l2,2 v6.5 h-6.5z" fill="#fff" stroke="#555" stroke-width="0.7"/>
   <rect x="1003.5" y="123.5" width="6.5" height="7.5" fill="#e0e4f0" stroke="#666" stroke-width="0.6"/><circle cx="1006.5" cy="127" r="2" fill="none" stroke="#3060b0" stroke-width="0.8"/>
   <rect x="1170.5" y="123" width="10.5" height="10" fill="#d0d0d4"/><path d="M1173,127 q4,-3 6,1 q0,3 -3,3" stroke="#5080c0" stroke-width="1" fill="none"/><path d="M1172,125 v3 h3" stroke="#5080c0" stroke-width="0.9" fill="none"/>
   <rect x="1184" y="123" width="10.5" height="10" fill="#d0d0d4"/><path d="M1192,127 q-4,-3 -6,1 q0,3 3,3" stroke="#5080c0" stroke-width="1" fill="none"/>
  </svg>
  <div class="t" style="left:25px;top:81px;font-size:7px;color:#222">Data</div>
  <div class="t" style="left:57.5px;top:81px;font-size:7px;color:#888">Settings</div>
  <div class="a" style="left:10.7px;top:90.5px;width:230.5px;height:66px;background:#e4e7f0"></div>
  <div class="sec a" style="top:92.3px"></div>
  <div class="sec a" style="top:108.5px"></div>
  <div class="sec a" style="top:124.6px"></div>
  <div class="sec a" style="top:140.7px"></div>
  <svg class="a" style="left:0;top:90px" width="243" height="80" viewBox="957 134 243 80">
   <path d="M973,149 l7,-7" stroke="#c8a020" stroke-width="1.6"/><circle cx="980.5" cy="141.5" r="1.2" fill="#2080a0"/><circle cx="973.5" cy="148.5" r="1.2" fill="#c8a020"/>
   <path d="M973,165 l7,-7" stroke="#2a6a8a" stroke-width="1.2"/><circle cx="980.5" cy="157.5" r="1.3" fill="#20a0b0"/><circle cx="973.5" cy="164.5" r="1.3" fill="#20a0b0"/>
   <rect x="976" y="172" width="4.5" height="9" rx="1" fill="#40a040"/><rect x="975" y="173" width="2" height="7" fill="#206020"/>
   <path d="M973,190 l3,2 l-3,2z M981,190 l-3,2 l3,2z" fill="#204090"/><rect x="973" y="195.5" width="9" height="2" fill="#c8a060"/><line x1="975" y1="192" x2="979" y2="192" stroke="#204090" stroke-width="0.7"/>
  </svg>
  <svg class="a" style="left:230px;top:97.8px" width="6" height="6"><path d="M0.5,0.5 L5.5,5.5 M5.5,0.5 L0.5,5.5" stroke="#333" stroke-width="0.9"/></svg><svg class="a" style="left:230px;top:114px" width="6" height="6"><path d="M0.5,0.5 L5.5,5.5 M5.5,0.5 L0.5,5.5" stroke="#333" stroke-width="0.9"/></svg><svg class="a" style="left:230px;top:130.1px" width="6" height="6"><path d="M0.5,0.5 L5.5,5.5 M5.5,0.5 L0.5,5.5" stroke="#333" stroke-width="0.9"/></svg><svg class="a" style="left:230px;top:146.2px" width="6" height="6"><path d="M0.5,0.5 L5.5,5.5 M5.5,0.5 L0.5,5.5" stroke="#333" stroke-width="0.9"/></svg><div class="t sect" style="top:96.8px">Electrical Nets</div>
  <div class="t sect" style="top:113px">Physical Nets</div>
  <div class="t sect" style="top:129.1px">Components</div>
  <div class="t sect" style="top:145.2px">Clearances</div>
  <div class="t" style="left:0;width:243px;text-align:center;top:359px;font-size:9.2px;color:#333;line-height:12.4px;white-space:normal">Select an object in PADS Professional Layout to<br>view or edit its constraints.</div>
</div>
</div></body></html>
